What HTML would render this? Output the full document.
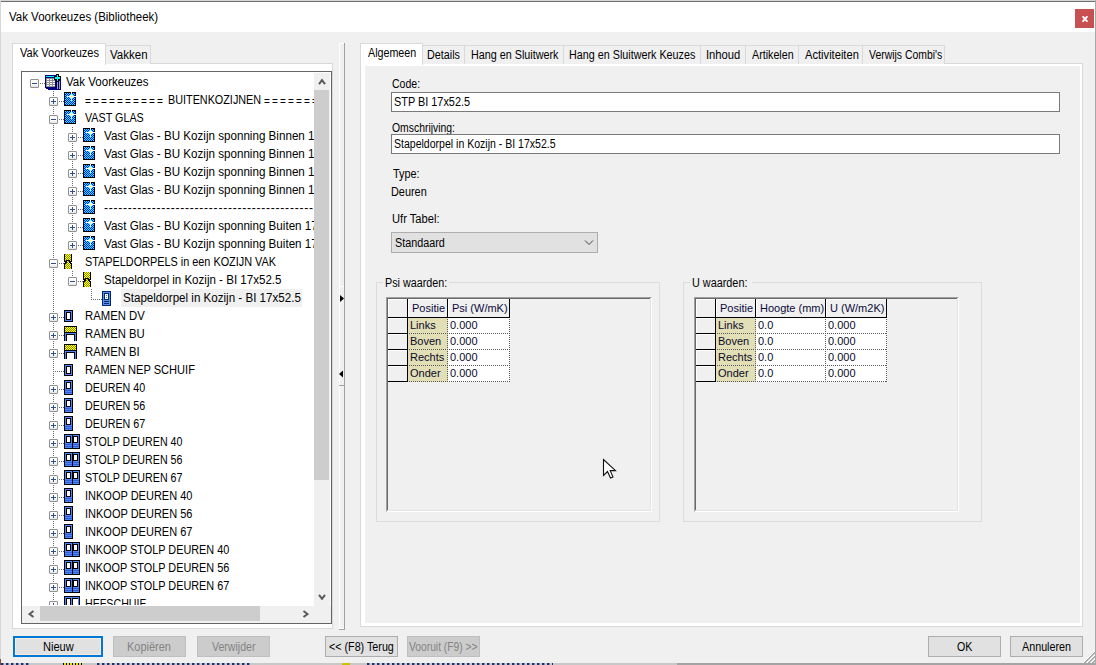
<!DOCTYPE html><html><head><meta charset="utf-8"><style>
*{margin:0;padding:0;box-sizing:border-box}
html,body{width:1096px;height:665px;overflow:hidden}
body{position:relative;background:#d6d6d6;font-family:"Liberation Sans",sans-serif;font-size:11px;color:#000}
div,svg,i{position:absolute;display:block}
.t{white-space:pre;line-height:13px;height:13px}
.tt{white-space:pre;font-size:12px;line-height:18px;height:18px}
.hd{height:1px;background:repeating-linear-gradient(to right,#6a6a6a 0 1px,transparent 1px 2px)}
.vd{width:1px;background:repeating-linear-gradient(to bottom,#6a6a6a 0 1px,transparent 1px 2px)}
.bx{width:9px;height:9px;border:1px solid #919191;border-radius:1px;background:linear-gradient(#ffffff 0,#ffffff 55%,#e4e4e4 100%)}
.bh{left:1px;top:3px;width:5px;height:1px;background:#2d4f8e}
.bv{left:3px;top:1px;width:1px;height:5px;background:#2d4f8e}
.sel{height:18px;background:#f0f0f0}
.tab{border:1px solid #d9d9d9;border-bottom:none;background:#f0f0f0}
.btn{border:1px solid #adadad;background:#e1e1e1;height:21px}
.dis{border:1px solid #bfbfbf;background:#cccccc;height:21px}
.dis .t{color:#838383}
</style></head><body>
<svg width="0" height="0" style="position:absolute"><defs><pattern id="pbc" width="2" height="2" patternUnits="userSpaceOnUse"><rect width="2" height="2" fill="#0000ff"/><rect width="1" height="1" fill="#00ffff"/><rect x="1" y="1" width="1" height="1" fill="#00ffff"/></pattern><pattern id="pyk" width="2" height="2" patternUnits="userSpaceOnUse"><rect width="2" height="2" fill="#ffff00"/><rect x="1" y="0" width="1" height="1" fill="#8a8a00"/><rect x="0" y="1" width="1" height="1" fill="#8a8a00"/></pattern></defs></svg>
<div style="left:0px;top:663px;width:677px;height:2px;background:#c8c8c8;"></div>
<div style="left:677px;top:663px;width:419px;height:2px;background:#a4a4a4;"></div>
<div style="left:1px;top:663px;width:30px;height:2px;background:repeating-linear-gradient(to right,#1d2f6e 0 2px,#7f8ab0 2px 3px,#c8c8c8 3px 5px)"></div>
<div style="left:97px;top:663px;width:153px;height:2px;background:repeating-linear-gradient(to right,#1d2f6e 0 2px,#7f8ab0 2px 3px,#c8c8c8 3px 5px)"></div>
<div style="left:367px;top:663px;width:186px;height:2px;background:repeating-linear-gradient(to right,#1d2f6e 0 2px,#7f8ab0 2px 3px,#c8c8c8 3px 5px)"></div>
<div style="left:63px;top:663px;width:19px;height:2px;background:#000;"></div>
<div style="left:64px;top:663px;width:17px;height:2px;background:repeating-linear-gradient(to right,#e8e000 0 2px,#000 2px 3px)"></div>
<div style="left:342px;top:663px;width:8px;height:2px;background:#c8c000;"></div>
<div style="left:0px;top:659px;width:1px;height:6px;background:#8a4a3a;"></div>
<div style="left:1px;top:1px;width:1094px;height:662px;background:#f0f0f0;"></div>
<div style="left:1px;top:1px;width:1094px;height:1px;background:#6e6e6e;"></div>
<div style="left:1px;top:2px;width:1094px;height:30px;background:#ffffff;"></div>
<div style="left:1095px;top:0px;width:1px;height:665px;background:#a8a8a8;"></div>
<div class="t" style="left:9.40px;top:10px;font-size:12px;line-height:14px;height:14px;transform:scaleX(0.9568);transform-origin:0 0;">Vak Voorkeuzes (Bibliotheek)</div>
<div style="left:1075px;top:9px;width:19px;height:19px;background:#c75050;"></div>
<svg style="left:1082px;top:16px" width="6" height="6" viewBox="0 0 6 6"><path d="M0.6 0.3L5.4 5.7M5.4 0.3L0.6 5.7" stroke="#fff" stroke-width="1.9"/></svg>
<div style="left:12px;top:63px;width:321px;height:566px;background:#ffffff;border:1px solid #d9d9d9"></div>
<div class="tab" style="left:105px;top:45px;width:46px;height:19px"></div>
<div class="t" style="left:109.70px;top:48px;font-size:12px;line-height:14px;height:14px;transform:scaleX(0.9590);transform-origin:0 0;">Vakken</div>
<div class="tab" style="left:12px;top:43px;width:94px;height:22px;background:#fff"></div>
<div class="t" style="left:19.80px;top:46px;font-size:12px;line-height:14px;height:14px;transform:scaleX(0.9200);transform-origin:0 0;">Vak Voorkeuzes</div>
<div style="left:21px;top:71px;width:311px;height:553px;background:#ffffff;border:1px solid #646464"></div>
<div style="left:22px;top:72px;width:292px;height:533px;overflow:hidden"><div style="left:-22px;top:-72px;width:400px;height:700px"><div class="vd" style="left:53px;top:91px;height:516px"></div>
<div class="vd" style="left:72px;top:127px;height:119px"></div>
<div class="vd" style="left:72px;top:271px;height:11px"></div>
<div class="vd" style="left:91px;top:289px;height:11px"></div>
<div class="hd" style="left:40px;top:83px;width:5px"></div>
<div class="hd" style="left:59px;top:101px;width:5px"></div>
<div class="hd" style="left:59px;top:119px;width:5px"></div>
<div class="hd" style="left:78px;top:137px;width:5px"></div>
<div class="hd" style="left:78px;top:155px;width:5px"></div>
<div class="hd" style="left:78px;top:173px;width:5px"></div>
<div class="hd" style="left:78px;top:191px;width:5px"></div>
<div class="hd" style="left:78px;top:209px;width:5px"></div>
<div class="hd" style="left:78px;top:227px;width:5px"></div>
<div class="hd" style="left:78px;top:245px;width:5px"></div>
<div class="hd" style="left:59px;top:263px;width:5px"></div>
<div class="hd" style="left:78px;top:281px;width:5px"></div>
<div class="hd" style="left:91px;top:299px;width:11px"></div>
<div class="hd" style="left:59px;top:317px;width:5px"></div>
<div class="hd" style="left:59px;top:335px;width:5px"></div>
<div class="hd" style="left:59px;top:353px;width:5px"></div>
<div class="hd" style="left:53px;top:371px;width:11px"></div>
<div class="hd" style="left:59px;top:389px;width:5px"></div>
<div class="hd" style="left:59px;top:407px;width:5px"></div>
<div class="hd" style="left:59px;top:425px;width:5px"></div>
<div class="hd" style="left:59px;top:443px;width:5px"></div>
<div class="hd" style="left:59px;top:461px;width:5px"></div>
<div class="hd" style="left:59px;top:479px;width:5px"></div>
<div class="hd" style="left:59px;top:497px;width:5px"></div>
<div class="hd" style="left:59px;top:515px;width:5px"></div>
<div class="hd" style="left:59px;top:533px;width:5px"></div>
<div class="hd" style="left:59px;top:551px;width:5px"></div>
<div class="hd" style="left:59px;top:569px;width:5px"></div>
<div class="hd" style="left:59px;top:587px;width:5px"></div>
<div class="hd" style="left:59px;top:605px;width:5px"></div>
<div class="bx" style="left:30px;top:79px"><i class="bh"></i></div>
<svg class="ic" style="left:45px;top:74px" width="16" height="16" viewBox="0 0 16 16" shape-rendering="crispEdges"><rect x="0" y="1" width="14" height="13" fill="#000080"/><rect x="1" y="14" width="13" height="1" fill="#000080"/><rect x="3" y="15" width="13" height="1" fill="#000080"/><rect x="10" y="6" width="6" height="10" fill="#000080"/><rect x="1" y="2" width="8" height="1" fill="#00ffff"/><rect x="1" y="4" width="9" height="9" fill="#909090"/><rect x="2" y="5" width="2" height="1" fill="#fff"/><rect x="5" y="5" width="2" height="1" fill="#fff"/><rect x="8" y="5" width="2" height="1" fill="#fff"/><rect x="2" y="7" width="2" height="1" fill="#fff"/><rect x="5" y="7" width="2" height="1" fill="#fff"/><rect x="8" y="7" width="2" height="1" fill="#fff"/><rect x="2" y="9" width="2" height="1" fill="#fff"/><rect x="5" y="9" width="2" height="1" fill="#fff"/><rect x="8" y="9" width="2" height="1" fill="#fff"/><rect x="2" y="11" width="2" height="1" fill="#fff"/><rect x="5" y="11" width="2" height="1" fill="#fff"/><rect x="8" y="11" width="2" height="1" fill="#fff"/><rect x="12" y="7" width="1" height="8" fill="#a0a0a0"/><rect x="14" y="7" width="1" height="8" fill="#a0a0a0"/><rect x="11" y="0" width="3" height="8" fill="#000"/><rect x="9" y="2" width="7" height="4" fill="#000"/><rect x="12" y="1" width="1" height="6" fill="#00ffff"/><rect x="10" y="3" width="5" height="2" fill="#00ffff"/></svg>
<div class="tt" style="left:66.00px;top:73px;transform:scaleX(0.9618);transform-origin:0 0;">Vak Voorkeuzes</div>
<div class="bx" style="left:49px;top:97px"><i class="bh"></i><i class="bv"></i></div>
<svg class="ic" style="left:64px;top:92px" width="12" height="14" viewBox="0 0 12 14" shape-rendering="crispEdges"><rect x="0" y="0" width="12" height="14" fill="#000"/><rect x="1" y="1" width="10" height="12" fill="url(#pbc)"/><rect x="7" y="0" width="1" height="9" fill="#fff"/><rect x="3" y="4" width="9" height="1" fill="#fff"/><rect x="6" y="3" width="3" height="3" fill="#fff"/><rect x="7" y="4" width="1" height="1" fill="#ff0"/></svg>
<div class="tt" style="left:85.17px;top:92px;transform:scaleX(0.8333);transform-origin:0 0;letter-spacing:2.592px">==========</div>
<div class="tt" style="left:167.80px;top:91px;transform:scaleX(0.9010);transform-origin:0 0;">BUITENKOZIJNEN</div>
<div class="tt" style="left:264.17px;top:92px;transform:scaleX(0.8333);transform-origin:0 0;letter-spacing:2.592px">==========</div>
<div class="bx" style="left:49px;top:115px"><i class="bh"></i></div>
<svg class="ic" style="left:64px;top:110px" width="12" height="14" viewBox="0 0 12 14" shape-rendering="crispEdges"><rect x="0" y="0" width="12" height="14" fill="#000"/><rect x="1" y="1" width="10" height="12" fill="url(#pbc)"/><rect x="7" y="0" width="1" height="9" fill="#fff"/><rect x="3" y="4" width="9" height="1" fill="#fff"/><rect x="6" y="3" width="3" height="3" fill="#fff"/><rect x="7" y="4" width="1" height="1" fill="#ff0"/></svg>
<div class="tt" style="left:84.80px;top:109px;transform:scaleX(0.8954);transform-origin:0 0;">VAST GLAS</div>
<div class="bx" style="left:68px;top:133px"><i class="bh"></i><i class="bv"></i></div>
<svg class="ic" style="left:83px;top:128px" width="12" height="14" viewBox="0 0 12 14" shape-rendering="crispEdges"><rect x="0" y="0" width="12" height="14" fill="#000"/><rect x="1" y="1" width="10" height="12" fill="url(#pbc)"/><rect x="7" y="0" width="1" height="9" fill="#fff"/><rect x="3" y="4" width="9" height="1" fill="#fff"/><rect x="6" y="3" width="3" height="3" fill="#fff"/><rect x="7" y="4" width="1" height="1" fill="#ff0"/></svg>
<div class="tt" style="left:104.00px;top:127px;transform:scaleX(0.9691);transform-origin:0 0;">Vast Glas - BU Kozijn sponning Binnen 17x52.5</div>
<div class="bx" style="left:68px;top:151px"><i class="bh"></i><i class="bv"></i></div>
<svg class="ic" style="left:83px;top:146px" width="12" height="14" viewBox="0 0 12 14" shape-rendering="crispEdges"><rect x="0" y="0" width="12" height="14" fill="#000"/><rect x="1" y="1" width="10" height="12" fill="url(#pbc)"/><rect x="7" y="0" width="1" height="9" fill="#fff"/><rect x="3" y="4" width="9" height="1" fill="#fff"/><rect x="6" y="3" width="3" height="3" fill="#fff"/><rect x="7" y="4" width="1" height="1" fill="#ff0"/></svg>
<div class="tt" style="left:104.00px;top:145px;transform:scaleX(0.9691);transform-origin:0 0;">Vast Glas - BU Kozijn sponning Binnen 17x52.5</div>
<div class="bx" style="left:68px;top:169px"><i class="bh"></i><i class="bv"></i></div>
<svg class="ic" style="left:83px;top:164px" width="12" height="14" viewBox="0 0 12 14" shape-rendering="crispEdges"><rect x="0" y="0" width="12" height="14" fill="#000"/><rect x="1" y="1" width="10" height="12" fill="url(#pbc)"/><rect x="7" y="0" width="1" height="9" fill="#fff"/><rect x="3" y="4" width="9" height="1" fill="#fff"/><rect x="6" y="3" width="3" height="3" fill="#fff"/><rect x="7" y="4" width="1" height="1" fill="#ff0"/></svg>
<div class="tt" style="left:104.00px;top:163px;transform:scaleX(0.9691);transform-origin:0 0;">Vast Glas - BU Kozijn sponning Binnen 17x52.5</div>
<div class="bx" style="left:68px;top:187px"><i class="bh"></i><i class="bv"></i></div>
<svg class="ic" style="left:83px;top:182px" width="12" height="14" viewBox="0 0 12 14" shape-rendering="crispEdges"><rect x="0" y="0" width="12" height="14" fill="#000"/><rect x="1" y="1" width="10" height="12" fill="url(#pbc)"/><rect x="7" y="0" width="1" height="9" fill="#fff"/><rect x="3" y="4" width="9" height="1" fill="#fff"/><rect x="6" y="3" width="3" height="3" fill="#fff"/><rect x="7" y="4" width="1" height="1" fill="#ff0"/></svg>
<div class="tt" style="left:104.00px;top:181px;transform:scaleX(0.9691);transform-origin:0 0;">Vast Glas - BU Kozijn sponning Binnen 17x52.5</div>
<div class="bx" style="left:68px;top:205px"><i class="bh"></i><i class="bv"></i></div>
<svg class="ic" style="left:83px;top:200px" width="12" height="14" viewBox="0 0 12 14" shape-rendering="crispEdges"><rect x="0" y="0" width="12" height="14" fill="#000"/><rect x="1" y="1" width="10" height="12" fill="url(#pbc)"/><rect x="7" y="0" width="1" height="9" fill="#fff"/><rect x="3" y="4" width="9" height="1" fill="#fff"/><rect x="6" y="3" width="3" height="3" fill="#fff"/><rect x="7" y="4" width="1" height="1" fill="#ff0"/></svg>
<div class="tt" style="left:104px;top:199px;letter-spacing:0.77px">------------------------------------------------------------</div>
<div class="bx" style="left:68px;top:223px"><i class="bh"></i><i class="bv"></i></div>
<svg class="ic" style="left:83px;top:218px" width="12" height="14" viewBox="0 0 12 14" shape-rendering="crispEdges"><rect x="0" y="0" width="12" height="14" fill="#000"/><rect x="1" y="1" width="10" height="12" fill="url(#pbc)"/><rect x="7" y="0" width="1" height="9" fill="#fff"/><rect x="3" y="4" width="9" height="1" fill="#fff"/><rect x="6" y="3" width="3" height="3" fill="#fff"/><rect x="7" y="4" width="1" height="1" fill="#ff0"/></svg>
<div class="tt" style="left:104.00px;top:217px;transform:scaleX(0.9691);transform-origin:0 0;">Vast Glas - BU Kozijn sponning Buiten 17x52.5</div>
<div class="bx" style="left:68px;top:241px"><i class="bh"></i><i class="bv"></i></div>
<svg class="ic" style="left:83px;top:236px" width="12" height="14" viewBox="0 0 12 14" shape-rendering="crispEdges"><rect x="0" y="0" width="12" height="14" fill="#000"/><rect x="1" y="1" width="10" height="12" fill="url(#pbc)"/><rect x="7" y="0" width="1" height="9" fill="#fff"/><rect x="3" y="4" width="9" height="1" fill="#fff"/><rect x="6" y="3" width="3" height="3" fill="#fff"/><rect x="7" y="4" width="1" height="1" fill="#ff0"/></svg>
<div class="tt" style="left:104.00px;top:235px;transform:scaleX(0.9691);transform-origin:0 0;">Vast Glas - BU Kozijn sponning Buiten 17x52.5</div>
<div class="bx" style="left:49px;top:259px"><i class="bh"></i></div>
<svg class="ic" style="left:64px;top:254px" width="8" height="15" viewBox="0 0 8 15" shape-rendering="crispEdges"><rect x="0" y="0" width="8" height="15" fill="url(#pyk)"/><rect x="0" y="0" width="1" height="1" fill="#000"/><rect x="7" y="0" width="1" height="1" fill="#000"/><rect x="0" y="1" width="1" height="1" fill="#000"/><rect x="7" y="1" width="1" height="1" fill="#000"/><rect x="0" y="2" width="1" height="1" fill="#000"/><rect x="7" y="2" width="1" height="1" fill="#000"/><rect x="0" y="3" width="1" height="1" fill="#000"/><rect x="7" y="3" width="1" height="1" fill="#000"/><rect x="0" y="4" width="1" height="1" fill="#000"/><rect x="7" y="4" width="1" height="1" fill="#000"/><rect x="0" y="5" width="1" height="1" fill="#000"/><rect x="7" y="5" width="1" height="1" fill="#000"/><rect x="0" y="6" width="1" height="1" fill="#000"/><rect x="2" y="6" width="1" height="1" fill="#000"/><rect x="3" y="6" width="1" height="1" fill="#000"/><rect x="4" y="6" width="1" height="1" fill="#000"/><rect x="5" y="6" width="1" height="1" fill="#000"/><rect x="7" y="6" width="1" height="1" fill="#000"/><rect x="0" y="7" width="1" height="1" fill="#000"/><rect x="1" y="7" width="1" height="1" fill="#000"/><rect x="2" y="7" width="1" height="1" fill="#000"/><rect x="5" y="7" width="1" height="1" fill="#000"/><rect x="6" y="7" width="1" height="1" fill="#000"/><rect x="7" y="7" width="1" height="1" fill="#000"/><rect x="0" y="8" width="1" height="1" fill="#fff"/><rect x="1" y="8" width="1" height="1" fill="#000"/><rect x="2" y="8" width="1" height="1" fill="#000"/><rect x="5" y="8" width="1" height="1" fill="#000"/><rect x="6" y="8" width="1" height="1" fill="#000"/><rect x="7" y="8" width="1" height="1" fill="#fff"/><rect x="0" y="9" width="1" height="1" fill="#000"/><rect x="1" y="9" width="1" height="1" fill="#000"/><rect x="6" y="9" width="1" height="1" fill="#000"/><rect x="7" y="9" width="1" height="1" fill="#000"/><rect x="0" y="10" width="1" height="1" fill="#000"/><rect x="7" y="10" width="1" height="1" fill="#000"/><rect x="0" y="11" width="1" height="1" fill="#000"/><rect x="7" y="11" width="1" height="1" fill="#000"/><rect x="0" y="12" width="1" height="1" fill="#000"/><rect x="7" y="12" width="1" height="1" fill="#000"/><rect x="0" y="13" width="1" height="1" fill="#000"/><rect x="7" y="13" width="1" height="1" fill="#000"/><rect x="0" y="14" width="1" height="1" fill="#000"/><rect x="7" y="14" width="1" height="1" fill="#000"/></svg>
<div class="tt" style="left:84.69px;top:253px;transform:scaleX(0.9052);transform-origin:0 0;">STAPELDORPELS in een KOZIJN VAK</div>
<div class="bx" style="left:68px;top:277px"><i class="bh"></i></div>
<svg class="ic" style="left:83px;top:272px" width="8" height="15" viewBox="0 0 8 15" shape-rendering="crispEdges"><rect x="0" y="0" width="8" height="15" fill="url(#pyk)"/><rect x="0" y="0" width="1" height="1" fill="#000"/><rect x="7" y="0" width="1" height="1" fill="#000"/><rect x="0" y="1" width="1" height="1" fill="#000"/><rect x="7" y="1" width="1" height="1" fill="#000"/><rect x="0" y="2" width="1" height="1" fill="#000"/><rect x="7" y="2" width="1" height="1" fill="#000"/><rect x="0" y="3" width="1" height="1" fill="#000"/><rect x="7" y="3" width="1" height="1" fill="#000"/><rect x="0" y="4" width="1" height="1" fill="#000"/><rect x="7" y="4" width="1" height="1" fill="#000"/><rect x="0" y="5" width="1" height="1" fill="#000"/><rect x="7" y="5" width="1" height="1" fill="#000"/><rect x="0" y="6" width="1" height="1" fill="#000"/><rect x="2" y="6" width="1" height="1" fill="#000"/><rect x="3" y="6" width="1" height="1" fill="#000"/><rect x="4" y="6" width="1" height="1" fill="#000"/><rect x="5" y="6" width="1" height="1" fill="#000"/><rect x="7" y="6" width="1" height="1" fill="#000"/><rect x="0" y="7" width="1" height="1" fill="#000"/><rect x="1" y="7" width="1" height="1" fill="#000"/><rect x="2" y="7" width="1" height="1" fill="#000"/><rect x="5" y="7" width="1" height="1" fill="#000"/><rect x="6" y="7" width="1" height="1" fill="#000"/><rect x="7" y="7" width="1" height="1" fill="#000"/><rect x="0" y="8" width="1" height="1" fill="#fff"/><rect x="1" y="8" width="1" height="1" fill="#000"/><rect x="2" y="8" width="1" height="1" fill="#000"/><rect x="5" y="8" width="1" height="1" fill="#000"/><rect x="6" y="8" width="1" height="1" fill="#000"/><rect x="7" y="8" width="1" height="1" fill="#fff"/><rect x="0" y="9" width="1" height="1" fill="#000"/><rect x="1" y="9" width="1" height="1" fill="#000"/><rect x="6" y="9" width="1" height="1" fill="#000"/><rect x="7" y="9" width="1" height="1" fill="#000"/><rect x="0" y="10" width="1" height="1" fill="#000"/><rect x="7" y="10" width="1" height="1" fill="#000"/><rect x="0" y="11" width="1" height="1" fill="#000"/><rect x="7" y="11" width="1" height="1" fill="#000"/><rect x="0" y="12" width="1" height="1" fill="#000"/><rect x="7" y="12" width="1" height="1" fill="#000"/><rect x="0" y="13" width="1" height="1" fill="#000"/><rect x="7" y="13" width="1" height="1" fill="#000"/><rect x="0" y="14" width="1" height="1" fill="#000"/><rect x="7" y="14" width="1" height="1" fill="#000"/></svg>
<div class="tt" style="left:103.84px;top:271px;transform:scaleX(0.9639);transform-origin:0 0;">Stapeldorpel in Kozijn - BI 17x52.5</div>
<svg class="ic" style="left:102px;top:291px" width="9" height="15" viewBox="0 0 9 15" shape-rendering="crispEdges"><rect x="0" y="0" width="1" height="1" fill="#00286e"/><rect x="1" y="0" width="1" height="1" fill="#00286e"/><rect x="2" y="0" width="1" height="1" fill="#00286e"/><rect x="3" y="0" width="1" height="1" fill="#00286e"/><rect x="4" y="0" width="1" height="1" fill="#00286e"/><rect x="5" y="0" width="1" height="1" fill="#00286e"/><rect x="6" y="0" width="1" height="1" fill="#00286e"/><rect x="7" y="0" width="1" height="1" fill="#00286e"/><rect x="8" y="0" width="1" height="1" fill="#00286e"/><rect x="0" y="1" width="1" height="1" fill="#00286e"/><rect x="1" y="1" width="1" height="1" fill="#5b8ef0"/><rect x="2" y="1" width="1" height="1" fill="#5b8ef0"/><rect x="3" y="1" width="1" height="1" fill="#5b8ef0"/><rect x="4" y="1" width="1" height="1" fill="#5b8ef0"/><rect x="5" y="1" width="1" height="1" fill="#5b8ef0"/><rect x="6" y="1" width="1" height="1" fill="#5b8ef0"/><rect x="7" y="1" width="1" height="1" fill="#5b8ef0"/><rect x="8" y="1" width="1" height="1" fill="#00286e"/><rect x="0" y="2" width="1" height="1" fill="#00286e"/><rect x="1" y="2" width="1" height="1" fill="#5b8ef0"/><rect x="2" y="2" width="1" height="1" fill="#00286e"/><rect x="3" y="2" width="1" height="1" fill="#00286e"/><rect x="4" y="2" width="1" height="1" fill="#00286e"/><rect x="5" y="2" width="1" height="1" fill="#00286e"/><rect x="6" y="2" width="1" height="1" fill="#00286e"/><rect x="7" y="2" width="1" height="1" fill="#5b8ef0"/><rect x="8" y="2" width="1" height="1" fill="#00286e"/><rect x="0" y="3" width="1" height="1" fill="#00286e"/><rect x="1" y="3" width="1" height="1" fill="#5b8ef0"/><rect x="2" y="3" width="1" height="1" fill="#00286e"/><rect x="3" y="3" width="1" height="1" fill="#ffffff"/><rect x="4" y="3" width="1" height="1" fill="#ffffff"/><rect x="5" y="3" width="1" height="1" fill="#ffffff"/><rect x="6" y="3" width="1" height="1" fill="#00286e"/><rect x="7" y="3" width="1" height="1" fill="#5b8ef0"/><rect x="8" y="3" width="1" height="1" fill="#00286e"/><rect x="0" y="4" width="1" height="1" fill="#00286e"/><rect x="1" y="4" width="1" height="1" fill="#5b8ef0"/><rect x="2" y="4" width="1" height="1" fill="#00286e"/><rect x="3" y="4" width="1" height="1" fill="#ffffff"/><rect x="4" y="4" width="1" height="1" fill="#4a7ae8"/><rect x="5" y="4" width="1" height="1" fill="#ffffff"/><rect x="6" y="4" width="1" height="1" fill="#00286e"/><rect x="7" y="4" width="1" height="1" fill="#5b8ef0"/><rect x="8" y="4" width="1" height="1" fill="#00286e"/><rect x="0" y="5" width="1" height="1" fill="#00286e"/><rect x="1" y="5" width="1" height="1" fill="#5b8ef0"/><rect x="2" y="5" width="1" height="1" fill="#00286e"/><rect x="3" y="5" width="1" height="1" fill="#ffffff"/><rect x="4" y="5" width="1" height="1" fill="#ffffff"/><rect x="5" y="5" width="1" height="1" fill="#ffffff"/><rect x="6" y="5" width="1" height="1" fill="#00286e"/><rect x="7" y="5" width="1" height="1" fill="#5b8ef0"/><rect x="8" y="5" width="1" height="1" fill="#00286e"/><rect x="0" y="6" width="1" height="1" fill="#00286e"/><rect x="1" y="6" width="1" height="1" fill="#5b8ef0"/><rect x="2" y="6" width="1" height="1" fill="#00286e"/><rect x="3" y="6" width="1" height="1" fill="#ffffff"/><rect x="4" y="6" width="1" height="1" fill="#4a7ae8"/><rect x="5" y="6" width="1" height="1" fill="#ffffff"/><rect x="6" y="6" width="1" height="1" fill="#00286e"/><rect x="7" y="6" width="1" height="1" fill="#5b8ef0"/><rect x="8" y="6" width="1" height="1" fill="#00286e"/><rect x="0" y="7" width="1" height="1" fill="#00286e"/><rect x="1" y="7" width="1" height="1" fill="#5b8ef0"/><rect x="2" y="7" width="1" height="1" fill="#00286e"/><rect x="3" y="7" width="1" height="1" fill="#ffffff"/><rect x="4" y="7" width="1" height="1" fill="#ffffff"/><rect x="5" y="7" width="1" height="1" fill="#ffffff"/><rect x="6" y="7" width="1" height="1" fill="#00286e"/><rect x="7" y="7" width="1" height="1" fill="#5b8ef0"/><rect x="8" y="7" width="1" height="1" fill="#00286e"/><rect x="0" y="8" width="1" height="1" fill="#00286e"/><rect x="1" y="8" width="1" height="1" fill="#5b8ef0"/><rect x="2" y="8" width="1" height="1" fill="#00286e"/><rect x="3" y="8" width="1" height="1" fill="#00286e"/><rect x="4" y="8" width="1" height="1" fill="#00286e"/><rect x="5" y="8" width="1" height="1" fill="#00286e"/><rect x="6" y="8" width="1" height="1" fill="#00286e"/><rect x="7" y="8" width="1" height="1" fill="#5b8ef0"/><rect x="8" y="8" width="1" height="1" fill="#00286e"/><rect x="0" y="9" width="1" height="1" fill="#00286e"/><rect x="1" y="9" width="1" height="1" fill="#5b8ef0"/><rect x="2" y="9" width="1" height="1" fill="#5b8ef0"/><rect x="3" y="9" width="1" height="1" fill="#5b8ef0"/><rect x="4" y="9" width="1" height="1" fill="#5b8ef0"/><rect x="5" y="9" width="1" height="1" fill="#5b8ef0"/><rect x="6" y="9" width="1" height="1" fill="#5b8ef0"/><rect x="7" y="9" width="1" height="1" fill="#5b8ef0"/><rect x="8" y="9" width="1" height="1" fill="#00286e"/><rect x="0" y="10" width="1" height="1" fill="#00286e"/><rect x="1" y="10" width="1" height="1" fill="#5b8ef0"/><rect x="2" y="10" width="1" height="1" fill="#00286e"/><rect x="3" y="10" width="1" height="1" fill="#00286e"/><rect x="4" y="10" width="1" height="1" fill="#00286e"/><rect x="5" y="10" width="1" height="1" fill="#00286e"/><rect x="6" y="10" width="1" height="1" fill="#00286e"/><rect x="7" y="10" width="1" height="1" fill="#5b8ef0"/><rect x="8" y="10" width="1" height="1" fill="#00286e"/><rect x="0" y="11" width="1" height="1" fill="#00286e"/><rect x="1" y="11" width="1" height="1" fill="#5b8ef0"/><rect x="2" y="11" width="1" height="1" fill="#5b8ef0"/><rect x="3" y="11" width="1" height="1" fill="#5b8ef0"/><rect x="4" y="11" width="1" height="1" fill="#5b8ef0"/><rect x="5" y="11" width="1" height="1" fill="#5b8ef0"/><rect x="6" y="11" width="1" height="1" fill="#5b8ef0"/><rect x="7" y="11" width="1" height="1" fill="#5b8ef0"/><rect x="8" y="11" width="1" height="1" fill="#00286e"/><rect x="0" y="12" width="1" height="1" fill="#00286e"/><rect x="1" y="12" width="1" height="1" fill="#5b8ef0"/><rect x="2" y="12" width="1" height="1" fill="#00286e"/><rect x="3" y="12" width="1" height="1" fill="#00286e"/><rect x="4" y="12" width="1" height="1" fill="#00286e"/><rect x="5" y="12" width="1" height="1" fill="#00286e"/><rect x="6" y="12" width="1" height="1" fill="#00286e"/><rect x="7" y="12" width="1" height="1" fill="#5b8ef0"/><rect x="8" y="12" width="1" height="1" fill="#00286e"/><rect x="0" y="13" width="1" height="1" fill="#00286e"/><rect x="1" y="13" width="1" height="1" fill="#5b8ef0"/><rect x="2" y="13" width="1" height="1" fill="#5b8ef0"/><rect x="3" y="13" width="1" height="1" fill="#5b8ef0"/><rect x="4" y="13" width="1" height="1" fill="#5b8ef0"/><rect x="5" y="13" width="1" height="1" fill="#5b8ef0"/><rect x="6" y="13" width="1" height="1" fill="#5b8ef0"/><rect x="7" y="13" width="1" height="1" fill="#5b8ef0"/><rect x="8" y="13" width="1" height="1" fill="#00286e"/><rect x="0" y="14" width="1" height="1" fill="#00286e"/><rect x="1" y="14" width="1" height="1" fill="#00286e"/><rect x="2" y="14" width="1" height="1" fill="#00286e"/><rect x="3" y="14" width="1" height="1" fill="#00286e"/><rect x="4" y="14" width="1" height="1" fill="#00286e"/><rect x="5" y="14" width="1" height="1" fill="#00286e"/><rect x="6" y="14" width="1" height="1" fill="#00286e"/><rect x="7" y="14" width="1" height="1" fill="#00286e"/><rect x="8" y="14" width="1" height="1" fill="#00286e"/></svg>
<div class="sel" style="left:121px;top:289px;width:181px"></div>
<div class="tt" style="left:122.83px;top:289px;transform:scaleX(0.9661);transform-origin:0 0;">Stapeldorpel in Kozijn - BI 17x52.5</div>
<div class="bx" style="left:49px;top:313px"><i class="bh"></i><i class="bv"></i></div>
<svg class="ic" style="left:64px;top:310px" width="9" height="12" viewBox="0 0 9 12" shape-rendering="crispEdges"><rect x="0" y="0" width="9" height="12" fill="#000"/><rect x="1" y="1" width="7" height="10" fill="#4f86f7"/><rect x="2" y="2" width="5" height="8" fill="#000"/><rect x="3" y="3" width="3" height="6" fill="#fff"/></svg>
<div class="tt" style="left:85.06px;top:307px;transform:scaleX(0.9435);transform-origin:0 0;">RAMEN DV</div>
<div class="bx" style="left:49px;top:331px"><i class="bh"></i><i class="bv"></i></div>
<svg class="ic" style="left:64px;top:326px" width="13" height="15" viewBox="0 0 13 15" shape-rendering="crispEdges"><rect x="0" y="0" width="13" height="7" fill="#000"/><rect x="1" y="1" width="11" height="5" fill="url(#pyk)"/><rect x="0" y="7" width="13" height="8" fill="#000"/><rect x="1" y="7" width="11" height="1" fill="#4f86f7"/><rect x="1" y="7" width="1" height="8" fill="#4f86f7"/><rect x="11" y="7" width="1" height="8" fill="#4f86f7"/><rect x="3" y="9" width="7" height="6" fill="#fff"/></svg>
<div class="tt" style="left:85.06px;top:325px;transform:scaleX(0.9435);transform-origin:0 0;">RAMEN BU</div>
<div class="bx" style="left:49px;top:349px"><i class="bh"></i><i class="bv"></i></div>
<svg class="ic" style="left:64px;top:344px" width="13" height="15" viewBox="0 0 13 15" shape-rendering="crispEdges"><rect x="0" y="0" width="13" height="7" fill="#000"/><rect x="1" y="1" width="11" height="5" fill="url(#pyk)"/><rect x="0" y="7" width="13" height="8" fill="#000"/><rect x="1" y="7" width="11" height="1" fill="#4f86f7"/><rect x="1" y="7" width="1" height="8" fill="#4f86f7"/><rect x="11" y="7" width="1" height="8" fill="#4f86f7"/><rect x="3" y="9" width="7" height="6" fill="#fff"/></svg>
<div class="tt" style="left:85.06px;top:343px;transform:scaleX(0.9435);transform-origin:0 0;">RAMEN BI</div>
<svg class="ic" style="left:64px;top:364px" width="9" height="12" viewBox="0 0 9 12" shape-rendering="crispEdges"><rect x="0" y="0" width="9" height="12" fill="#000"/><rect x="1" y="1" width="7" height="10" fill="#4f86f7"/><rect x="2" y="2" width="5" height="8" fill="#000"/><rect x="3" y="3" width="3" height="6" fill="#fff"/></svg>
<div class="tt" style="left:85.08px;top:361px;transform:scaleX(0.9229);transform-origin:0 0;">RAMEN NEP SCHUIF</div>
<div class="bx" style="left:49px;top:385px"><i class="bh"></i><i class="bv"></i></div>
<svg class="ic" style="left:64px;top:380px" width="9" height="15" viewBox="0 0 9 15" shape-rendering="crispEdges"><rect x="0" y="0" width="1" height="1" fill="#000"/><rect x="1" y="0" width="1" height="1" fill="#000"/><rect x="2" y="0" width="1" height="1" fill="#000"/><rect x="3" y="0" width="1" height="1" fill="#000"/><rect x="4" y="0" width="1" height="1" fill="#000"/><rect x="5" y="0" width="1" height="1" fill="#000"/><rect x="6" y="0" width="1" height="1" fill="#000"/><rect x="7" y="0" width="1" height="1" fill="#000"/><rect x="8" y="0" width="1" height="1" fill="#000"/><rect x="0" y="1" width="1" height="1" fill="#000"/><rect x="1" y="1" width="1" height="1" fill="#4f86f7"/><rect x="2" y="1" width="1" height="1" fill="#4f86f7"/><rect x="3" y="1" width="1" height="1" fill="#4f86f7"/><rect x="4" y="1" width="1" height="1" fill="#4f86f7"/><rect x="5" y="1" width="1" height="1" fill="#4f86f7"/><rect x="6" y="1" width="1" height="1" fill="#4f86f7"/><rect x="7" y="1" width="1" height="1" fill="#4f86f7"/><rect x="8" y="1" width="1" height="1" fill="#000"/><rect x="0" y="2" width="1" height="1" fill="#000"/><rect x="1" y="2" width="1" height="1" fill="#4f86f7"/><rect x="2" y="2" width="1" height="1" fill="#000"/><rect x="3" y="2" width="1" height="1" fill="#000"/><rect x="4" y="2" width="1" height="1" fill="#000"/><rect x="5" y="2" width="1" height="1" fill="#000"/><rect x="6" y="2" width="1" height="1" fill="#000"/><rect x="7" y="2" width="1" height="1" fill="#4f86f7"/><rect x="8" y="2" width="1" height="1" fill="#000"/><rect x="0" y="3" width="1" height="1" fill="#000"/><rect x="1" y="3" width="1" height="1" fill="#4f86f7"/><rect x="2" y="3" width="1" height="1" fill="#000"/><rect x="3" y="3" width="1" height="1" fill="#fff"/><rect x="4" y="3" width="1" height="1" fill="#fff"/><rect x="5" y="3" width="1" height="1" fill="#fff"/><rect x="6" y="3" width="1" height="1" fill="#000"/><rect x="7" y="3" width="1" height="1" fill="#4f86f7"/><rect x="8" y="3" width="1" height="1" fill="#000"/><rect x="0" y="4" width="1" height="1" fill="#000"/><rect x="1" y="4" width="1" height="1" fill="#4f86f7"/><rect x="2" y="4" width="1" height="1" fill="#000"/><rect x="3" y="4" width="1" height="1" fill="#fff"/><rect x="4" y="4" width="1" height="1" fill="#fff"/><rect x="5" y="4" width="1" height="1" fill="#fff"/><rect x="6" y="4" width="1" height="1" fill="#000"/><rect x="7" y="4" width="1" height="1" fill="#4f86f7"/><rect x="8" y="4" width="1" height="1" fill="#000"/><rect x="0" y="5" width="1" height="1" fill="#000"/><rect x="1" y="5" width="1" height="1" fill="#4f86f7"/><rect x="2" y="5" width="1" height="1" fill="#000"/><rect x="3" y="5" width="1" height="1" fill="#fff"/><rect x="4" y="5" width="1" height="1" fill="#fff"/><rect x="5" y="5" width="1" height="1" fill="#fff"/><rect x="6" y="5" width="1" height="1" fill="#000"/><rect x="7" y="5" width="1" height="1" fill="#4f86f7"/><rect x="8" y="5" width="1" height="1" fill="#000"/><rect x="0" y="6" width="1" height="1" fill="#000"/><rect x="1" y="6" width="1" height="1" fill="#4f86f7"/><rect x="2" y="6" width="1" height="1" fill="#000"/><rect x="3" y="6" width="1" height="1" fill="#fff"/><rect x="4" y="6" width="1" height="1" fill="#fff"/><rect x="5" y="6" width="1" height="1" fill="#fff"/><rect x="6" y="6" width="1" height="1" fill="#000"/><rect x="7" y="6" width="1" height="1" fill="#4f86f7"/><rect x="8" y="6" width="1" height="1" fill="#000"/><rect x="0" y="7" width="1" height="1" fill="#000"/><rect x="1" y="7" width="1" height="1" fill="#4f86f7"/><rect x="2" y="7" width="1" height="1" fill="#000"/><rect x="3" y="7" width="1" height="1" fill="#fff"/><rect x="4" y="7" width="1" height="1" fill="#fff"/><rect x="5" y="7" width="1" height="1" fill="#fff"/><rect x="6" y="7" width="1" height="1" fill="#000"/><rect x="7" y="7" width="1" height="1" fill="#4f86f7"/><rect x="8" y="7" width="1" height="1" fill="#000"/><rect x="0" y="8" width="1" height="1" fill="#000"/><rect x="1" y="8" width="1" height="1" fill="#4f86f7"/><rect x="2" y="8" width="1" height="1" fill="#000"/><rect x="3" y="8" width="1" height="1" fill="#000"/><rect x="4" y="8" width="1" height="1" fill="#000"/><rect x="5" y="8" width="1" height="1" fill="#000"/><rect x="6" y="8" width="1" height="1" fill="#000"/><rect x="7" y="8" width="1" height="1" fill="#4f86f7"/><rect x="8" y="8" width="1" height="1" fill="#000"/><rect x="0" y="9" width="1" height="1" fill="#000"/><rect x="1" y="9" width="1" height="1" fill="#4f86f7"/><rect x="2" y="9" width="1" height="1" fill="#4f86f7"/><rect x="3" y="9" width="1" height="1" fill="#4f86f7"/><rect x="4" y="9" width="1" height="1" fill="#4f86f7"/><rect x="5" y="9" width="1" height="1" fill="#4f86f7"/><rect x="6" y="9" width="1" height="1" fill="#4f86f7"/><rect x="7" y="9" width="1" height="1" fill="#4f86f7"/><rect x="8" y="9" width="1" height="1" fill="#000"/><rect x="0" y="10" width="1" height="1" fill="#000"/><rect x="1" y="10" width="1" height="1" fill="#2f5fdc"/><rect x="2" y="10" width="1" height="1" fill="#2f5fdc"/><rect x="3" y="10" width="1" height="1" fill="#2f5fdc"/><rect x="4" y="10" width="1" height="1" fill="#2f5fdc"/><rect x="5" y="10" width="1" height="1" fill="#2f5fdc"/><rect x="6" y="10" width="1" height="1" fill="#2f5fdc"/><rect x="7" y="10" width="1" height="1" fill="#2f5fdc"/><rect x="8" y="10" width="1" height="1" fill="#000"/><rect x="0" y="11" width="1" height="1" fill="#000"/><rect x="1" y="11" width="1" height="1" fill="#4f86f7"/><rect x="2" y="11" width="1" height="1" fill="#4f86f7"/><rect x="3" y="11" width="1" height="1" fill="#4f86f7"/><rect x="4" y="11" width="1" height="1" fill="#4f86f7"/><rect x="5" y="11" width="1" height="1" fill="#4f86f7"/><rect x="6" y="11" width="1" height="1" fill="#4f86f7"/><rect x="7" y="11" width="1" height="1" fill="#4f86f7"/><rect x="8" y="11" width="1" height="1" fill="#000"/><rect x="0" y="12" width="1" height="1" fill="#000"/><rect x="1" y="12" width="1" height="1" fill="#2f5fdc"/><rect x="2" y="12" width="1" height="1" fill="#2f5fdc"/><rect x="3" y="12" width="1" height="1" fill="#2f5fdc"/><rect x="4" y="12" width="1" height="1" fill="#2f5fdc"/><rect x="5" y="12" width="1" height="1" fill="#2f5fdc"/><rect x="6" y="12" width="1" height="1" fill="#2f5fdc"/><rect x="7" y="12" width="1" height="1" fill="#2f5fdc"/><rect x="8" y="12" width="1" height="1" fill="#000"/><rect x="0" y="13" width="1" height="1" fill="#000"/><rect x="1" y="13" width="1" height="1" fill="#4f86f7"/><rect x="2" y="13" width="1" height="1" fill="#4f86f7"/><rect x="3" y="13" width="1" height="1" fill="#4f86f7"/><rect x="4" y="13" width="1" height="1" fill="#4f86f7"/><rect x="5" y="13" width="1" height="1" fill="#4f86f7"/><rect x="6" y="13" width="1" height="1" fill="#4f86f7"/><rect x="7" y="13" width="1" height="1" fill="#4f86f7"/><rect x="8" y="13" width="1" height="1" fill="#000"/><rect x="0" y="14" width="1" height="1" fill="#000"/><rect x="1" y="14" width="1" height="1" fill="#000"/><rect x="2" y="14" width="1" height="1" fill="#000"/><rect x="3" y="14" width="1" height="1" fill="#000"/><rect x="4" y="14" width="1" height="1" fill="#000"/><rect x="5" y="14" width="1" height="1" fill="#000"/><rect x="6" y="14" width="1" height="1" fill="#000"/><rect x="7" y="14" width="1" height="1" fill="#000"/><rect x="8" y="14" width="1" height="1" fill="#000"/></svg>
<div class="tt" style="left:85.11px;top:379px;transform:scaleX(0.8939);transform-origin:0 0;">DEUREN 40</div>
<div class="bx" style="left:49px;top:403px"><i class="bh"></i><i class="bv"></i></div>
<svg class="ic" style="left:64px;top:398px" width="9" height="15" viewBox="0 0 9 15" shape-rendering="crispEdges"><rect x="0" y="0" width="1" height="1" fill="#000"/><rect x="1" y="0" width="1" height="1" fill="#000"/><rect x="2" y="0" width="1" height="1" fill="#000"/><rect x="3" y="0" width="1" height="1" fill="#000"/><rect x="4" y="0" width="1" height="1" fill="#000"/><rect x="5" y="0" width="1" height="1" fill="#000"/><rect x="6" y="0" width="1" height="1" fill="#000"/><rect x="7" y="0" width="1" height="1" fill="#000"/><rect x="8" y="0" width="1" height="1" fill="#000"/><rect x="0" y="1" width="1" height="1" fill="#000"/><rect x="1" y="1" width="1" height="1" fill="#4f86f7"/><rect x="2" y="1" width="1" height="1" fill="#4f86f7"/><rect x="3" y="1" width="1" height="1" fill="#4f86f7"/><rect x="4" y="1" width="1" height="1" fill="#4f86f7"/><rect x="5" y="1" width="1" height="1" fill="#4f86f7"/><rect x="6" y="1" width="1" height="1" fill="#4f86f7"/><rect x="7" y="1" width="1" height="1" fill="#4f86f7"/><rect x="8" y="1" width="1" height="1" fill="#000"/><rect x="0" y="2" width="1" height="1" fill="#000"/><rect x="1" y="2" width="1" height="1" fill="#4f86f7"/><rect x="2" y="2" width="1" height="1" fill="#000"/><rect x="3" y="2" width="1" height="1" fill="#000"/><rect x="4" y="2" width="1" height="1" fill="#000"/><rect x="5" y="2" width="1" height="1" fill="#000"/><rect x="6" y="2" width="1" height="1" fill="#000"/><rect x="7" y="2" width="1" height="1" fill="#4f86f7"/><rect x="8" y="2" width="1" height="1" fill="#000"/><rect x="0" y="3" width="1" height="1" fill="#000"/><rect x="1" y="3" width="1" height="1" fill="#4f86f7"/><rect x="2" y="3" width="1" height="1" fill="#000"/><rect x="3" y="3" width="1" height="1" fill="#fff"/><rect x="4" y="3" width="1" height="1" fill="#fff"/><rect x="5" y="3" width="1" height="1" fill="#fff"/><rect x="6" y="3" width="1" height="1" fill="#000"/><rect x="7" y="3" width="1" height="1" fill="#4f86f7"/><rect x="8" y="3" width="1" height="1" fill="#000"/><rect x="0" y="4" width="1" height="1" fill="#000"/><rect x="1" y="4" width="1" height="1" fill="#4f86f7"/><rect x="2" y="4" width="1" height="1" fill="#000"/><rect x="3" y="4" width="1" height="1" fill="#fff"/><rect x="4" y="4" width="1" height="1" fill="#fff"/><rect x="5" y="4" width="1" height="1" fill="#fff"/><rect x="6" y="4" width="1" height="1" fill="#000"/><rect x="7" y="4" width="1" height="1" fill="#4f86f7"/><rect x="8" y="4" width="1" height="1" fill="#000"/><rect x="0" y="5" width="1" height="1" fill="#000"/><rect x="1" y="5" width="1" height="1" fill="#4f86f7"/><rect x="2" y="5" width="1" height="1" fill="#000"/><rect x="3" y="5" width="1" height="1" fill="#fff"/><rect x="4" y="5" width="1" height="1" fill="#fff"/><rect x="5" y="5" width="1" height="1" fill="#fff"/><rect x="6" y="5" width="1" height="1" fill="#000"/><rect x="7" y="5" width="1" height="1" fill="#4f86f7"/><rect x="8" y="5" width="1" height="1" fill="#000"/><rect x="0" y="6" width="1" height="1" fill="#000"/><rect x="1" y="6" width="1" height="1" fill="#4f86f7"/><rect x="2" y="6" width="1" height="1" fill="#000"/><rect x="3" y="6" width="1" height="1" fill="#fff"/><rect x="4" y="6" width="1" height="1" fill="#fff"/><rect x="5" y="6" width="1" height="1" fill="#fff"/><rect x="6" y="6" width="1" height="1" fill="#000"/><rect x="7" y="6" width="1" height="1" fill="#4f86f7"/><rect x="8" y="6" width="1" height="1" fill="#000"/><rect x="0" y="7" width="1" height="1" fill="#000"/><rect x="1" y="7" width="1" height="1" fill="#4f86f7"/><rect x="2" y="7" width="1" height="1" fill="#000"/><rect x="3" y="7" width="1" height="1" fill="#fff"/><rect x="4" y="7" width="1" height="1" fill="#fff"/><rect x="5" y="7" width="1" height="1" fill="#fff"/><rect x="6" y="7" width="1" height="1" fill="#000"/><rect x="7" y="7" width="1" height="1" fill="#4f86f7"/><rect x="8" y="7" width="1" height="1" fill="#000"/><rect x="0" y="8" width="1" height="1" fill="#000"/><rect x="1" y="8" width="1" height="1" fill="#4f86f7"/><rect x="2" y="8" width="1" height="1" fill="#000"/><rect x="3" y="8" width="1" height="1" fill="#000"/><rect x="4" y="8" width="1" height="1" fill="#000"/><rect x="5" y="8" width="1" height="1" fill="#000"/><rect x="6" y="8" width="1" height="1" fill="#000"/><rect x="7" y="8" width="1" height="1" fill="#4f86f7"/><rect x="8" y="8" width="1" height="1" fill="#000"/><rect x="0" y="9" width="1" height="1" fill="#000"/><rect x="1" y="9" width="1" height="1" fill="#4f86f7"/><rect x="2" y="9" width="1" height="1" fill="#4f86f7"/><rect x="3" y="9" width="1" height="1" fill="#4f86f7"/><rect x="4" y="9" width="1" height="1" fill="#4f86f7"/><rect x="5" y="9" width="1" height="1" fill="#4f86f7"/><rect x="6" y="9" width="1" height="1" fill="#4f86f7"/><rect x="7" y="9" width="1" height="1" fill="#4f86f7"/><rect x="8" y="9" width="1" height="1" fill="#000"/><rect x="0" y="10" width="1" height="1" fill="#000"/><rect x="1" y="10" width="1" height="1" fill="#2f5fdc"/><rect x="2" y="10" width="1" height="1" fill="#2f5fdc"/><rect x="3" y="10" width="1" height="1" fill="#2f5fdc"/><rect x="4" y="10" width="1" height="1" fill="#2f5fdc"/><rect x="5" y="10" width="1" height="1" fill="#2f5fdc"/><rect x="6" y="10" width="1" height="1" fill="#2f5fdc"/><rect x="7" y="10" width="1" height="1" fill="#2f5fdc"/><rect x="8" y="10" width="1" height="1" fill="#000"/><rect x="0" y="11" width="1" height="1" fill="#000"/><rect x="1" y="11" width="1" height="1" fill="#4f86f7"/><rect x="2" y="11" width="1" height="1" fill="#4f86f7"/><rect x="3" y="11" width="1" height="1" fill="#4f86f7"/><rect x="4" y="11" width="1" height="1" fill="#4f86f7"/><rect x="5" y="11" width="1" height="1" fill="#4f86f7"/><rect x="6" y="11" width="1" height="1" fill="#4f86f7"/><rect x="7" y="11" width="1" height="1" fill="#4f86f7"/><rect x="8" y="11" width="1" height="1" fill="#000"/><rect x="0" y="12" width="1" height="1" fill="#000"/><rect x="1" y="12" width="1" height="1" fill="#2f5fdc"/><rect x="2" y="12" width="1" height="1" fill="#2f5fdc"/><rect x="3" y="12" width="1" height="1" fill="#2f5fdc"/><rect x="4" y="12" width="1" height="1" fill="#2f5fdc"/><rect x="5" y="12" width="1" height="1" fill="#2f5fdc"/><rect x="6" y="12" width="1" height="1" fill="#2f5fdc"/><rect x="7" y="12" width="1" height="1" fill="#2f5fdc"/><rect x="8" y="12" width="1" height="1" fill="#000"/><rect x="0" y="13" width="1" height="1" fill="#000"/><rect x="1" y="13" width="1" height="1" fill="#4f86f7"/><rect x="2" y="13" width="1" height="1" fill="#4f86f7"/><rect x="3" y="13" width="1" height="1" fill="#4f86f7"/><rect x="4" y="13" width="1" height="1" fill="#4f86f7"/><rect x="5" y="13" width="1" height="1" fill="#4f86f7"/><rect x="6" y="13" width="1" height="1" fill="#4f86f7"/><rect x="7" y="13" width="1" height="1" fill="#4f86f7"/><rect x="8" y="13" width="1" height="1" fill="#000"/><rect x="0" y="14" width="1" height="1" fill="#000"/><rect x="1" y="14" width="1" height="1" fill="#000"/><rect x="2" y="14" width="1" height="1" fill="#000"/><rect x="3" y="14" width="1" height="1" fill="#000"/><rect x="4" y="14" width="1" height="1" fill="#000"/><rect x="5" y="14" width="1" height="1" fill="#000"/><rect x="6" y="14" width="1" height="1" fill="#000"/><rect x="7" y="14" width="1" height="1" fill="#000"/><rect x="8" y="14" width="1" height="1" fill="#000"/></svg>
<div class="tt" style="left:85.11px;top:397px;transform:scaleX(0.8939);transform-origin:0 0;">DEUREN 56</div>
<div class="bx" style="left:49px;top:421px"><i class="bh"></i><i class="bv"></i></div>
<svg class="ic" style="left:64px;top:416px" width="9" height="15" viewBox="0 0 9 15" shape-rendering="crispEdges"><rect x="0" y="0" width="1" height="1" fill="#000"/><rect x="1" y="0" width="1" height="1" fill="#000"/><rect x="2" y="0" width="1" height="1" fill="#000"/><rect x="3" y="0" width="1" height="1" fill="#000"/><rect x="4" y="0" width="1" height="1" fill="#000"/><rect x="5" y="0" width="1" height="1" fill="#000"/><rect x="6" y="0" width="1" height="1" fill="#000"/><rect x="7" y="0" width="1" height="1" fill="#000"/><rect x="8" y="0" width="1" height="1" fill="#000"/><rect x="0" y="1" width="1" height="1" fill="#000"/><rect x="1" y="1" width="1" height="1" fill="#4f86f7"/><rect x="2" y="1" width="1" height="1" fill="#4f86f7"/><rect x="3" y="1" width="1" height="1" fill="#4f86f7"/><rect x="4" y="1" width="1" height="1" fill="#4f86f7"/><rect x="5" y="1" width="1" height="1" fill="#4f86f7"/><rect x="6" y="1" width="1" height="1" fill="#4f86f7"/><rect x="7" y="1" width="1" height="1" fill="#4f86f7"/><rect x="8" y="1" width="1" height="1" fill="#000"/><rect x="0" y="2" width="1" height="1" fill="#000"/><rect x="1" y="2" width="1" height="1" fill="#4f86f7"/><rect x="2" y="2" width="1" height="1" fill="#000"/><rect x="3" y="2" width="1" height="1" fill="#000"/><rect x="4" y="2" width="1" height="1" fill="#000"/><rect x="5" y="2" width="1" height="1" fill="#000"/><rect x="6" y="2" width="1" height="1" fill="#000"/><rect x="7" y="2" width="1" height="1" fill="#4f86f7"/><rect x="8" y="2" width="1" height="1" fill="#000"/><rect x="0" y="3" width="1" height="1" fill="#000"/><rect x="1" y="3" width="1" height="1" fill="#4f86f7"/><rect x="2" y="3" width="1" height="1" fill="#000"/><rect x="3" y="3" width="1" height="1" fill="#fff"/><rect x="4" y="3" width="1" height="1" fill="#fff"/><rect x="5" y="3" width="1" height="1" fill="#fff"/><rect x="6" y="3" width="1" height="1" fill="#000"/><rect x="7" y="3" width="1" height="1" fill="#4f86f7"/><rect x="8" y="3" width="1" height="1" fill="#000"/><rect x="0" y="4" width="1" height="1" fill="#000"/><rect x="1" y="4" width="1" height="1" fill="#4f86f7"/><rect x="2" y="4" width="1" height="1" fill="#000"/><rect x="3" y="4" width="1" height="1" fill="#fff"/><rect x="4" y="4" width="1" height="1" fill="#fff"/><rect x="5" y="4" width="1" height="1" fill="#fff"/><rect x="6" y="4" width="1" height="1" fill="#000"/><rect x="7" y="4" width="1" height="1" fill="#4f86f7"/><rect x="8" y="4" width="1" height="1" fill="#000"/><rect x="0" y="5" width="1" height="1" fill="#000"/><rect x="1" y="5" width="1" height="1" fill="#4f86f7"/><rect x="2" y="5" width="1" height="1" fill="#000"/><rect x="3" y="5" width="1" height="1" fill="#fff"/><rect x="4" y="5" width="1" height="1" fill="#fff"/><rect x="5" y="5" width="1" height="1" fill="#fff"/><rect x="6" y="5" width="1" height="1" fill="#000"/><rect x="7" y="5" width="1" height="1" fill="#4f86f7"/><rect x="8" y="5" width="1" height="1" fill="#000"/><rect x="0" y="6" width="1" height="1" fill="#000"/><rect x="1" y="6" width="1" height="1" fill="#4f86f7"/><rect x="2" y="6" width="1" height="1" fill="#000"/><rect x="3" y="6" width="1" height="1" fill="#fff"/><rect x="4" y="6" width="1" height="1" fill="#fff"/><rect x="5" y="6" width="1" height="1" fill="#fff"/><rect x="6" y="6" width="1" height="1" fill="#000"/><rect x="7" y="6" width="1" height="1" fill="#4f86f7"/><rect x="8" y="6" width="1" height="1" fill="#000"/><rect x="0" y="7" width="1" height="1" fill="#000"/><rect x="1" y="7" width="1" height="1" fill="#4f86f7"/><rect x="2" y="7" width="1" height="1" fill="#000"/><rect x="3" y="7" width="1" height="1" fill="#fff"/><rect x="4" y="7" width="1" height="1" fill="#fff"/><rect x="5" y="7" width="1" height="1" fill="#fff"/><rect x="6" y="7" width="1" height="1" fill="#000"/><rect x="7" y="7" width="1" height="1" fill="#4f86f7"/><rect x="8" y="7" width="1" height="1" fill="#000"/><rect x="0" y="8" width="1" height="1" fill="#000"/><rect x="1" y="8" width="1" height="1" fill="#4f86f7"/><rect x="2" y="8" width="1" height="1" fill="#000"/><rect x="3" y="8" width="1" height="1" fill="#000"/><rect x="4" y="8" width="1" height="1" fill="#000"/><rect x="5" y="8" width="1" height="1" fill="#000"/><rect x="6" y="8" width="1" height="1" fill="#000"/><rect x="7" y="8" width="1" height="1" fill="#4f86f7"/><rect x="8" y="8" width="1" height="1" fill="#000"/><rect x="0" y="9" width="1" height="1" fill="#000"/><rect x="1" y="9" width="1" height="1" fill="#4f86f7"/><rect x="2" y="9" width="1" height="1" fill="#4f86f7"/><rect x="3" y="9" width="1" height="1" fill="#4f86f7"/><rect x="4" y="9" width="1" height="1" fill="#4f86f7"/><rect x="5" y="9" width="1" height="1" fill="#4f86f7"/><rect x="6" y="9" width="1" height="1" fill="#4f86f7"/><rect x="7" y="9" width="1" height="1" fill="#4f86f7"/><rect x="8" y="9" width="1" height="1" fill="#000"/><rect x="0" y="10" width="1" height="1" fill="#000"/><rect x="1" y="10" width="1" height="1" fill="#2f5fdc"/><rect x="2" y="10" width="1" height="1" fill="#2f5fdc"/><rect x="3" y="10" width="1" height="1" fill="#2f5fdc"/><rect x="4" y="10" width="1" height="1" fill="#2f5fdc"/><rect x="5" y="10" width="1" height="1" fill="#2f5fdc"/><rect x="6" y="10" width="1" height="1" fill="#2f5fdc"/><rect x="7" y="10" width="1" height="1" fill="#2f5fdc"/><rect x="8" y="10" width="1" height="1" fill="#000"/><rect x="0" y="11" width="1" height="1" fill="#000"/><rect x="1" y="11" width="1" height="1" fill="#4f86f7"/><rect x="2" y="11" width="1" height="1" fill="#4f86f7"/><rect x="3" y="11" width="1" height="1" fill="#4f86f7"/><rect x="4" y="11" width="1" height="1" fill="#4f86f7"/><rect x="5" y="11" width="1" height="1" fill="#4f86f7"/><rect x="6" y="11" width="1" height="1" fill="#4f86f7"/><rect x="7" y="11" width="1" height="1" fill="#4f86f7"/><rect x="8" y="11" width="1" height="1" fill="#000"/><rect x="0" y="12" width="1" height="1" fill="#000"/><rect x="1" y="12" width="1" height="1" fill="#2f5fdc"/><rect x="2" y="12" width="1" height="1" fill="#2f5fdc"/><rect x="3" y="12" width="1" height="1" fill="#2f5fdc"/><rect x="4" y="12" width="1" height="1" fill="#2f5fdc"/><rect x="5" y="12" width="1" height="1" fill="#2f5fdc"/><rect x="6" y="12" width="1" height="1" fill="#2f5fdc"/><rect x="7" y="12" width="1" height="1" fill="#2f5fdc"/><rect x="8" y="12" width="1" height="1" fill="#000"/><rect x="0" y="13" width="1" height="1" fill="#000"/><rect x="1" y="13" width="1" height="1" fill="#4f86f7"/><rect x="2" y="13" width="1" height="1" fill="#4f86f7"/><rect x="3" y="13" width="1" height="1" fill="#4f86f7"/><rect x="4" y="13" width="1" height="1" fill="#4f86f7"/><rect x="5" y="13" width="1" height="1" fill="#4f86f7"/><rect x="6" y="13" width="1" height="1" fill="#4f86f7"/><rect x="7" y="13" width="1" height="1" fill="#4f86f7"/><rect x="8" y="13" width="1" height="1" fill="#000"/><rect x="0" y="14" width="1" height="1" fill="#000"/><rect x="1" y="14" width="1" height="1" fill="#000"/><rect x="2" y="14" width="1" height="1" fill="#000"/><rect x="3" y="14" width="1" height="1" fill="#000"/><rect x="4" y="14" width="1" height="1" fill="#000"/><rect x="5" y="14" width="1" height="1" fill="#000"/><rect x="6" y="14" width="1" height="1" fill="#000"/><rect x="7" y="14" width="1" height="1" fill="#000"/><rect x="8" y="14" width="1" height="1" fill="#000"/></svg>
<div class="tt" style="left:85.11px;top:415px;transform:scaleX(0.8939);transform-origin:0 0;">DEUREN 67</div>
<div class="bx" style="left:49px;top:439px"><i class="bh"></i><i class="bv"></i></div>
<svg class="ic" style="left:64px;top:434px" width="16" height="15" viewBox="0 0 16 15" shape-rendering="crispEdges"><rect x="0" y="0" width="1" height="1" fill="#000"/><rect x="1" y="0" width="1" height="1" fill="#000"/><rect x="2" y="0" width="1" height="1" fill="#000"/><rect x="3" y="0" width="1" height="1" fill="#000"/><rect x="4" y="0" width="1" height="1" fill="#000"/><rect x="5" y="0" width="1" height="1" fill="#000"/><rect x="6" y="0" width="1" height="1" fill="#000"/><rect x="7" y="0" width="1" height="1" fill="#000"/><rect x="8" y="0" width="1" height="1" fill="#000"/><rect x="9" y="0" width="1" height="1" fill="#000"/><rect x="10" y="0" width="1" height="1" fill="#000"/><rect x="11" y="0" width="1" height="1" fill="#000"/><rect x="12" y="0" width="1" height="1" fill="#000"/><rect x="13" y="0" width="1" height="1" fill="#000"/><rect x="14" y="0" width="1" height="1" fill="#000"/><rect x="15" y="0" width="1" height="1" fill="#000"/><rect x="0" y="1" width="1" height="1" fill="#000"/><rect x="1" y="1" width="1" height="1" fill="#4f86f7"/><rect x="2" y="1" width="1" height="1" fill="#4f86f7"/><rect x="3" y="1" width="1" height="1" fill="#4f86f7"/><rect x="4" y="1" width="1" height="1" fill="#4f86f7"/><rect x="5" y="1" width="1" height="1" fill="#4f86f7"/><rect x="6" y="1" width="1" height="1" fill="#4f86f7"/><rect x="7" y="1" width="1" height="1" fill="#4f86f7"/><rect x="8" y="1" width="1" height="1" fill="#000"/><rect x="9" y="1" width="1" height="1" fill="#4f86f7"/><rect x="10" y="1" width="1" height="1" fill="#4f86f7"/><rect x="11" y="1" width="1" height="1" fill="#4f86f7"/><rect x="12" y="1" width="1" height="1" fill="#4f86f7"/><rect x="13" y="1" width="1" height="1" fill="#4f86f7"/><rect x="14" y="1" width="1" height="1" fill="#4f86f7"/><rect x="15" y="1" width="1" height="1" fill="#000"/><rect x="0" y="2" width="1" height="1" fill="#000"/><rect x="1" y="2" width="1" height="1" fill="#4f86f7"/><rect x="2" y="2" width="1" height="1" fill="#000"/><rect x="3" y="2" width="1" height="1" fill="#000"/><rect x="4" y="2" width="1" height="1" fill="#000"/><rect x="5" y="2" width="1" height="1" fill="#000"/><rect x="6" y="2" width="1" height="1" fill="#000"/><rect x="7" y="2" width="1" height="1" fill="#4f86f7"/><rect x="8" y="2" width="1" height="1" fill="#000"/><rect x="9" y="2" width="1" height="1" fill="#000"/><rect x="10" y="2" width="1" height="1" fill="#000"/><rect x="11" y="2" width="1" height="1" fill="#000"/><rect x="12" y="2" width="1" height="1" fill="#000"/><rect x="13" y="2" width="1" height="1" fill="#000"/><rect x="14" y="2" width="1" height="1" fill="#4f86f7"/><rect x="15" y="2" width="1" height="1" fill="#000"/><rect x="0" y="3" width="1" height="1" fill="#000"/><rect x="1" y="3" width="1" height="1" fill="#4f86f7"/><rect x="2" y="3" width="1" height="1" fill="#000"/><rect x="3" y="3" width="1" height="1" fill="#fff"/><rect x="4" y="3" width="1" height="1" fill="#fff"/><rect x="5" y="3" width="1" height="1" fill="#fff"/><rect x="6" y="3" width="1" height="1" fill="#000"/><rect x="7" y="3" width="1" height="1" fill="#4f86f7"/><rect x="8" y="3" width="1" height="1" fill="#000"/><rect x="9" y="3" width="1" height="1" fill="#000"/><rect x="10" y="3" width="1" height="1" fill="#fff"/><rect x="11" y="3" width="1" height="1" fill="#fff"/><rect x="12" y="3" width="1" height="1" fill="#fff"/><rect x="13" y="3" width="1" height="1" fill="#000"/><rect x="14" y="3" width="1" height="1" fill="#4f86f7"/><rect x="15" y="3" width="1" height="1" fill="#000"/><rect x="0" y="4" width="1" height="1" fill="#000"/><rect x="1" y="4" width="1" height="1" fill="#4f86f7"/><rect x="2" y="4" width="1" height="1" fill="#000"/><rect x="3" y="4" width="1" height="1" fill="#fff"/><rect x="4" y="4" width="1" height="1" fill="#fff"/><rect x="5" y="4" width="1" height="1" fill="#fff"/><rect x="6" y="4" width="1" height="1" fill="#000"/><rect x="7" y="4" width="1" height="1" fill="#4f86f7"/><rect x="8" y="4" width="1" height="1" fill="#000"/><rect x="9" y="4" width="1" height="1" fill="#000"/><rect x="10" y="4" width="1" height="1" fill="#fff"/><rect x="11" y="4" width="1" height="1" fill="#fff"/><rect x="12" y="4" width="1" height="1" fill="#fff"/><rect x="13" y="4" width="1" height="1" fill="#000"/><rect x="14" y="4" width="1" height="1" fill="#4f86f7"/><rect x="15" y="4" width="1" height="1" fill="#000"/><rect x="0" y="5" width="1" height="1" fill="#000"/><rect x="1" y="5" width="1" height="1" fill="#4f86f7"/><rect x="2" y="5" width="1" height="1" fill="#000"/><rect x="3" y="5" width="1" height="1" fill="#fff"/><rect x="4" y="5" width="1" height="1" fill="#fff"/><rect x="5" y="5" width="1" height="1" fill="#fff"/><rect x="6" y="5" width="1" height="1" fill="#000"/><rect x="7" y="5" width="1" height="1" fill="#4f86f7"/><rect x="8" y="5" width="1" height="1" fill="#000"/><rect x="9" y="5" width="1" height="1" fill="#000"/><rect x="10" y="5" width="1" height="1" fill="#fff"/><rect x="11" y="5" width="1" height="1" fill="#fff"/><rect x="12" y="5" width="1" height="1" fill="#fff"/><rect x="13" y="5" width="1" height="1" fill="#000"/><rect x="14" y="5" width="1" height="1" fill="#4f86f7"/><rect x="15" y="5" width="1" height="1" fill="#000"/><rect x="0" y="6" width="1" height="1" fill="#000"/><rect x="1" y="6" width="1" height="1" fill="#4f86f7"/><rect x="2" y="6" width="1" height="1" fill="#000"/><rect x="3" y="6" width="1" height="1" fill="#fff"/><rect x="4" y="6" width="1" height="1" fill="#fff"/><rect x="5" y="6" width="1" height="1" fill="#fff"/><rect x="6" y="6" width="1" height="1" fill="#000"/><rect x="7" y="6" width="1" height="1" fill="#4f86f7"/><rect x="8" y="6" width="1" height="1" fill="#000"/><rect x="9" y="6" width="1" height="1" fill="#000"/><rect x="10" y="6" width="1" height="1" fill="#fff"/><rect x="11" y="6" width="1" height="1" fill="#fff"/><rect x="12" y="6" width="1" height="1" fill="#fff"/><rect x="13" y="6" width="1" height="1" fill="#000"/><rect x="14" y="6" width="1" height="1" fill="#4f86f7"/><rect x="15" y="6" width="1" height="1" fill="#000"/><rect x="0" y="7" width="1" height="1" fill="#000"/><rect x="1" y="7" width="1" height="1" fill="#4f86f7"/><rect x="2" y="7" width="1" height="1" fill="#000"/><rect x="3" y="7" width="1" height="1" fill="#fff"/><rect x="4" y="7" width="1" height="1" fill="#fff"/><rect x="5" y="7" width="1" height="1" fill="#fff"/><rect x="6" y="7" width="1" height="1" fill="#000"/><rect x="7" y="7" width="1" height="1" fill="#4f86f7"/><rect x="8" y="7" width="1" height="1" fill="#000"/><rect x="9" y="7" width="1" height="1" fill="#000"/><rect x="10" y="7" width="1" height="1" fill="#fff"/><rect x="11" y="7" width="1" height="1" fill="#fff"/><rect x="12" y="7" width="1" height="1" fill="#fff"/><rect x="13" y="7" width="1" height="1" fill="#000"/><rect x="14" y="7" width="1" height="1" fill="#4f86f7"/><rect x="15" y="7" width="1" height="1" fill="#000"/><rect x="0" y="8" width="1" height="1" fill="#000"/><rect x="1" y="8" width="1" height="1" fill="#4f86f7"/><rect x="2" y="8" width="1" height="1" fill="#000"/><rect x="3" y="8" width="1" height="1" fill="#000"/><rect x="4" y="8" width="1" height="1" fill="#000"/><rect x="5" y="8" width="1" height="1" fill="#000"/><rect x="6" y="8" width="1" height="1" fill="#000"/><rect x="7" y="8" width="1" height="1" fill="#4f86f7"/><rect x="8" y="8" width="1" height="1" fill="#000"/><rect x="9" y="8" width="1" height="1" fill="#000"/><rect x="10" y="8" width="1" height="1" fill="#000"/><rect x="11" y="8" width="1" height="1" fill="#000"/><rect x="12" y="8" width="1" height="1" fill="#000"/><rect x="13" y="8" width="1" height="1" fill="#000"/><rect x="14" y="8" width="1" height="1" fill="#4f86f7"/><rect x="15" y="8" width="1" height="1" fill="#000"/><rect x="0" y="9" width="1" height="1" fill="#000"/><rect x="1" y="9" width="1" height="1" fill="#4f86f7"/><rect x="2" y="9" width="1" height="1" fill="#4f86f7"/><rect x="3" y="9" width="1" height="1" fill="#4f86f7"/><rect x="4" y="9" width="1" height="1" fill="#4f86f7"/><rect x="5" y="9" width="1" height="1" fill="#4f86f7"/><rect x="6" y="9" width="1" height="1" fill="#4f86f7"/><rect x="7" y="9" width="1" height="1" fill="#4f86f7"/><rect x="8" y="9" width="1" height="1" fill="#000"/><rect x="9" y="9" width="1" height="1" fill="#4f86f7"/><rect x="10" y="9" width="1" height="1" fill="#4f86f7"/><rect x="11" y="9" width="1" height="1" fill="#4f86f7"/><rect x="12" y="9" width="1" height="1" fill="#4f86f7"/><rect x="13" y="9" width="1" height="1" fill="#4f86f7"/><rect x="14" y="9" width="1" height="1" fill="#4f86f7"/><rect x="15" y="9" width="1" height="1" fill="#000"/><rect x="0" y="10" width="1" height="1" fill="#000"/><rect x="1" y="10" width="1" height="1" fill="#2f5fdc"/><rect x="2" y="10" width="1" height="1" fill="#2f5fdc"/><rect x="3" y="10" width="1" height="1" fill="#2f5fdc"/><rect x="4" y="10" width="1" height="1" fill="#2f5fdc"/><rect x="5" y="10" width="1" height="1" fill="#2f5fdc"/><rect x="6" y="10" width="1" height="1" fill="#2f5fdc"/><rect x="7" y="10" width="1" height="1" fill="#2f5fdc"/><rect x="8" y="10" width="1" height="1" fill="#000"/><rect x="9" y="10" width="1" height="1" fill="#2f5fdc"/><rect x="10" y="10" width="1" height="1" fill="#2f5fdc"/><rect x="11" y="10" width="1" height="1" fill="#2f5fdc"/><rect x="12" y="10" width="1" height="1" fill="#2f5fdc"/><rect x="13" y="10" width="1" height="1" fill="#2f5fdc"/><rect x="14" y="10" width="1" height="1" fill="#2f5fdc"/><rect x="15" y="10" width="1" height="1" fill="#000"/><rect x="0" y="11" width="1" height="1" fill="#000"/><rect x="1" y="11" width="1" height="1" fill="#4f86f7"/><rect x="2" y="11" width="1" height="1" fill="#4f86f7"/><rect x="3" y="11" width="1" height="1" fill="#4f86f7"/><rect x="4" y="11" width="1" height="1" fill="#4f86f7"/><rect x="5" y="11" width="1" height="1" fill="#4f86f7"/><rect x="6" y="11" width="1" height="1" fill="#4f86f7"/><rect x="7" y="11" width="1" height="1" fill="#4f86f7"/><rect x="8" y="11" width="1" height="1" fill="#000"/><rect x="9" y="11" width="1" height="1" fill="#4f86f7"/><rect x="10" y="11" width="1" height="1" fill="#4f86f7"/><rect x="11" y="11" width="1" height="1" fill="#4f86f7"/><rect x="12" y="11" width="1" height="1" fill="#4f86f7"/><rect x="13" y="11" width="1" height="1" fill="#4f86f7"/><rect x="14" y="11" width="1" height="1" fill="#4f86f7"/><rect x="15" y="11" width="1" height="1" fill="#000"/><rect x="0" y="12" width="1" height="1" fill="#000"/><rect x="1" y="12" width="1" height="1" fill="#2f5fdc"/><rect x="2" y="12" width="1" height="1" fill="#2f5fdc"/><rect x="3" y="12" width="1" height="1" fill="#2f5fdc"/><rect x="4" y="12" width="1" height="1" fill="#2f5fdc"/><rect x="5" y="12" width="1" height="1" fill="#2f5fdc"/><rect x="6" y="12" width="1" height="1" fill="#2f5fdc"/><rect x="7" y="12" width="1" height="1" fill="#2f5fdc"/><rect x="8" y="12" width="1" height="1" fill="#000"/><rect x="9" y="12" width="1" height="1" fill="#2f5fdc"/><rect x="10" y="12" width="1" height="1" fill="#2f5fdc"/><rect x="11" y="12" width="1" height="1" fill="#2f5fdc"/><rect x="12" y="12" width="1" height="1" fill="#2f5fdc"/><rect x="13" y="12" width="1" height="1" fill="#2f5fdc"/><rect x="14" y="12" width="1" height="1" fill="#2f5fdc"/><rect x="15" y="12" width="1" height="1" fill="#000"/><rect x="0" y="13" width="1" height="1" fill="#000"/><rect x="1" y="13" width="1" height="1" fill="#4f86f7"/><rect x="2" y="13" width="1" height="1" fill="#4f86f7"/><rect x="3" y="13" width="1" height="1" fill="#4f86f7"/><rect x="4" y="13" width="1" height="1" fill="#4f86f7"/><rect x="5" y="13" width="1" height="1" fill="#4f86f7"/><rect x="6" y="13" width="1" height="1" fill="#4f86f7"/><rect x="7" y="13" width="1" height="1" fill="#4f86f7"/><rect x="8" y="13" width="1" height="1" fill="#000"/><rect x="9" y="13" width="1" height="1" fill="#4f86f7"/><rect x="10" y="13" width="1" height="1" fill="#4f86f7"/><rect x="11" y="13" width="1" height="1" fill="#4f86f7"/><rect x="12" y="13" width="1" height="1" fill="#4f86f7"/><rect x="13" y="13" width="1" height="1" fill="#4f86f7"/><rect x="14" y="13" width="1" height="1" fill="#4f86f7"/><rect x="15" y="13" width="1" height="1" fill="#000"/><rect x="0" y="14" width="1" height="1" fill="#000"/><rect x="1" y="14" width="1" height="1" fill="#000"/><rect x="2" y="14" width="1" height="1" fill="#000"/><rect x="3" y="14" width="1" height="1" fill="#000"/><rect x="4" y="14" width="1" height="1" fill="#000"/><rect x="5" y="14" width="1" height="1" fill="#000"/><rect x="6" y="14" width="1" height="1" fill="#000"/><rect x="7" y="14" width="1" height="1" fill="#000"/><rect x="8" y="14" width="1" height="1" fill="#000"/><rect x="9" y="14" width="1" height="1" fill="#000"/><rect x="10" y="14" width="1" height="1" fill="#000"/><rect x="11" y="14" width="1" height="1" fill="#000"/><rect x="12" y="14" width="1" height="1" fill="#000"/><rect x="13" y="14" width="1" height="1" fill="#000"/><rect x="14" y="14" width="1" height="1" fill="#000"/><rect x="15" y="14" width="1" height="1" fill="#000"/></svg>
<div class="tt" style="left:85.11px;top:433px;transform:scaleX(0.8889);transform-origin:0 0;">STOLP DEUREN 40</div>
<div class="bx" style="left:49px;top:457px"><i class="bh"></i><i class="bv"></i></div>
<svg class="ic" style="left:64px;top:452px" width="16" height="15" viewBox="0 0 16 15" shape-rendering="crispEdges"><rect x="0" y="0" width="1" height="1" fill="#000"/><rect x="1" y="0" width="1" height="1" fill="#000"/><rect x="2" y="0" width="1" height="1" fill="#000"/><rect x="3" y="0" width="1" height="1" fill="#000"/><rect x="4" y="0" width="1" height="1" fill="#000"/><rect x="5" y="0" width="1" height="1" fill="#000"/><rect x="6" y="0" width="1" height="1" fill="#000"/><rect x="7" y="0" width="1" height="1" fill="#000"/><rect x="8" y="0" width="1" height="1" fill="#000"/><rect x="9" y="0" width="1" height="1" fill="#000"/><rect x="10" y="0" width="1" height="1" fill="#000"/><rect x="11" y="0" width="1" height="1" fill="#000"/><rect x="12" y="0" width="1" height="1" fill="#000"/><rect x="13" y="0" width="1" height="1" fill="#000"/><rect x="14" y="0" width="1" height="1" fill="#000"/><rect x="15" y="0" width="1" height="1" fill="#000"/><rect x="0" y="1" width="1" height="1" fill="#000"/><rect x="1" y="1" width="1" height="1" fill="#4f86f7"/><rect x="2" y="1" width="1" height="1" fill="#4f86f7"/><rect x="3" y="1" width="1" height="1" fill="#4f86f7"/><rect x="4" y="1" width="1" height="1" fill="#4f86f7"/><rect x="5" y="1" width="1" height="1" fill="#4f86f7"/><rect x="6" y="1" width="1" height="1" fill="#4f86f7"/><rect x="7" y="1" width="1" height="1" fill="#4f86f7"/><rect x="8" y="1" width="1" height="1" fill="#000"/><rect x="9" y="1" width="1" height="1" fill="#4f86f7"/><rect x="10" y="1" width="1" height="1" fill="#4f86f7"/><rect x="11" y="1" width="1" height="1" fill="#4f86f7"/><rect x="12" y="1" width="1" height="1" fill="#4f86f7"/><rect x="13" y="1" width="1" height="1" fill="#4f86f7"/><rect x="14" y="1" width="1" height="1" fill="#4f86f7"/><rect x="15" y="1" width="1" height="1" fill="#000"/><rect x="0" y="2" width="1" height="1" fill="#000"/><rect x="1" y="2" width="1" height="1" fill="#4f86f7"/><rect x="2" y="2" width="1" height="1" fill="#000"/><rect x="3" y="2" width="1" height="1" fill="#000"/><rect x="4" y="2" width="1" height="1" fill="#000"/><rect x="5" y="2" width="1" height="1" fill="#000"/><rect x="6" y="2" width="1" height="1" fill="#000"/><rect x="7" y="2" width="1" height="1" fill="#4f86f7"/><rect x="8" y="2" width="1" height="1" fill="#000"/><rect x="9" y="2" width="1" height="1" fill="#000"/><rect x="10" y="2" width="1" height="1" fill="#000"/><rect x="11" y="2" width="1" height="1" fill="#000"/><rect x="12" y="2" width="1" height="1" fill="#000"/><rect x="13" y="2" width="1" height="1" fill="#000"/><rect x="14" y="2" width="1" height="1" fill="#4f86f7"/><rect x="15" y="2" width="1" height="1" fill="#000"/><rect x="0" y="3" width="1" height="1" fill="#000"/><rect x="1" y="3" width="1" height="1" fill="#4f86f7"/><rect x="2" y="3" width="1" height="1" fill="#000"/><rect x="3" y="3" width="1" height="1" fill="#fff"/><rect x="4" y="3" width="1" height="1" fill="#fff"/><rect x="5" y="3" width="1" height="1" fill="#fff"/><rect x="6" y="3" width="1" height="1" fill="#000"/><rect x="7" y="3" width="1" height="1" fill="#4f86f7"/><rect x="8" y="3" width="1" height="1" fill="#000"/><rect x="9" y="3" width="1" height="1" fill="#000"/><rect x="10" y="3" width="1" height="1" fill="#fff"/><rect x="11" y="3" width="1" height="1" fill="#fff"/><rect x="12" y="3" width="1" height="1" fill="#fff"/><rect x="13" y="3" width="1" height="1" fill="#000"/><rect x="14" y="3" width="1" height="1" fill="#4f86f7"/><rect x="15" y="3" width="1" height="1" fill="#000"/><rect x="0" y="4" width="1" height="1" fill="#000"/><rect x="1" y="4" width="1" height="1" fill="#4f86f7"/><rect x="2" y="4" width="1" height="1" fill="#000"/><rect x="3" y="4" width="1" height="1" fill="#fff"/><rect x="4" y="4" width="1" height="1" fill="#fff"/><rect x="5" y="4" width="1" height="1" fill="#fff"/><rect x="6" y="4" width="1" height="1" fill="#000"/><rect x="7" y="4" width="1" height="1" fill="#4f86f7"/><rect x="8" y="4" width="1" height="1" fill="#000"/><rect x="9" y="4" width="1" height="1" fill="#000"/><rect x="10" y="4" width="1" height="1" fill="#fff"/><rect x="11" y="4" width="1" height="1" fill="#fff"/><rect x="12" y="4" width="1" height="1" fill="#fff"/><rect x="13" y="4" width="1" height="1" fill="#000"/><rect x="14" y="4" width="1" height="1" fill="#4f86f7"/><rect x="15" y="4" width="1" height="1" fill="#000"/><rect x="0" y="5" width="1" height="1" fill="#000"/><rect x="1" y="5" width="1" height="1" fill="#4f86f7"/><rect x="2" y="5" width="1" height="1" fill="#000"/><rect x="3" y="5" width="1" height="1" fill="#fff"/><rect x="4" y="5" width="1" height="1" fill="#fff"/><rect x="5" y="5" width="1" height="1" fill="#fff"/><rect x="6" y="5" width="1" height="1" fill="#000"/><rect x="7" y="5" width="1" height="1" fill="#4f86f7"/><rect x="8" y="5" width="1" height="1" fill="#000"/><rect x="9" y="5" width="1" height="1" fill="#000"/><rect x="10" y="5" width="1" height="1" fill="#fff"/><rect x="11" y="5" width="1" height="1" fill="#fff"/><rect x="12" y="5" width="1" height="1" fill="#fff"/><rect x="13" y="5" width="1" height="1" fill="#000"/><rect x="14" y="5" width="1" height="1" fill="#4f86f7"/><rect x="15" y="5" width="1" height="1" fill="#000"/><rect x="0" y="6" width="1" height="1" fill="#000"/><rect x="1" y="6" width="1" height="1" fill="#4f86f7"/><rect x="2" y="6" width="1" height="1" fill="#000"/><rect x="3" y="6" width="1" height="1" fill="#fff"/><rect x="4" y="6" width="1" height="1" fill="#fff"/><rect x="5" y="6" width="1" height="1" fill="#fff"/><rect x="6" y="6" width="1" height="1" fill="#000"/><rect x="7" y="6" width="1" height="1" fill="#4f86f7"/><rect x="8" y="6" width="1" height="1" fill="#000"/><rect x="9" y="6" width="1" height="1" fill="#000"/><rect x="10" y="6" width="1" height="1" fill="#fff"/><rect x="11" y="6" width="1" height="1" fill="#fff"/><rect x="12" y="6" width="1" height="1" fill="#fff"/><rect x="13" y="6" width="1" height="1" fill="#000"/><rect x="14" y="6" width="1" height="1" fill="#4f86f7"/><rect x="15" y="6" width="1" height="1" fill="#000"/><rect x="0" y="7" width="1" height="1" fill="#000"/><rect x="1" y="7" width="1" height="1" fill="#4f86f7"/><rect x="2" y="7" width="1" height="1" fill="#000"/><rect x="3" y="7" width="1" height="1" fill="#fff"/><rect x="4" y="7" width="1" height="1" fill="#fff"/><rect x="5" y="7" width="1" height="1" fill="#fff"/><rect x="6" y="7" width="1" height="1" fill="#000"/><rect x="7" y="7" width="1" height="1" fill="#4f86f7"/><rect x="8" y="7" width="1" height="1" fill="#000"/><rect x="9" y="7" width="1" height="1" fill="#000"/><rect x="10" y="7" width="1" height="1" fill="#fff"/><rect x="11" y="7" width="1" height="1" fill="#fff"/><rect x="12" y="7" width="1" height="1" fill="#fff"/><rect x="13" y="7" width="1" height="1" fill="#000"/><rect x="14" y="7" width="1" height="1" fill="#4f86f7"/><rect x="15" y="7" width="1" height="1" fill="#000"/><rect x="0" y="8" width="1" height="1" fill="#000"/><rect x="1" y="8" width="1" height="1" fill="#4f86f7"/><rect x="2" y="8" width="1" height="1" fill="#000"/><rect x="3" y="8" width="1" height="1" fill="#000"/><rect x="4" y="8" width="1" height="1" fill="#000"/><rect x="5" y="8" width="1" height="1" fill="#000"/><rect x="6" y="8" width="1" height="1" fill="#000"/><rect x="7" y="8" width="1" height="1" fill="#4f86f7"/><rect x="8" y="8" width="1" height="1" fill="#000"/><rect x="9" y="8" width="1" height="1" fill="#000"/><rect x="10" y="8" width="1" height="1" fill="#000"/><rect x="11" y="8" width="1" height="1" fill="#000"/><rect x="12" y="8" width="1" height="1" fill="#000"/><rect x="13" y="8" width="1" height="1" fill="#000"/><rect x="14" y="8" width="1" height="1" fill="#4f86f7"/><rect x="15" y="8" width="1" height="1" fill="#000"/><rect x="0" y="9" width="1" height="1" fill="#000"/><rect x="1" y="9" width="1" height="1" fill="#4f86f7"/><rect x="2" y="9" width="1" height="1" fill="#4f86f7"/><rect x="3" y="9" width="1" height="1" fill="#4f86f7"/><rect x="4" y="9" width="1" height="1" fill="#4f86f7"/><rect x="5" y="9" width="1" height="1" fill="#4f86f7"/><rect x="6" y="9" width="1" height="1" fill="#4f86f7"/><rect x="7" y="9" width="1" height="1" fill="#4f86f7"/><rect x="8" y="9" width="1" height="1" fill="#000"/><rect x="9" y="9" width="1" height="1" fill="#4f86f7"/><rect x="10" y="9" width="1" height="1" fill="#4f86f7"/><rect x="11" y="9" width="1" height="1" fill="#4f86f7"/><rect x="12" y="9" width="1" height="1" fill="#4f86f7"/><rect x="13" y="9" width="1" height="1" fill="#4f86f7"/><rect x="14" y="9" width="1" height="1" fill="#4f86f7"/><rect x="15" y="9" width="1" height="1" fill="#000"/><rect x="0" y="10" width="1" height="1" fill="#000"/><rect x="1" y="10" width="1" height="1" fill="#2f5fdc"/><rect x="2" y="10" width="1" height="1" fill="#2f5fdc"/><rect x="3" y="10" width="1" height="1" fill="#2f5fdc"/><rect x="4" y="10" width="1" height="1" fill="#2f5fdc"/><rect x="5" y="10" width="1" height="1" fill="#2f5fdc"/><rect x="6" y="10" width="1" height="1" fill="#2f5fdc"/><rect x="7" y="10" width="1" height="1" fill="#2f5fdc"/><rect x="8" y="10" width="1" height="1" fill="#000"/><rect x="9" y="10" width="1" height="1" fill="#2f5fdc"/><rect x="10" y="10" width="1" height="1" fill="#2f5fdc"/><rect x="11" y="10" width="1" height="1" fill="#2f5fdc"/><rect x="12" y="10" width="1" height="1" fill="#2f5fdc"/><rect x="13" y="10" width="1" height="1" fill="#2f5fdc"/><rect x="14" y="10" width="1" height="1" fill="#2f5fdc"/><rect x="15" y="10" width="1" height="1" fill="#000"/><rect x="0" y="11" width="1" height="1" fill="#000"/><rect x="1" y="11" width="1" height="1" fill="#4f86f7"/><rect x="2" y="11" width="1" height="1" fill="#4f86f7"/><rect x="3" y="11" width="1" height="1" fill="#4f86f7"/><rect x="4" y="11" width="1" height="1" fill="#4f86f7"/><rect x="5" y="11" width="1" height="1" fill="#4f86f7"/><rect x="6" y="11" width="1" height="1" fill="#4f86f7"/><rect x="7" y="11" width="1" height="1" fill="#4f86f7"/><rect x="8" y="11" width="1" height="1" fill="#000"/><rect x="9" y="11" width="1" height="1" fill="#4f86f7"/><rect x="10" y="11" width="1" height="1" fill="#4f86f7"/><rect x="11" y="11" width="1" height="1" fill="#4f86f7"/><rect x="12" y="11" width="1" height="1" fill="#4f86f7"/><rect x="13" y="11" width="1" height="1" fill="#4f86f7"/><rect x="14" y="11" width="1" height="1" fill="#4f86f7"/><rect x="15" y="11" width="1" height="1" fill="#000"/><rect x="0" y="12" width="1" height="1" fill="#000"/><rect x="1" y="12" width="1" height="1" fill="#2f5fdc"/><rect x="2" y="12" width="1" height="1" fill="#2f5fdc"/><rect x="3" y="12" width="1" height="1" fill="#2f5fdc"/><rect x="4" y="12" width="1" height="1" fill="#2f5fdc"/><rect x="5" y="12" width="1" height="1" fill="#2f5fdc"/><rect x="6" y="12" width="1" height="1" fill="#2f5fdc"/><rect x="7" y="12" width="1" height="1" fill="#2f5fdc"/><rect x="8" y="12" width="1" height="1" fill="#000"/><rect x="9" y="12" width="1" height="1" fill="#2f5fdc"/><rect x="10" y="12" width="1" height="1" fill="#2f5fdc"/><rect x="11" y="12" width="1" height="1" fill="#2f5fdc"/><rect x="12" y="12" width="1" height="1" fill="#2f5fdc"/><rect x="13" y="12" width="1" height="1" fill="#2f5fdc"/><rect x="14" y="12" width="1" height="1" fill="#2f5fdc"/><rect x="15" y="12" width="1" height="1" fill="#000"/><rect x="0" y="13" width="1" height="1" fill="#000"/><rect x="1" y="13" width="1" height="1" fill="#4f86f7"/><rect x="2" y="13" width="1" height="1" fill="#4f86f7"/><rect x="3" y="13" width="1" height="1" fill="#4f86f7"/><rect x="4" y="13" width="1" height="1" fill="#4f86f7"/><rect x="5" y="13" width="1" height="1" fill="#4f86f7"/><rect x="6" y="13" width="1" height="1" fill="#4f86f7"/><rect x="7" y="13" width="1" height="1" fill="#4f86f7"/><rect x="8" y="13" width="1" height="1" fill="#000"/><rect x="9" y="13" width="1" height="1" fill="#4f86f7"/><rect x="10" y="13" width="1" height="1" fill="#4f86f7"/><rect x="11" y="13" width="1" height="1" fill="#4f86f7"/><rect x="12" y="13" width="1" height="1" fill="#4f86f7"/><rect x="13" y="13" width="1" height="1" fill="#4f86f7"/><rect x="14" y="13" width="1" height="1" fill="#4f86f7"/><rect x="15" y="13" width="1" height="1" fill="#000"/><rect x="0" y="14" width="1" height="1" fill="#000"/><rect x="1" y="14" width="1" height="1" fill="#000"/><rect x="2" y="14" width="1" height="1" fill="#000"/><rect x="3" y="14" width="1" height="1" fill="#000"/><rect x="4" y="14" width="1" height="1" fill="#000"/><rect x="5" y="14" width="1" height="1" fill="#000"/><rect x="6" y="14" width="1" height="1" fill="#000"/><rect x="7" y="14" width="1" height="1" fill="#000"/><rect x="8" y="14" width="1" height="1" fill="#000"/><rect x="9" y="14" width="1" height="1" fill="#000"/><rect x="10" y="14" width="1" height="1" fill="#000"/><rect x="11" y="14" width="1" height="1" fill="#000"/><rect x="12" y="14" width="1" height="1" fill="#000"/><rect x="13" y="14" width="1" height="1" fill="#000"/><rect x="14" y="14" width="1" height="1" fill="#000"/><rect x="15" y="14" width="1" height="1" fill="#000"/></svg>
<div class="tt" style="left:85.11px;top:451px;transform:scaleX(0.8889);transform-origin:0 0;">STOLP DEUREN 56</div>
<div class="bx" style="left:49px;top:475px"><i class="bh"></i><i class="bv"></i></div>
<svg class="ic" style="left:64px;top:470px" width="16" height="15" viewBox="0 0 16 15" shape-rendering="crispEdges"><rect x="0" y="0" width="1" height="1" fill="#000"/><rect x="1" y="0" width="1" height="1" fill="#000"/><rect x="2" y="0" width="1" height="1" fill="#000"/><rect x="3" y="0" width="1" height="1" fill="#000"/><rect x="4" y="0" width="1" height="1" fill="#000"/><rect x="5" y="0" width="1" height="1" fill="#000"/><rect x="6" y="0" width="1" height="1" fill="#000"/><rect x="7" y="0" width="1" height="1" fill="#000"/><rect x="8" y="0" width="1" height="1" fill="#000"/><rect x="9" y="0" width="1" height="1" fill="#000"/><rect x="10" y="0" width="1" height="1" fill="#000"/><rect x="11" y="0" width="1" height="1" fill="#000"/><rect x="12" y="0" width="1" height="1" fill="#000"/><rect x="13" y="0" width="1" height="1" fill="#000"/><rect x="14" y="0" width="1" height="1" fill="#000"/><rect x="15" y="0" width="1" height="1" fill="#000"/><rect x="0" y="1" width="1" height="1" fill="#000"/><rect x="1" y="1" width="1" height="1" fill="#4f86f7"/><rect x="2" y="1" width="1" height="1" fill="#4f86f7"/><rect x="3" y="1" width="1" height="1" fill="#4f86f7"/><rect x="4" y="1" width="1" height="1" fill="#4f86f7"/><rect x="5" y="1" width="1" height="1" fill="#4f86f7"/><rect x="6" y="1" width="1" height="1" fill="#4f86f7"/><rect x="7" y="1" width="1" height="1" fill="#4f86f7"/><rect x="8" y="1" width="1" height="1" fill="#000"/><rect x="9" y="1" width="1" height="1" fill="#4f86f7"/><rect x="10" y="1" width="1" height="1" fill="#4f86f7"/><rect x="11" y="1" width="1" height="1" fill="#4f86f7"/><rect x="12" y="1" width="1" height="1" fill="#4f86f7"/><rect x="13" y="1" width="1" height="1" fill="#4f86f7"/><rect x="14" y="1" width="1" height="1" fill="#4f86f7"/><rect x="15" y="1" width="1" height="1" fill="#000"/><rect x="0" y="2" width="1" height="1" fill="#000"/><rect x="1" y="2" width="1" height="1" fill="#4f86f7"/><rect x="2" y="2" width="1" height="1" fill="#000"/><rect x="3" y="2" width="1" height="1" fill="#000"/><rect x="4" y="2" width="1" height="1" fill="#000"/><rect x="5" y="2" width="1" height="1" fill="#000"/><rect x="6" y="2" width="1" height="1" fill="#000"/><rect x="7" y="2" width="1" height="1" fill="#4f86f7"/><rect x="8" y="2" width="1" height="1" fill="#000"/><rect x="9" y="2" width="1" height="1" fill="#000"/><rect x="10" y="2" width="1" height="1" fill="#000"/><rect x="11" y="2" width="1" height="1" fill="#000"/><rect x="12" y="2" width="1" height="1" fill="#000"/><rect x="13" y="2" width="1" height="1" fill="#000"/><rect x="14" y="2" width="1" height="1" fill="#4f86f7"/><rect x="15" y="2" width="1" height="1" fill="#000"/><rect x="0" y="3" width="1" height="1" fill="#000"/><rect x="1" y="3" width="1" height="1" fill="#4f86f7"/><rect x="2" y="3" width="1" height="1" fill="#000"/><rect x="3" y="3" width="1" height="1" fill="#fff"/><rect x="4" y="3" width="1" height="1" fill="#fff"/><rect x="5" y="3" width="1" height="1" fill="#fff"/><rect x="6" y="3" width="1" height="1" fill="#000"/><rect x="7" y="3" width="1" height="1" fill="#4f86f7"/><rect x="8" y="3" width="1" height="1" fill="#000"/><rect x="9" y="3" width="1" height="1" fill="#000"/><rect x="10" y="3" width="1" height="1" fill="#fff"/><rect x="11" y="3" width="1" height="1" fill="#fff"/><rect x="12" y="3" width="1" height="1" fill="#fff"/><rect x="13" y="3" width="1" height="1" fill="#000"/><rect x="14" y="3" width="1" height="1" fill="#4f86f7"/><rect x="15" y="3" width="1" height="1" fill="#000"/><rect x="0" y="4" width="1" height="1" fill="#000"/><rect x="1" y="4" width="1" height="1" fill="#4f86f7"/><rect x="2" y="4" width="1" height="1" fill="#000"/><rect x="3" y="4" width="1" height="1" fill="#fff"/><rect x="4" y="4" width="1" height="1" fill="#fff"/><rect x="5" y="4" width="1" height="1" fill="#fff"/><rect x="6" y="4" width="1" height="1" fill="#000"/><rect x="7" y="4" width="1" height="1" fill="#4f86f7"/><rect x="8" y="4" width="1" height="1" fill="#000"/><rect x="9" y="4" width="1" height="1" fill="#000"/><rect x="10" y="4" width="1" height="1" fill="#fff"/><rect x="11" y="4" width="1" height="1" fill="#fff"/><rect x="12" y="4" width="1" height="1" fill="#fff"/><rect x="13" y="4" width="1" height="1" fill="#000"/><rect x="14" y="4" width="1" height="1" fill="#4f86f7"/><rect x="15" y="4" width="1" height="1" fill="#000"/><rect x="0" y="5" width="1" height="1" fill="#000"/><rect x="1" y="5" width="1" height="1" fill="#4f86f7"/><rect x="2" y="5" width="1" height="1" fill="#000"/><rect x="3" y="5" width="1" height="1" fill="#fff"/><rect x="4" y="5" width="1" height="1" fill="#fff"/><rect x="5" y="5" width="1" height="1" fill="#fff"/><rect x="6" y="5" width="1" height="1" fill="#000"/><rect x="7" y="5" width="1" height="1" fill="#4f86f7"/><rect x="8" y="5" width="1" height="1" fill="#000"/><rect x="9" y="5" width="1" height="1" fill="#000"/><rect x="10" y="5" width="1" height="1" fill="#fff"/><rect x="11" y="5" width="1" height="1" fill="#fff"/><rect x="12" y="5" width="1" height="1" fill="#fff"/><rect x="13" y="5" width="1" height="1" fill="#000"/><rect x="14" y="5" width="1" height="1" fill="#4f86f7"/><rect x="15" y="5" width="1" height="1" fill="#000"/><rect x="0" y="6" width="1" height="1" fill="#000"/><rect x="1" y="6" width="1" height="1" fill="#4f86f7"/><rect x="2" y="6" width="1" height="1" fill="#000"/><rect x="3" y="6" width="1" height="1" fill="#fff"/><rect x="4" y="6" width="1" height="1" fill="#fff"/><rect x="5" y="6" width="1" height="1" fill="#fff"/><rect x="6" y="6" width="1" height="1" fill="#000"/><rect x="7" y="6" width="1" height="1" fill="#4f86f7"/><rect x="8" y="6" width="1" height="1" fill="#000"/><rect x="9" y="6" width="1" height="1" fill="#000"/><rect x="10" y="6" width="1" height="1" fill="#fff"/><rect x="11" y="6" width="1" height="1" fill="#fff"/><rect x="12" y="6" width="1" height="1" fill="#fff"/><rect x="13" y="6" width="1" height="1" fill="#000"/><rect x="14" y="6" width="1" height="1" fill="#4f86f7"/><rect x="15" y="6" width="1" height="1" fill="#000"/><rect x="0" y="7" width="1" height="1" fill="#000"/><rect x="1" y="7" width="1" height="1" fill="#4f86f7"/><rect x="2" y="7" width="1" height="1" fill="#000"/><rect x="3" y="7" width="1" height="1" fill="#fff"/><rect x="4" y="7" width="1" height="1" fill="#fff"/><rect x="5" y="7" width="1" height="1" fill="#fff"/><rect x="6" y="7" width="1" height="1" fill="#000"/><rect x="7" y="7" width="1" height="1" fill="#4f86f7"/><rect x="8" y="7" width="1" height="1" fill="#000"/><rect x="9" y="7" width="1" height="1" fill="#000"/><rect x="10" y="7" width="1" height="1" fill="#fff"/><rect x="11" y="7" width="1" height="1" fill="#fff"/><rect x="12" y="7" width="1" height="1" fill="#fff"/><rect x="13" y="7" width="1" height="1" fill="#000"/><rect x="14" y="7" width="1" height="1" fill="#4f86f7"/><rect x="15" y="7" width="1" height="1" fill="#000"/><rect x="0" y="8" width="1" height="1" fill="#000"/><rect x="1" y="8" width="1" height="1" fill="#4f86f7"/><rect x="2" y="8" width="1" height="1" fill="#000"/><rect x="3" y="8" width="1" height="1" fill="#000"/><rect x="4" y="8" width="1" height="1" fill="#000"/><rect x="5" y="8" width="1" height="1" fill="#000"/><rect x="6" y="8" width="1" height="1" fill="#000"/><rect x="7" y="8" width="1" height="1" fill="#4f86f7"/><rect x="8" y="8" width="1" height="1" fill="#000"/><rect x="9" y="8" width="1" height="1" fill="#000"/><rect x="10" y="8" width="1" height="1" fill="#000"/><rect x="11" y="8" width="1" height="1" fill="#000"/><rect x="12" y="8" width="1" height="1" fill="#000"/><rect x="13" y="8" width="1" height="1" fill="#000"/><rect x="14" y="8" width="1" height="1" fill="#4f86f7"/><rect x="15" y="8" width="1" height="1" fill="#000"/><rect x="0" y="9" width="1" height="1" fill="#000"/><rect x="1" y="9" width="1" height="1" fill="#4f86f7"/><rect x="2" y="9" width="1" height="1" fill="#4f86f7"/><rect x="3" y="9" width="1" height="1" fill="#4f86f7"/><rect x="4" y="9" width="1" height="1" fill="#4f86f7"/><rect x="5" y="9" width="1" height="1" fill="#4f86f7"/><rect x="6" y="9" width="1" height="1" fill="#4f86f7"/><rect x="7" y="9" width="1" height="1" fill="#4f86f7"/><rect x="8" y="9" width="1" height="1" fill="#000"/><rect x="9" y="9" width="1" height="1" fill="#4f86f7"/><rect x="10" y="9" width="1" height="1" fill="#4f86f7"/><rect x="11" y="9" width="1" height="1" fill="#4f86f7"/><rect x="12" y="9" width="1" height="1" fill="#4f86f7"/><rect x="13" y="9" width="1" height="1" fill="#4f86f7"/><rect x="14" y="9" width="1" height="1" fill="#4f86f7"/><rect x="15" y="9" width="1" height="1" fill="#000"/><rect x="0" y="10" width="1" height="1" fill="#000"/><rect x="1" y="10" width="1" height="1" fill="#2f5fdc"/><rect x="2" y="10" width="1" height="1" fill="#2f5fdc"/><rect x="3" y="10" width="1" height="1" fill="#2f5fdc"/><rect x="4" y="10" width="1" height="1" fill="#2f5fdc"/><rect x="5" y="10" width="1" height="1" fill="#2f5fdc"/><rect x="6" y="10" width="1" height="1" fill="#2f5fdc"/><rect x="7" y="10" width="1" height="1" fill="#2f5fdc"/><rect x="8" y="10" width="1" height="1" fill="#000"/><rect x="9" y="10" width="1" height="1" fill="#2f5fdc"/><rect x="10" y="10" width="1" height="1" fill="#2f5fdc"/><rect x="11" y="10" width="1" height="1" fill="#2f5fdc"/><rect x="12" y="10" width="1" height="1" fill="#2f5fdc"/><rect x="13" y="10" width="1" height="1" fill="#2f5fdc"/><rect x="14" y="10" width="1" height="1" fill="#2f5fdc"/><rect x="15" y="10" width="1" height="1" fill="#000"/><rect x="0" y="11" width="1" height="1" fill="#000"/><rect x="1" y="11" width="1" height="1" fill="#4f86f7"/><rect x="2" y="11" width="1" height="1" fill="#4f86f7"/><rect x="3" y="11" width="1" height="1" fill="#4f86f7"/><rect x="4" y="11" width="1" height="1" fill="#4f86f7"/><rect x="5" y="11" width="1" height="1" fill="#4f86f7"/><rect x="6" y="11" width="1" height="1" fill="#4f86f7"/><rect x="7" y="11" width="1" height="1" fill="#4f86f7"/><rect x="8" y="11" width="1" height="1" fill="#000"/><rect x="9" y="11" width="1" height="1" fill="#4f86f7"/><rect x="10" y="11" width="1" height="1" fill="#4f86f7"/><rect x="11" y="11" width="1" height="1" fill="#4f86f7"/><rect x="12" y="11" width="1" height="1" fill="#4f86f7"/><rect x="13" y="11" width="1" height="1" fill="#4f86f7"/><rect x="14" y="11" width="1" height="1" fill="#4f86f7"/><rect x="15" y="11" width="1" height="1" fill="#000"/><rect x="0" y="12" width="1" height="1" fill="#000"/><rect x="1" y="12" width="1" height="1" fill="#2f5fdc"/><rect x="2" y="12" width="1" height="1" fill="#2f5fdc"/><rect x="3" y="12" width="1" height="1" fill="#2f5fdc"/><rect x="4" y="12" width="1" height="1" fill="#2f5fdc"/><rect x="5" y="12" width="1" height="1" fill="#2f5fdc"/><rect x="6" y="12" width="1" height="1" fill="#2f5fdc"/><rect x="7" y="12" width="1" height="1" fill="#2f5fdc"/><rect x="8" y="12" width="1" height="1" fill="#000"/><rect x="9" y="12" width="1" height="1" fill="#2f5fdc"/><rect x="10" y="12" width="1" height="1" fill="#2f5fdc"/><rect x="11" y="12" width="1" height="1" fill="#2f5fdc"/><rect x="12" y="12" width="1" height="1" fill="#2f5fdc"/><rect x="13" y="12" width="1" height="1" fill="#2f5fdc"/><rect x="14" y="12" width="1" height="1" fill="#2f5fdc"/><rect x="15" y="12" width="1" height="1" fill="#000"/><rect x="0" y="13" width="1" height="1" fill="#000"/><rect x="1" y="13" width="1" height="1" fill="#4f86f7"/><rect x="2" y="13" width="1" height="1" fill="#4f86f7"/><rect x="3" y="13" width="1" height="1" fill="#4f86f7"/><rect x="4" y="13" width="1" height="1" fill="#4f86f7"/><rect x="5" y="13" width="1" height="1" fill="#4f86f7"/><rect x="6" y="13" width="1" height="1" fill="#4f86f7"/><rect x="7" y="13" width="1" height="1" fill="#4f86f7"/><rect x="8" y="13" width="1" height="1" fill="#000"/><rect x="9" y="13" width="1" height="1" fill="#4f86f7"/><rect x="10" y="13" width="1" height="1" fill="#4f86f7"/><rect x="11" y="13" width="1" height="1" fill="#4f86f7"/><rect x="12" y="13" width="1" height="1" fill="#4f86f7"/><rect x="13" y="13" width="1" height="1" fill="#4f86f7"/><rect x="14" y="13" width="1" height="1" fill="#4f86f7"/><rect x="15" y="13" width="1" height="1" fill="#000"/><rect x="0" y="14" width="1" height="1" fill="#000"/><rect x="1" y="14" width="1" height="1" fill="#000"/><rect x="2" y="14" width="1" height="1" fill="#000"/><rect x="3" y="14" width="1" height="1" fill="#000"/><rect x="4" y="14" width="1" height="1" fill="#000"/><rect x="5" y="14" width="1" height="1" fill="#000"/><rect x="6" y="14" width="1" height="1" fill="#000"/><rect x="7" y="14" width="1" height="1" fill="#000"/><rect x="8" y="14" width="1" height="1" fill="#000"/><rect x="9" y="14" width="1" height="1" fill="#000"/><rect x="10" y="14" width="1" height="1" fill="#000"/><rect x="11" y="14" width="1" height="1" fill="#000"/><rect x="12" y="14" width="1" height="1" fill="#000"/><rect x="13" y="14" width="1" height="1" fill="#000"/><rect x="14" y="14" width="1" height="1" fill="#000"/><rect x="15" y="14" width="1" height="1" fill="#000"/></svg>
<div class="tt" style="left:85.11px;top:469px;transform:scaleX(0.8889);transform-origin:0 0;">STOLP DEUREN 67</div>
<div class="bx" style="left:49px;top:493px"><i class="bh"></i><i class="bv"></i></div>
<svg class="ic" style="left:64px;top:488px" width="9" height="15" viewBox="0 0 9 15" shape-rendering="crispEdges"><rect x="0" y="0" width="1" height="1" fill="#000"/><rect x="1" y="0" width="1" height="1" fill="#000"/><rect x="2" y="0" width="1" height="1" fill="#000"/><rect x="3" y="0" width="1" height="1" fill="#000"/><rect x="4" y="0" width="1" height="1" fill="#000"/><rect x="5" y="0" width="1" height="1" fill="#000"/><rect x="6" y="0" width="1" height="1" fill="#000"/><rect x="7" y="0" width="1" height="1" fill="#000"/><rect x="8" y="0" width="1" height="1" fill="#000"/><rect x="0" y="1" width="1" height="1" fill="#000"/><rect x="1" y="1" width="1" height="1" fill="#4f86f7"/><rect x="2" y="1" width="1" height="1" fill="#4f86f7"/><rect x="3" y="1" width="1" height="1" fill="#4f86f7"/><rect x="4" y="1" width="1" height="1" fill="#4f86f7"/><rect x="5" y="1" width="1" height="1" fill="#4f86f7"/><rect x="6" y="1" width="1" height="1" fill="#4f86f7"/><rect x="7" y="1" width="1" height="1" fill="#4f86f7"/><rect x="8" y="1" width="1" height="1" fill="#000"/><rect x="0" y="2" width="1" height="1" fill="#000"/><rect x="1" y="2" width="1" height="1" fill="#4f86f7"/><rect x="2" y="2" width="1" height="1" fill="#000"/><rect x="3" y="2" width="1" height="1" fill="#000"/><rect x="4" y="2" width="1" height="1" fill="#000"/><rect x="5" y="2" width="1" height="1" fill="#000"/><rect x="6" y="2" width="1" height="1" fill="#000"/><rect x="7" y="2" width="1" height="1" fill="#4f86f7"/><rect x="8" y="2" width="1" height="1" fill="#000"/><rect x="0" y="3" width="1" height="1" fill="#000"/><rect x="1" y="3" width="1" height="1" fill="#4f86f7"/><rect x="2" y="3" width="1" height="1" fill="#000"/><rect x="3" y="3" width="1" height="1" fill="#fff"/><rect x="4" y="3" width="1" height="1" fill="#fff"/><rect x="5" y="3" width="1" height="1" fill="#fff"/><rect x="6" y="3" width="1" height="1" fill="#000"/><rect x="7" y="3" width="1" height="1" fill="#4f86f7"/><rect x="8" y="3" width="1" height="1" fill="#000"/><rect x="0" y="4" width="1" height="1" fill="#000"/><rect x="1" y="4" width="1" height="1" fill="#4f86f7"/><rect x="2" y="4" width="1" height="1" fill="#000"/><rect x="3" y="4" width="1" height="1" fill="#fff"/><rect x="4" y="4" width="1" height="1" fill="#fff"/><rect x="5" y="4" width="1" height="1" fill="#fff"/><rect x="6" y="4" width="1" height="1" fill="#000"/><rect x="7" y="4" width="1" height="1" fill="#4f86f7"/><rect x="8" y="4" width="1" height="1" fill="#000"/><rect x="0" y="5" width="1" height="1" fill="#000"/><rect x="1" y="5" width="1" height="1" fill="#4f86f7"/><rect x="2" y="5" width="1" height="1" fill="#000"/><rect x="3" y="5" width="1" height="1" fill="#fff"/><rect x="4" y="5" width="1" height="1" fill="#fff"/><rect x="5" y="5" width="1" height="1" fill="#fff"/><rect x="6" y="5" width="1" height="1" fill="#000"/><rect x="7" y="5" width="1" height="1" fill="#4f86f7"/><rect x="8" y="5" width="1" height="1" fill="#000"/><rect x="0" y="6" width="1" height="1" fill="#000"/><rect x="1" y="6" width="1" height="1" fill="#4f86f7"/><rect x="2" y="6" width="1" height="1" fill="#000"/><rect x="3" y="6" width="1" height="1" fill="#fff"/><rect x="4" y="6" width="1" height="1" fill="#fff"/><rect x="5" y="6" width="1" height="1" fill="#fff"/><rect x="6" y="6" width="1" height="1" fill="#000"/><rect x="7" y="6" width="1" height="1" fill="#4f86f7"/><rect x="8" y="6" width="1" height="1" fill="#000"/><rect x="0" y="7" width="1" height="1" fill="#000"/><rect x="1" y="7" width="1" height="1" fill="#4f86f7"/><rect x="2" y="7" width="1" height="1" fill="#000"/><rect x="3" y="7" width="1" height="1" fill="#fff"/><rect x="4" y="7" width="1" height="1" fill="#fff"/><rect x="5" y="7" width="1" height="1" fill="#fff"/><rect x="6" y="7" width="1" height="1" fill="#000"/><rect x="7" y="7" width="1" height="1" fill="#4f86f7"/><rect x="8" y="7" width="1" height="1" fill="#000"/><rect x="0" y="8" width="1" height="1" fill="#000"/><rect x="1" y="8" width="1" height="1" fill="#4f86f7"/><rect x="2" y="8" width="1" height="1" fill="#000"/><rect x="3" y="8" width="1" height="1" fill="#000"/><rect x="4" y="8" width="1" height="1" fill="#000"/><rect x="5" y="8" width="1" height="1" fill="#000"/><rect x="6" y="8" width="1" height="1" fill="#000"/><rect x="7" y="8" width="1" height="1" fill="#4f86f7"/><rect x="8" y="8" width="1" height="1" fill="#000"/><rect x="0" y="9" width="1" height="1" fill="#000"/><rect x="1" y="9" width="1" height="1" fill="#4f86f7"/><rect x="2" y="9" width="1" height="1" fill="#4f86f7"/><rect x="3" y="9" width="1" height="1" fill="#4f86f7"/><rect x="4" y="9" width="1" height="1" fill="#4f86f7"/><rect x="5" y="9" width="1" height="1" fill="#4f86f7"/><rect x="6" y="9" width="1" height="1" fill="#4f86f7"/><rect x="7" y="9" width="1" height="1" fill="#4f86f7"/><rect x="8" y="9" width="1" height="1" fill="#000"/><rect x="0" y="10" width="1" height="1" fill="#000"/><rect x="1" y="10" width="1" height="1" fill="#2f5fdc"/><rect x="2" y="10" width="1" height="1" fill="#2f5fdc"/><rect x="3" y="10" width="1" height="1" fill="#2f5fdc"/><rect x="4" y="10" width="1" height="1" fill="#2f5fdc"/><rect x="5" y="10" width="1" height="1" fill="#2f5fdc"/><rect x="6" y="10" width="1" height="1" fill="#2f5fdc"/><rect x="7" y="10" width="1" height="1" fill="#2f5fdc"/><rect x="8" y="10" width="1" height="1" fill="#000"/><rect x="0" y="11" width="1" height="1" fill="#000"/><rect x="1" y="11" width="1" height="1" fill="#4f86f7"/><rect x="2" y="11" width="1" height="1" fill="#4f86f7"/><rect x="3" y="11" width="1" height="1" fill="#4f86f7"/><rect x="4" y="11" width="1" height="1" fill="#4f86f7"/><rect x="5" y="11" width="1" height="1" fill="#4f86f7"/><rect x="6" y="11" width="1" height="1" fill="#4f86f7"/><rect x="7" y="11" width="1" height="1" fill="#4f86f7"/><rect x="8" y="11" width="1" height="1" fill="#000"/><rect x="0" y="12" width="1" height="1" fill="#000"/><rect x="1" y="12" width="1" height="1" fill="#2f5fdc"/><rect x="2" y="12" width="1" height="1" fill="#2f5fdc"/><rect x="3" y="12" width="1" height="1" fill="#2f5fdc"/><rect x="4" y="12" width="1" height="1" fill="#2f5fdc"/><rect x="5" y="12" width="1" height="1" fill="#2f5fdc"/><rect x="6" y="12" width="1" height="1" fill="#2f5fdc"/><rect x="7" y="12" width="1" height="1" fill="#2f5fdc"/><rect x="8" y="12" width="1" height="1" fill="#000"/><rect x="0" y="13" width="1" height="1" fill="#000"/><rect x="1" y="13" width="1" height="1" fill="#4f86f7"/><rect x="2" y="13" width="1" height="1" fill="#4f86f7"/><rect x="3" y="13" width="1" height="1" fill="#4f86f7"/><rect x="4" y="13" width="1" height="1" fill="#4f86f7"/><rect x="5" y="13" width="1" height="1" fill="#4f86f7"/><rect x="6" y="13" width="1" height="1" fill="#4f86f7"/><rect x="7" y="13" width="1" height="1" fill="#4f86f7"/><rect x="8" y="13" width="1" height="1" fill="#000"/><rect x="0" y="14" width="1" height="1" fill="#000"/><rect x="1" y="14" width="1" height="1" fill="#000"/><rect x="2" y="14" width="1" height="1" fill="#000"/><rect x="3" y="14" width="1" height="1" fill="#000"/><rect x="4" y="14" width="1" height="1" fill="#000"/><rect x="5" y="14" width="1" height="1" fill="#000"/><rect x="6" y="14" width="1" height="1" fill="#000"/><rect x="7" y="14" width="1" height="1" fill="#000"/><rect x="8" y="14" width="1" height="1" fill="#000"/></svg>
<div class="tt" style="left:85.08px;top:487px;transform:scaleX(0.9172);transform-origin:0 0;">INKOOP DEUREN 40</div>
<div class="bx" style="left:49px;top:511px"><i class="bh"></i><i class="bv"></i></div>
<svg class="ic" style="left:64px;top:506px" width="9" height="15" viewBox="0 0 9 15" shape-rendering="crispEdges"><rect x="0" y="0" width="1" height="1" fill="#000"/><rect x="1" y="0" width="1" height="1" fill="#000"/><rect x="2" y="0" width="1" height="1" fill="#000"/><rect x="3" y="0" width="1" height="1" fill="#000"/><rect x="4" y="0" width="1" height="1" fill="#000"/><rect x="5" y="0" width="1" height="1" fill="#000"/><rect x="6" y="0" width="1" height="1" fill="#000"/><rect x="7" y="0" width="1" height="1" fill="#000"/><rect x="8" y="0" width="1" height="1" fill="#000"/><rect x="0" y="1" width="1" height="1" fill="#000"/><rect x="1" y="1" width="1" height="1" fill="#4f86f7"/><rect x="2" y="1" width="1" height="1" fill="#4f86f7"/><rect x="3" y="1" width="1" height="1" fill="#4f86f7"/><rect x="4" y="1" width="1" height="1" fill="#4f86f7"/><rect x="5" y="1" width="1" height="1" fill="#4f86f7"/><rect x="6" y="1" width="1" height="1" fill="#4f86f7"/><rect x="7" y="1" width="1" height="1" fill="#4f86f7"/><rect x="8" y="1" width="1" height="1" fill="#000"/><rect x="0" y="2" width="1" height="1" fill="#000"/><rect x="1" y="2" width="1" height="1" fill="#4f86f7"/><rect x="2" y="2" width="1" height="1" fill="#000"/><rect x="3" y="2" width="1" height="1" fill="#000"/><rect x="4" y="2" width="1" height="1" fill="#000"/><rect x="5" y="2" width="1" height="1" fill="#000"/><rect x="6" y="2" width="1" height="1" fill="#000"/><rect x="7" y="2" width="1" height="1" fill="#4f86f7"/><rect x="8" y="2" width="1" height="1" fill="#000"/><rect x="0" y="3" width="1" height="1" fill="#000"/><rect x="1" y="3" width="1" height="1" fill="#4f86f7"/><rect x="2" y="3" width="1" height="1" fill="#000"/><rect x="3" y="3" width="1" height="1" fill="#fff"/><rect x="4" y="3" width="1" height="1" fill="#fff"/><rect x="5" y="3" width="1" height="1" fill="#fff"/><rect x="6" y="3" width="1" height="1" fill="#000"/><rect x="7" y="3" width="1" height="1" fill="#4f86f7"/><rect x="8" y="3" width="1" height="1" fill="#000"/><rect x="0" y="4" width="1" height="1" fill="#000"/><rect x="1" y="4" width="1" height="1" fill="#4f86f7"/><rect x="2" y="4" width="1" height="1" fill="#000"/><rect x="3" y="4" width="1" height="1" fill="#fff"/><rect x="4" y="4" width="1" height="1" fill="#fff"/><rect x="5" y="4" width="1" height="1" fill="#fff"/><rect x="6" y="4" width="1" height="1" fill="#000"/><rect x="7" y="4" width="1" height="1" fill="#4f86f7"/><rect x="8" y="4" width="1" height="1" fill="#000"/><rect x="0" y="5" width="1" height="1" fill="#000"/><rect x="1" y="5" width="1" height="1" fill="#4f86f7"/><rect x="2" y="5" width="1" height="1" fill="#000"/><rect x="3" y="5" width="1" height="1" fill="#fff"/><rect x="4" y="5" width="1" height="1" fill="#fff"/><rect x="5" y="5" width="1" height="1" fill="#fff"/><rect x="6" y="5" width="1" height="1" fill="#000"/><rect x="7" y="5" width="1" height="1" fill="#4f86f7"/><rect x="8" y="5" width="1" height="1" fill="#000"/><rect x="0" y="6" width="1" height="1" fill="#000"/><rect x="1" y="6" width="1" height="1" fill="#4f86f7"/><rect x="2" y="6" width="1" height="1" fill="#000"/><rect x="3" y="6" width="1" height="1" fill="#fff"/><rect x="4" y="6" width="1" height="1" fill="#fff"/><rect x="5" y="6" width="1" height="1" fill="#fff"/><rect x="6" y="6" width="1" height="1" fill="#000"/><rect x="7" y="6" width="1" height="1" fill="#4f86f7"/><rect x="8" y="6" width="1" height="1" fill="#000"/><rect x="0" y="7" width="1" height="1" fill="#000"/><rect x="1" y="7" width="1" height="1" fill="#4f86f7"/><rect x="2" y="7" width="1" height="1" fill="#000"/><rect x="3" y="7" width="1" height="1" fill="#fff"/><rect x="4" y="7" width="1" height="1" fill="#fff"/><rect x="5" y="7" width="1" height="1" fill="#fff"/><rect x="6" y="7" width="1" height="1" fill="#000"/><rect x="7" y="7" width="1" height="1" fill="#4f86f7"/><rect x="8" y="7" width="1" height="1" fill="#000"/><rect x="0" y="8" width="1" height="1" fill="#000"/><rect x="1" y="8" width="1" height="1" fill="#4f86f7"/><rect x="2" y="8" width="1" height="1" fill="#000"/><rect x="3" y="8" width="1" height="1" fill="#000"/><rect x="4" y="8" width="1" height="1" fill="#000"/><rect x="5" y="8" width="1" height="1" fill="#000"/><rect x="6" y="8" width="1" height="1" fill="#000"/><rect x="7" y="8" width="1" height="1" fill="#4f86f7"/><rect x="8" y="8" width="1" height="1" fill="#000"/><rect x="0" y="9" width="1" height="1" fill="#000"/><rect x="1" y="9" width="1" height="1" fill="#4f86f7"/><rect x="2" y="9" width="1" height="1" fill="#4f86f7"/><rect x="3" y="9" width="1" height="1" fill="#4f86f7"/><rect x="4" y="9" width="1" height="1" fill="#4f86f7"/><rect x="5" y="9" width="1" height="1" fill="#4f86f7"/><rect x="6" y="9" width="1" height="1" fill="#4f86f7"/><rect x="7" y="9" width="1" height="1" fill="#4f86f7"/><rect x="8" y="9" width="1" height="1" fill="#000"/><rect x="0" y="10" width="1" height="1" fill="#000"/><rect x="1" y="10" width="1" height="1" fill="#2f5fdc"/><rect x="2" y="10" width="1" height="1" fill="#2f5fdc"/><rect x="3" y="10" width="1" height="1" fill="#2f5fdc"/><rect x="4" y="10" width="1" height="1" fill="#2f5fdc"/><rect x="5" y="10" width="1" height="1" fill="#2f5fdc"/><rect x="6" y="10" width="1" height="1" fill="#2f5fdc"/><rect x="7" y="10" width="1" height="1" fill="#2f5fdc"/><rect x="8" y="10" width="1" height="1" fill="#000"/><rect x="0" y="11" width="1" height="1" fill="#000"/><rect x="1" y="11" width="1" height="1" fill="#4f86f7"/><rect x="2" y="11" width="1" height="1" fill="#4f86f7"/><rect x="3" y="11" width="1" height="1" fill="#4f86f7"/><rect x="4" y="11" width="1" height="1" fill="#4f86f7"/><rect x="5" y="11" width="1" height="1" fill="#4f86f7"/><rect x="6" y="11" width="1" height="1" fill="#4f86f7"/><rect x="7" y="11" width="1" height="1" fill="#4f86f7"/><rect x="8" y="11" width="1" height="1" fill="#000"/><rect x="0" y="12" width="1" height="1" fill="#000"/><rect x="1" y="12" width="1" height="1" fill="#2f5fdc"/><rect x="2" y="12" width="1" height="1" fill="#2f5fdc"/><rect x="3" y="12" width="1" height="1" fill="#2f5fdc"/><rect x="4" y="12" width="1" height="1" fill="#2f5fdc"/><rect x="5" y="12" width="1" height="1" fill="#2f5fdc"/><rect x="6" y="12" width="1" height="1" fill="#2f5fdc"/><rect x="7" y="12" width="1" height="1" fill="#2f5fdc"/><rect x="8" y="12" width="1" height="1" fill="#000"/><rect x="0" y="13" width="1" height="1" fill="#000"/><rect x="1" y="13" width="1" height="1" fill="#4f86f7"/><rect x="2" y="13" width="1" height="1" fill="#4f86f7"/><rect x="3" y="13" width="1" height="1" fill="#4f86f7"/><rect x="4" y="13" width="1" height="1" fill="#4f86f7"/><rect x="5" y="13" width="1" height="1" fill="#4f86f7"/><rect x="6" y="13" width="1" height="1" fill="#4f86f7"/><rect x="7" y="13" width="1" height="1" fill="#4f86f7"/><rect x="8" y="13" width="1" height="1" fill="#000"/><rect x="0" y="14" width="1" height="1" fill="#000"/><rect x="1" y="14" width="1" height="1" fill="#000"/><rect x="2" y="14" width="1" height="1" fill="#000"/><rect x="3" y="14" width="1" height="1" fill="#000"/><rect x="4" y="14" width="1" height="1" fill="#000"/><rect x="5" y="14" width="1" height="1" fill="#000"/><rect x="6" y="14" width="1" height="1" fill="#000"/><rect x="7" y="14" width="1" height="1" fill="#000"/><rect x="8" y="14" width="1" height="1" fill="#000"/></svg>
<div class="tt" style="left:85.08px;top:505px;transform:scaleX(0.9172);transform-origin:0 0;">INKOOP DEUREN 56</div>
<div class="bx" style="left:49px;top:529px"><i class="bh"></i><i class="bv"></i></div>
<svg class="ic" style="left:64px;top:524px" width="9" height="15" viewBox="0 0 9 15" shape-rendering="crispEdges"><rect x="0" y="0" width="1" height="1" fill="#000"/><rect x="1" y="0" width="1" height="1" fill="#000"/><rect x="2" y="0" width="1" height="1" fill="#000"/><rect x="3" y="0" width="1" height="1" fill="#000"/><rect x="4" y="0" width="1" height="1" fill="#000"/><rect x="5" y="0" width="1" height="1" fill="#000"/><rect x="6" y="0" width="1" height="1" fill="#000"/><rect x="7" y="0" width="1" height="1" fill="#000"/><rect x="8" y="0" width="1" height="1" fill="#000"/><rect x="0" y="1" width="1" height="1" fill="#000"/><rect x="1" y="1" width="1" height="1" fill="#4f86f7"/><rect x="2" y="1" width="1" height="1" fill="#4f86f7"/><rect x="3" y="1" width="1" height="1" fill="#4f86f7"/><rect x="4" y="1" width="1" height="1" fill="#4f86f7"/><rect x="5" y="1" width="1" height="1" fill="#4f86f7"/><rect x="6" y="1" width="1" height="1" fill="#4f86f7"/><rect x="7" y="1" width="1" height="1" fill="#4f86f7"/><rect x="8" y="1" width="1" height="1" fill="#000"/><rect x="0" y="2" width="1" height="1" fill="#000"/><rect x="1" y="2" width="1" height="1" fill="#4f86f7"/><rect x="2" y="2" width="1" height="1" fill="#000"/><rect x="3" y="2" width="1" height="1" fill="#000"/><rect x="4" y="2" width="1" height="1" fill="#000"/><rect x="5" y="2" width="1" height="1" fill="#000"/><rect x="6" y="2" width="1" height="1" fill="#000"/><rect x="7" y="2" width="1" height="1" fill="#4f86f7"/><rect x="8" y="2" width="1" height="1" fill="#000"/><rect x="0" y="3" width="1" height="1" fill="#000"/><rect x="1" y="3" width="1" height="1" fill="#4f86f7"/><rect x="2" y="3" width="1" height="1" fill="#000"/><rect x="3" y="3" width="1" height="1" fill="#fff"/><rect x="4" y="3" width="1" height="1" fill="#fff"/><rect x="5" y="3" width="1" height="1" fill="#fff"/><rect x="6" y="3" width="1" height="1" fill="#000"/><rect x="7" y="3" width="1" height="1" fill="#4f86f7"/><rect x="8" y="3" width="1" height="1" fill="#000"/><rect x="0" y="4" width="1" height="1" fill="#000"/><rect x="1" y="4" width="1" height="1" fill="#4f86f7"/><rect x="2" y="4" width="1" height="1" fill="#000"/><rect x="3" y="4" width="1" height="1" fill="#fff"/><rect x="4" y="4" width="1" height="1" fill="#fff"/><rect x="5" y="4" width="1" height="1" fill="#fff"/><rect x="6" y="4" width="1" height="1" fill="#000"/><rect x="7" y="4" width="1" height="1" fill="#4f86f7"/><rect x="8" y="4" width="1" height="1" fill="#000"/><rect x="0" y="5" width="1" height="1" fill="#000"/><rect x="1" y="5" width="1" height="1" fill="#4f86f7"/><rect x="2" y="5" width="1" height="1" fill="#000"/><rect x="3" y="5" width="1" height="1" fill="#fff"/><rect x="4" y="5" width="1" height="1" fill="#fff"/><rect x="5" y="5" width="1" height="1" fill="#fff"/><rect x="6" y="5" width="1" height="1" fill="#000"/><rect x="7" y="5" width="1" height="1" fill="#4f86f7"/><rect x="8" y="5" width="1" height="1" fill="#000"/><rect x="0" y="6" width="1" height="1" fill="#000"/><rect x="1" y="6" width="1" height="1" fill="#4f86f7"/><rect x="2" y="6" width="1" height="1" fill="#000"/><rect x="3" y="6" width="1" height="1" fill="#fff"/><rect x="4" y="6" width="1" height="1" fill="#fff"/><rect x="5" y="6" width="1" height="1" fill="#fff"/><rect x="6" y="6" width="1" height="1" fill="#000"/><rect x="7" y="6" width="1" height="1" fill="#4f86f7"/><rect x="8" y="6" width="1" height="1" fill="#000"/><rect x="0" y="7" width="1" height="1" fill="#000"/><rect x="1" y="7" width="1" height="1" fill="#4f86f7"/><rect x="2" y="7" width="1" height="1" fill="#000"/><rect x="3" y="7" width="1" height="1" fill="#fff"/><rect x="4" y="7" width="1" height="1" fill="#fff"/><rect x="5" y="7" width="1" height="1" fill="#fff"/><rect x="6" y="7" width="1" height="1" fill="#000"/><rect x="7" y="7" width="1" height="1" fill="#4f86f7"/><rect x="8" y="7" width="1" height="1" fill="#000"/><rect x="0" y="8" width="1" height="1" fill="#000"/><rect x="1" y="8" width="1" height="1" fill="#4f86f7"/><rect x="2" y="8" width="1" height="1" fill="#000"/><rect x="3" y="8" width="1" height="1" fill="#000"/><rect x="4" y="8" width="1" height="1" fill="#000"/><rect x="5" y="8" width="1" height="1" fill="#000"/><rect x="6" y="8" width="1" height="1" fill="#000"/><rect x="7" y="8" width="1" height="1" fill="#4f86f7"/><rect x="8" y="8" width="1" height="1" fill="#000"/><rect x="0" y="9" width="1" height="1" fill="#000"/><rect x="1" y="9" width="1" height="1" fill="#4f86f7"/><rect x="2" y="9" width="1" height="1" fill="#4f86f7"/><rect x="3" y="9" width="1" height="1" fill="#4f86f7"/><rect x="4" y="9" width="1" height="1" fill="#4f86f7"/><rect x="5" y="9" width="1" height="1" fill="#4f86f7"/><rect x="6" y="9" width="1" height="1" fill="#4f86f7"/><rect x="7" y="9" width="1" height="1" fill="#4f86f7"/><rect x="8" y="9" width="1" height="1" fill="#000"/><rect x="0" y="10" width="1" height="1" fill="#000"/><rect x="1" y="10" width="1" height="1" fill="#2f5fdc"/><rect x="2" y="10" width="1" height="1" fill="#2f5fdc"/><rect x="3" y="10" width="1" height="1" fill="#2f5fdc"/><rect x="4" y="10" width="1" height="1" fill="#2f5fdc"/><rect x="5" y="10" width="1" height="1" fill="#2f5fdc"/><rect x="6" y="10" width="1" height="1" fill="#2f5fdc"/><rect x="7" y="10" width="1" height="1" fill="#2f5fdc"/><rect x="8" y="10" width="1" height="1" fill="#000"/><rect x="0" y="11" width="1" height="1" fill="#000"/><rect x="1" y="11" width="1" height="1" fill="#4f86f7"/><rect x="2" y="11" width="1" height="1" fill="#4f86f7"/><rect x="3" y="11" width="1" height="1" fill="#4f86f7"/><rect x="4" y="11" width="1" height="1" fill="#4f86f7"/><rect x="5" y="11" width="1" height="1" fill="#4f86f7"/><rect x="6" y="11" width="1" height="1" fill="#4f86f7"/><rect x="7" y="11" width="1" height="1" fill="#4f86f7"/><rect x="8" y="11" width="1" height="1" fill="#000"/><rect x="0" y="12" width="1" height="1" fill="#000"/><rect x="1" y="12" width="1" height="1" fill="#2f5fdc"/><rect x="2" y="12" width="1" height="1" fill="#2f5fdc"/><rect x="3" y="12" width="1" height="1" fill="#2f5fdc"/><rect x="4" y="12" width="1" height="1" fill="#2f5fdc"/><rect x="5" y="12" width="1" height="1" fill="#2f5fdc"/><rect x="6" y="12" width="1" height="1" fill="#2f5fdc"/><rect x="7" y="12" width="1" height="1" fill="#2f5fdc"/><rect x="8" y="12" width="1" height="1" fill="#000"/><rect x="0" y="13" width="1" height="1" fill="#000"/><rect x="1" y="13" width="1" height="1" fill="#4f86f7"/><rect x="2" y="13" width="1" height="1" fill="#4f86f7"/><rect x="3" y="13" width="1" height="1" fill="#4f86f7"/><rect x="4" y="13" width="1" height="1" fill="#4f86f7"/><rect x="5" y="13" width="1" height="1" fill="#4f86f7"/><rect x="6" y="13" width="1" height="1" fill="#4f86f7"/><rect x="7" y="13" width="1" height="1" fill="#4f86f7"/><rect x="8" y="13" width="1" height="1" fill="#000"/><rect x="0" y="14" width="1" height="1" fill="#000"/><rect x="1" y="14" width="1" height="1" fill="#000"/><rect x="2" y="14" width="1" height="1" fill="#000"/><rect x="3" y="14" width="1" height="1" fill="#000"/><rect x="4" y="14" width="1" height="1" fill="#000"/><rect x="5" y="14" width="1" height="1" fill="#000"/><rect x="6" y="14" width="1" height="1" fill="#000"/><rect x="7" y="14" width="1" height="1" fill="#000"/><rect x="8" y="14" width="1" height="1" fill="#000"/></svg>
<div class="tt" style="left:85.08px;top:523px;transform:scaleX(0.9172);transform-origin:0 0;">INKOOP DEUREN 67</div>
<div class="bx" style="left:49px;top:547px"><i class="bh"></i><i class="bv"></i></div>
<svg class="ic" style="left:64px;top:542px" width="16" height="15" viewBox="0 0 16 15" shape-rendering="crispEdges"><rect x="0" y="0" width="1" height="1" fill="#000"/><rect x="1" y="0" width="1" height="1" fill="#000"/><rect x="2" y="0" width="1" height="1" fill="#000"/><rect x="3" y="0" width="1" height="1" fill="#000"/><rect x="4" y="0" width="1" height="1" fill="#000"/><rect x="5" y="0" width="1" height="1" fill="#000"/><rect x="6" y="0" width="1" height="1" fill="#000"/><rect x="7" y="0" width="1" height="1" fill="#000"/><rect x="8" y="0" width="1" height="1" fill="#000"/><rect x="9" y="0" width="1" height="1" fill="#000"/><rect x="10" y="0" width="1" height="1" fill="#000"/><rect x="11" y="0" width="1" height="1" fill="#000"/><rect x="12" y="0" width="1" height="1" fill="#000"/><rect x="13" y="0" width="1" height="1" fill="#000"/><rect x="14" y="0" width="1" height="1" fill="#000"/><rect x="15" y="0" width="1" height="1" fill="#000"/><rect x="0" y="1" width="1" height="1" fill="#000"/><rect x="1" y="1" width="1" height="1" fill="#4f86f7"/><rect x="2" y="1" width="1" height="1" fill="#4f86f7"/><rect x="3" y="1" width="1" height="1" fill="#4f86f7"/><rect x="4" y="1" width="1" height="1" fill="#4f86f7"/><rect x="5" y="1" width="1" height="1" fill="#4f86f7"/><rect x="6" y="1" width="1" height="1" fill="#4f86f7"/><rect x="7" y="1" width="1" height="1" fill="#4f86f7"/><rect x="8" y="1" width="1" height="1" fill="#000"/><rect x="9" y="1" width="1" height="1" fill="#4f86f7"/><rect x="10" y="1" width="1" height="1" fill="#4f86f7"/><rect x="11" y="1" width="1" height="1" fill="#4f86f7"/><rect x="12" y="1" width="1" height="1" fill="#4f86f7"/><rect x="13" y="1" width="1" height="1" fill="#4f86f7"/><rect x="14" y="1" width="1" height="1" fill="#4f86f7"/><rect x="15" y="1" width="1" height="1" fill="#000"/><rect x="0" y="2" width="1" height="1" fill="#000"/><rect x="1" y="2" width="1" height="1" fill="#4f86f7"/><rect x="2" y="2" width="1" height="1" fill="#000"/><rect x="3" y="2" width="1" height="1" fill="#000"/><rect x="4" y="2" width="1" height="1" fill="#000"/><rect x="5" y="2" width="1" height="1" fill="#000"/><rect x="6" y="2" width="1" height="1" fill="#000"/><rect x="7" y="2" width="1" height="1" fill="#4f86f7"/><rect x="8" y="2" width="1" height="1" fill="#000"/><rect x="9" y="2" width="1" height="1" fill="#000"/><rect x="10" y="2" width="1" height="1" fill="#000"/><rect x="11" y="2" width="1" height="1" fill="#000"/><rect x="12" y="2" width="1" height="1" fill="#000"/><rect x="13" y="2" width="1" height="1" fill="#000"/><rect x="14" y="2" width="1" height="1" fill="#4f86f7"/><rect x="15" y="2" width="1" height="1" fill="#000"/><rect x="0" y="3" width="1" height="1" fill="#000"/><rect x="1" y="3" width="1" height="1" fill="#4f86f7"/><rect x="2" y="3" width="1" height="1" fill="#000"/><rect x="3" y="3" width="1" height="1" fill="#fff"/><rect x="4" y="3" width="1" height="1" fill="#fff"/><rect x="5" y="3" width="1" height="1" fill="#fff"/><rect x="6" y="3" width="1" height="1" fill="#000"/><rect x="7" y="3" width="1" height="1" fill="#4f86f7"/><rect x="8" y="3" width="1" height="1" fill="#000"/><rect x="9" y="3" width="1" height="1" fill="#000"/><rect x="10" y="3" width="1" height="1" fill="#fff"/><rect x="11" y="3" width="1" height="1" fill="#fff"/><rect x="12" y="3" width="1" height="1" fill="#fff"/><rect x="13" y="3" width="1" height="1" fill="#000"/><rect x="14" y="3" width="1" height="1" fill="#4f86f7"/><rect x="15" y="3" width="1" height="1" fill="#000"/><rect x="0" y="4" width="1" height="1" fill="#000"/><rect x="1" y="4" width="1" height="1" fill="#4f86f7"/><rect x="2" y="4" width="1" height="1" fill="#000"/><rect x="3" y="4" width="1" height="1" fill="#fff"/><rect x="4" y="4" width="1" height="1" fill="#fff"/><rect x="5" y="4" width="1" height="1" fill="#fff"/><rect x="6" y="4" width="1" height="1" fill="#000"/><rect x="7" y="4" width="1" height="1" fill="#4f86f7"/><rect x="8" y="4" width="1" height="1" fill="#000"/><rect x="9" y="4" width="1" height="1" fill="#000"/><rect x="10" y="4" width="1" height="1" fill="#fff"/><rect x="11" y="4" width="1" height="1" fill="#fff"/><rect x="12" y="4" width="1" height="1" fill="#fff"/><rect x="13" y="4" width="1" height="1" fill="#000"/><rect x="14" y="4" width="1" height="1" fill="#4f86f7"/><rect x="15" y="4" width="1" height="1" fill="#000"/><rect x="0" y="5" width="1" height="1" fill="#000"/><rect x="1" y="5" width="1" height="1" fill="#4f86f7"/><rect x="2" y="5" width="1" height="1" fill="#000"/><rect x="3" y="5" width="1" height="1" fill="#fff"/><rect x="4" y="5" width="1" height="1" fill="#fff"/><rect x="5" y="5" width="1" height="1" fill="#fff"/><rect x="6" y="5" width="1" height="1" fill="#000"/><rect x="7" y="5" width="1" height="1" fill="#4f86f7"/><rect x="8" y="5" width="1" height="1" fill="#000"/><rect x="9" y="5" width="1" height="1" fill="#000"/><rect x="10" y="5" width="1" height="1" fill="#fff"/><rect x="11" y="5" width="1" height="1" fill="#fff"/><rect x="12" y="5" width="1" height="1" fill="#fff"/><rect x="13" y="5" width="1" height="1" fill="#000"/><rect x="14" y="5" width="1" height="1" fill="#4f86f7"/><rect x="15" y="5" width="1" height="1" fill="#000"/><rect x="0" y="6" width="1" height="1" fill="#000"/><rect x="1" y="6" width="1" height="1" fill="#4f86f7"/><rect x="2" y="6" width="1" height="1" fill="#000"/><rect x="3" y="6" width="1" height="1" fill="#fff"/><rect x="4" y="6" width="1" height="1" fill="#fff"/><rect x="5" y="6" width="1" height="1" fill="#fff"/><rect x="6" y="6" width="1" height="1" fill="#000"/><rect x="7" y="6" width="1" height="1" fill="#4f86f7"/><rect x="8" y="6" width="1" height="1" fill="#000"/><rect x="9" y="6" width="1" height="1" fill="#000"/><rect x="10" y="6" width="1" height="1" fill="#fff"/><rect x="11" y="6" width="1" height="1" fill="#fff"/><rect x="12" y="6" width="1" height="1" fill="#fff"/><rect x="13" y="6" width="1" height="1" fill="#000"/><rect x="14" y="6" width="1" height="1" fill="#4f86f7"/><rect x="15" y="6" width="1" height="1" fill="#000"/><rect x="0" y="7" width="1" height="1" fill="#000"/><rect x="1" y="7" width="1" height="1" fill="#4f86f7"/><rect x="2" y="7" width="1" height="1" fill="#000"/><rect x="3" y="7" width="1" height="1" fill="#fff"/><rect x="4" y="7" width="1" height="1" fill="#fff"/><rect x="5" y="7" width="1" height="1" fill="#fff"/><rect x="6" y="7" width="1" height="1" fill="#000"/><rect x="7" y="7" width="1" height="1" fill="#4f86f7"/><rect x="8" y="7" width="1" height="1" fill="#000"/><rect x="9" y="7" width="1" height="1" fill="#000"/><rect x="10" y="7" width="1" height="1" fill="#fff"/><rect x="11" y="7" width="1" height="1" fill="#fff"/><rect x="12" y="7" width="1" height="1" fill="#fff"/><rect x="13" y="7" width="1" height="1" fill="#000"/><rect x="14" y="7" width="1" height="1" fill="#4f86f7"/><rect x="15" y="7" width="1" height="1" fill="#000"/><rect x="0" y="8" width="1" height="1" fill="#000"/><rect x="1" y="8" width="1" height="1" fill="#4f86f7"/><rect x="2" y="8" width="1" height="1" fill="#000"/><rect x="3" y="8" width="1" height="1" fill="#000"/><rect x="4" y="8" width="1" height="1" fill="#000"/><rect x="5" y="8" width="1" height="1" fill="#000"/><rect x="6" y="8" width="1" height="1" fill="#000"/><rect x="7" y="8" width="1" height="1" fill="#4f86f7"/><rect x="8" y="8" width="1" height="1" fill="#000"/><rect x="9" y="8" width="1" height="1" fill="#000"/><rect x="10" y="8" width="1" height="1" fill="#000"/><rect x="11" y="8" width="1" height="1" fill="#000"/><rect x="12" y="8" width="1" height="1" fill="#000"/><rect x="13" y="8" width="1" height="1" fill="#000"/><rect x="14" y="8" width="1" height="1" fill="#4f86f7"/><rect x="15" y="8" width="1" height="1" fill="#000"/><rect x="0" y="9" width="1" height="1" fill="#000"/><rect x="1" y="9" width="1" height="1" fill="#4f86f7"/><rect x="2" y="9" width="1" height="1" fill="#4f86f7"/><rect x="3" y="9" width="1" height="1" fill="#4f86f7"/><rect x="4" y="9" width="1" height="1" fill="#4f86f7"/><rect x="5" y="9" width="1" height="1" fill="#4f86f7"/><rect x="6" y="9" width="1" height="1" fill="#4f86f7"/><rect x="7" y="9" width="1" height="1" fill="#4f86f7"/><rect x="8" y="9" width="1" height="1" fill="#000"/><rect x="9" y="9" width="1" height="1" fill="#4f86f7"/><rect x="10" y="9" width="1" height="1" fill="#4f86f7"/><rect x="11" y="9" width="1" height="1" fill="#4f86f7"/><rect x="12" y="9" width="1" height="1" fill="#4f86f7"/><rect x="13" y="9" width="1" height="1" fill="#4f86f7"/><rect x="14" y="9" width="1" height="1" fill="#4f86f7"/><rect x="15" y="9" width="1" height="1" fill="#000"/><rect x="0" y="10" width="1" height="1" fill="#000"/><rect x="1" y="10" width="1" height="1" fill="#2f5fdc"/><rect x="2" y="10" width="1" height="1" fill="#2f5fdc"/><rect x="3" y="10" width="1" height="1" fill="#2f5fdc"/><rect x="4" y="10" width="1" height="1" fill="#2f5fdc"/><rect x="5" y="10" width="1" height="1" fill="#2f5fdc"/><rect x="6" y="10" width="1" height="1" fill="#2f5fdc"/><rect x="7" y="10" width="1" height="1" fill="#2f5fdc"/><rect x="8" y="10" width="1" height="1" fill="#000"/><rect x="9" y="10" width="1" height="1" fill="#2f5fdc"/><rect x="10" y="10" width="1" height="1" fill="#2f5fdc"/><rect x="11" y="10" width="1" height="1" fill="#2f5fdc"/><rect x="12" y="10" width="1" height="1" fill="#2f5fdc"/><rect x="13" y="10" width="1" height="1" fill="#2f5fdc"/><rect x="14" y="10" width="1" height="1" fill="#2f5fdc"/><rect x="15" y="10" width="1" height="1" fill="#000"/><rect x="0" y="11" width="1" height="1" fill="#000"/><rect x="1" y="11" width="1" height="1" fill="#4f86f7"/><rect x="2" y="11" width="1" height="1" fill="#4f86f7"/><rect x="3" y="11" width="1" height="1" fill="#4f86f7"/><rect x="4" y="11" width="1" height="1" fill="#4f86f7"/><rect x="5" y="11" width="1" height="1" fill="#4f86f7"/><rect x="6" y="11" width="1" height="1" fill="#4f86f7"/><rect x="7" y="11" width="1" height="1" fill="#4f86f7"/><rect x="8" y="11" width="1" height="1" fill="#000"/><rect x="9" y="11" width="1" height="1" fill="#4f86f7"/><rect x="10" y="11" width="1" height="1" fill="#4f86f7"/><rect x="11" y="11" width="1" height="1" fill="#4f86f7"/><rect x="12" y="11" width="1" height="1" fill="#4f86f7"/><rect x="13" y="11" width="1" height="1" fill="#4f86f7"/><rect x="14" y="11" width="1" height="1" fill="#4f86f7"/><rect x="15" y="11" width="1" height="1" fill="#000"/><rect x="0" y="12" width="1" height="1" fill="#000"/><rect x="1" y="12" width="1" height="1" fill="#2f5fdc"/><rect x="2" y="12" width="1" height="1" fill="#2f5fdc"/><rect x="3" y="12" width="1" height="1" fill="#2f5fdc"/><rect x="4" y="12" width="1" height="1" fill="#2f5fdc"/><rect x="5" y="12" width="1" height="1" fill="#2f5fdc"/><rect x="6" y="12" width="1" height="1" fill="#2f5fdc"/><rect x="7" y="12" width="1" height="1" fill="#2f5fdc"/><rect x="8" y="12" width="1" height="1" fill="#000"/><rect x="9" y="12" width="1" height="1" fill="#2f5fdc"/><rect x="10" y="12" width="1" height="1" fill="#2f5fdc"/><rect x="11" y="12" width="1" height="1" fill="#2f5fdc"/><rect x="12" y="12" width="1" height="1" fill="#2f5fdc"/><rect x="13" y="12" width="1" height="1" fill="#2f5fdc"/><rect x="14" y="12" width="1" height="1" fill="#2f5fdc"/><rect x="15" y="12" width="1" height="1" fill="#000"/><rect x="0" y="13" width="1" height="1" fill="#000"/><rect x="1" y="13" width="1" height="1" fill="#4f86f7"/><rect x="2" y="13" width="1" height="1" fill="#4f86f7"/><rect x="3" y="13" width="1" height="1" fill="#4f86f7"/><rect x="4" y="13" width="1" height="1" fill="#4f86f7"/><rect x="5" y="13" width="1" height="1" fill="#4f86f7"/><rect x="6" y="13" width="1" height="1" fill="#4f86f7"/><rect x="7" y="13" width="1" height="1" fill="#4f86f7"/><rect x="8" y="13" width="1" height="1" fill="#000"/><rect x="9" y="13" width="1" height="1" fill="#4f86f7"/><rect x="10" y="13" width="1" height="1" fill="#4f86f7"/><rect x="11" y="13" width="1" height="1" fill="#4f86f7"/><rect x="12" y="13" width="1" height="1" fill="#4f86f7"/><rect x="13" y="13" width="1" height="1" fill="#4f86f7"/><rect x="14" y="13" width="1" height="1" fill="#4f86f7"/><rect x="15" y="13" width="1" height="1" fill="#000"/><rect x="0" y="14" width="1" height="1" fill="#000"/><rect x="1" y="14" width="1" height="1" fill="#000"/><rect x="2" y="14" width="1" height="1" fill="#000"/><rect x="3" y="14" width="1" height="1" fill="#000"/><rect x="4" y="14" width="1" height="1" fill="#000"/><rect x="5" y="14" width="1" height="1" fill="#000"/><rect x="6" y="14" width="1" height="1" fill="#000"/><rect x="7" y="14" width="1" height="1" fill="#000"/><rect x="8" y="14" width="1" height="1" fill="#000"/><rect x="9" y="14" width="1" height="1" fill="#000"/><rect x="10" y="14" width="1" height="1" fill="#000"/><rect x="11" y="14" width="1" height="1" fill="#000"/><rect x="12" y="14" width="1" height="1" fill="#000"/><rect x="13" y="14" width="1" height="1" fill="#000"/><rect x="14" y="14" width="1" height="1" fill="#000"/><rect x="15" y="14" width="1" height="1" fill="#000"/></svg>
<div class="tt" style="left:85.09px;top:541px;transform:scaleX(0.9051);transform-origin:0 0;">INKOOP STOLP DEUREN 40</div>
<div class="bx" style="left:49px;top:565px"><i class="bh"></i><i class="bv"></i></div>
<svg class="ic" style="left:64px;top:560px" width="16" height="15" viewBox="0 0 16 15" shape-rendering="crispEdges"><rect x="0" y="0" width="1" height="1" fill="#000"/><rect x="1" y="0" width="1" height="1" fill="#000"/><rect x="2" y="0" width="1" height="1" fill="#000"/><rect x="3" y="0" width="1" height="1" fill="#000"/><rect x="4" y="0" width="1" height="1" fill="#000"/><rect x="5" y="0" width="1" height="1" fill="#000"/><rect x="6" y="0" width="1" height="1" fill="#000"/><rect x="7" y="0" width="1" height="1" fill="#000"/><rect x="8" y="0" width="1" height="1" fill="#000"/><rect x="9" y="0" width="1" height="1" fill="#000"/><rect x="10" y="0" width="1" height="1" fill="#000"/><rect x="11" y="0" width="1" height="1" fill="#000"/><rect x="12" y="0" width="1" height="1" fill="#000"/><rect x="13" y="0" width="1" height="1" fill="#000"/><rect x="14" y="0" width="1" height="1" fill="#000"/><rect x="15" y="0" width="1" height="1" fill="#000"/><rect x="0" y="1" width="1" height="1" fill="#000"/><rect x="1" y="1" width="1" height="1" fill="#4f86f7"/><rect x="2" y="1" width="1" height="1" fill="#4f86f7"/><rect x="3" y="1" width="1" height="1" fill="#4f86f7"/><rect x="4" y="1" width="1" height="1" fill="#4f86f7"/><rect x="5" y="1" width="1" height="1" fill="#4f86f7"/><rect x="6" y="1" width="1" height="1" fill="#4f86f7"/><rect x="7" y="1" width="1" height="1" fill="#4f86f7"/><rect x="8" y="1" width="1" height="1" fill="#000"/><rect x="9" y="1" width="1" height="1" fill="#4f86f7"/><rect x="10" y="1" width="1" height="1" fill="#4f86f7"/><rect x="11" y="1" width="1" height="1" fill="#4f86f7"/><rect x="12" y="1" width="1" height="1" fill="#4f86f7"/><rect x="13" y="1" width="1" height="1" fill="#4f86f7"/><rect x="14" y="1" width="1" height="1" fill="#4f86f7"/><rect x="15" y="1" width="1" height="1" fill="#000"/><rect x="0" y="2" width="1" height="1" fill="#000"/><rect x="1" y="2" width="1" height="1" fill="#4f86f7"/><rect x="2" y="2" width="1" height="1" fill="#000"/><rect x="3" y="2" width="1" height="1" fill="#000"/><rect x="4" y="2" width="1" height="1" fill="#000"/><rect x="5" y="2" width="1" height="1" fill="#000"/><rect x="6" y="2" width="1" height="1" fill="#000"/><rect x="7" y="2" width="1" height="1" fill="#4f86f7"/><rect x="8" y="2" width="1" height="1" fill="#000"/><rect x="9" y="2" width="1" height="1" fill="#000"/><rect x="10" y="2" width="1" height="1" fill="#000"/><rect x="11" y="2" width="1" height="1" fill="#000"/><rect x="12" y="2" width="1" height="1" fill="#000"/><rect x="13" y="2" width="1" height="1" fill="#000"/><rect x="14" y="2" width="1" height="1" fill="#4f86f7"/><rect x="15" y="2" width="1" height="1" fill="#000"/><rect x="0" y="3" width="1" height="1" fill="#000"/><rect x="1" y="3" width="1" height="1" fill="#4f86f7"/><rect x="2" y="3" width="1" height="1" fill="#000"/><rect x="3" y="3" width="1" height="1" fill="#fff"/><rect x="4" y="3" width="1" height="1" fill="#fff"/><rect x="5" y="3" width="1" height="1" fill="#fff"/><rect x="6" y="3" width="1" height="1" fill="#000"/><rect x="7" y="3" width="1" height="1" fill="#4f86f7"/><rect x="8" y="3" width="1" height="1" fill="#000"/><rect x="9" y="3" width="1" height="1" fill="#000"/><rect x="10" y="3" width="1" height="1" fill="#fff"/><rect x="11" y="3" width="1" height="1" fill="#fff"/><rect x="12" y="3" width="1" height="1" fill="#fff"/><rect x="13" y="3" width="1" height="1" fill="#000"/><rect x="14" y="3" width="1" height="1" fill="#4f86f7"/><rect x="15" y="3" width="1" height="1" fill="#000"/><rect x="0" y="4" width="1" height="1" fill="#000"/><rect x="1" y="4" width="1" height="1" fill="#4f86f7"/><rect x="2" y="4" width="1" height="1" fill="#000"/><rect x="3" y="4" width="1" height="1" fill="#fff"/><rect x="4" y="4" width="1" height="1" fill="#fff"/><rect x="5" y="4" width="1" height="1" fill="#fff"/><rect x="6" y="4" width="1" height="1" fill="#000"/><rect x="7" y="4" width="1" height="1" fill="#4f86f7"/><rect x="8" y="4" width="1" height="1" fill="#000"/><rect x="9" y="4" width="1" height="1" fill="#000"/><rect x="10" y="4" width="1" height="1" fill="#fff"/><rect x="11" y="4" width="1" height="1" fill="#fff"/><rect x="12" y="4" width="1" height="1" fill="#fff"/><rect x="13" y="4" width="1" height="1" fill="#000"/><rect x="14" y="4" width="1" height="1" fill="#4f86f7"/><rect x="15" y="4" width="1" height="1" fill="#000"/><rect x="0" y="5" width="1" height="1" fill="#000"/><rect x="1" y="5" width="1" height="1" fill="#4f86f7"/><rect x="2" y="5" width="1" height="1" fill="#000"/><rect x="3" y="5" width="1" height="1" fill="#fff"/><rect x="4" y="5" width="1" height="1" fill="#fff"/><rect x="5" y="5" width="1" height="1" fill="#fff"/><rect x="6" y="5" width="1" height="1" fill="#000"/><rect x="7" y="5" width="1" height="1" fill="#4f86f7"/><rect x="8" y="5" width="1" height="1" fill="#000"/><rect x="9" y="5" width="1" height="1" fill="#000"/><rect x="10" y="5" width="1" height="1" fill="#fff"/><rect x="11" y="5" width="1" height="1" fill="#fff"/><rect x="12" y="5" width="1" height="1" fill="#fff"/><rect x="13" y="5" width="1" height="1" fill="#000"/><rect x="14" y="5" width="1" height="1" fill="#4f86f7"/><rect x="15" y="5" width="1" height="1" fill="#000"/><rect x="0" y="6" width="1" height="1" fill="#000"/><rect x="1" y="6" width="1" height="1" fill="#4f86f7"/><rect x="2" y="6" width="1" height="1" fill="#000"/><rect x="3" y="6" width="1" height="1" fill="#fff"/><rect x="4" y="6" width="1" height="1" fill="#fff"/><rect x="5" y="6" width="1" height="1" fill="#fff"/><rect x="6" y="6" width="1" height="1" fill="#000"/><rect x="7" y="6" width="1" height="1" fill="#4f86f7"/><rect x="8" y="6" width="1" height="1" fill="#000"/><rect x="9" y="6" width="1" height="1" fill="#000"/><rect x="10" y="6" width="1" height="1" fill="#fff"/><rect x="11" y="6" width="1" height="1" fill="#fff"/><rect x="12" y="6" width="1" height="1" fill="#fff"/><rect x="13" y="6" width="1" height="1" fill="#000"/><rect x="14" y="6" width="1" height="1" fill="#4f86f7"/><rect x="15" y="6" width="1" height="1" fill="#000"/><rect x="0" y="7" width="1" height="1" fill="#000"/><rect x="1" y="7" width="1" height="1" fill="#4f86f7"/><rect x="2" y="7" width="1" height="1" fill="#000"/><rect x="3" y="7" width="1" height="1" fill="#fff"/><rect x="4" y="7" width="1" height="1" fill="#fff"/><rect x="5" y="7" width="1" height="1" fill="#fff"/><rect x="6" y="7" width="1" height="1" fill="#000"/><rect x="7" y="7" width="1" height="1" fill="#4f86f7"/><rect x="8" y="7" width="1" height="1" fill="#000"/><rect x="9" y="7" width="1" height="1" fill="#000"/><rect x="10" y="7" width="1" height="1" fill="#fff"/><rect x="11" y="7" width="1" height="1" fill="#fff"/><rect x="12" y="7" width="1" height="1" fill="#fff"/><rect x="13" y="7" width="1" height="1" fill="#000"/><rect x="14" y="7" width="1" height="1" fill="#4f86f7"/><rect x="15" y="7" width="1" height="1" fill="#000"/><rect x="0" y="8" width="1" height="1" fill="#000"/><rect x="1" y="8" width="1" height="1" fill="#4f86f7"/><rect x="2" y="8" width="1" height="1" fill="#000"/><rect x="3" y="8" width="1" height="1" fill="#000"/><rect x="4" y="8" width="1" height="1" fill="#000"/><rect x="5" y="8" width="1" height="1" fill="#000"/><rect x="6" y="8" width="1" height="1" fill="#000"/><rect x="7" y="8" width="1" height="1" fill="#4f86f7"/><rect x="8" y="8" width="1" height="1" fill="#000"/><rect x="9" y="8" width="1" height="1" fill="#000"/><rect x="10" y="8" width="1" height="1" fill="#000"/><rect x="11" y="8" width="1" height="1" fill="#000"/><rect x="12" y="8" width="1" height="1" fill="#000"/><rect x="13" y="8" width="1" height="1" fill="#000"/><rect x="14" y="8" width="1" height="1" fill="#4f86f7"/><rect x="15" y="8" width="1" height="1" fill="#000"/><rect x="0" y="9" width="1" height="1" fill="#000"/><rect x="1" y="9" width="1" height="1" fill="#4f86f7"/><rect x="2" y="9" width="1" height="1" fill="#4f86f7"/><rect x="3" y="9" width="1" height="1" fill="#4f86f7"/><rect x="4" y="9" width="1" height="1" fill="#4f86f7"/><rect x="5" y="9" width="1" height="1" fill="#4f86f7"/><rect x="6" y="9" width="1" height="1" fill="#4f86f7"/><rect x="7" y="9" width="1" height="1" fill="#4f86f7"/><rect x="8" y="9" width="1" height="1" fill="#000"/><rect x="9" y="9" width="1" height="1" fill="#4f86f7"/><rect x="10" y="9" width="1" height="1" fill="#4f86f7"/><rect x="11" y="9" width="1" height="1" fill="#4f86f7"/><rect x="12" y="9" width="1" height="1" fill="#4f86f7"/><rect x="13" y="9" width="1" height="1" fill="#4f86f7"/><rect x="14" y="9" width="1" height="1" fill="#4f86f7"/><rect x="15" y="9" width="1" height="1" fill="#000"/><rect x="0" y="10" width="1" height="1" fill="#000"/><rect x="1" y="10" width="1" height="1" fill="#2f5fdc"/><rect x="2" y="10" width="1" height="1" fill="#2f5fdc"/><rect x="3" y="10" width="1" height="1" fill="#2f5fdc"/><rect x="4" y="10" width="1" height="1" fill="#2f5fdc"/><rect x="5" y="10" width="1" height="1" fill="#2f5fdc"/><rect x="6" y="10" width="1" height="1" fill="#2f5fdc"/><rect x="7" y="10" width="1" height="1" fill="#2f5fdc"/><rect x="8" y="10" width="1" height="1" fill="#000"/><rect x="9" y="10" width="1" height="1" fill="#2f5fdc"/><rect x="10" y="10" width="1" height="1" fill="#2f5fdc"/><rect x="11" y="10" width="1" height="1" fill="#2f5fdc"/><rect x="12" y="10" width="1" height="1" fill="#2f5fdc"/><rect x="13" y="10" width="1" height="1" fill="#2f5fdc"/><rect x="14" y="10" width="1" height="1" fill="#2f5fdc"/><rect x="15" y="10" width="1" height="1" fill="#000"/><rect x="0" y="11" width="1" height="1" fill="#000"/><rect x="1" y="11" width="1" height="1" fill="#4f86f7"/><rect x="2" y="11" width="1" height="1" fill="#4f86f7"/><rect x="3" y="11" width="1" height="1" fill="#4f86f7"/><rect x="4" y="11" width="1" height="1" fill="#4f86f7"/><rect x="5" y="11" width="1" height="1" fill="#4f86f7"/><rect x="6" y="11" width="1" height="1" fill="#4f86f7"/><rect x="7" y="11" width="1" height="1" fill="#4f86f7"/><rect x="8" y="11" width="1" height="1" fill="#000"/><rect x="9" y="11" width="1" height="1" fill="#4f86f7"/><rect x="10" y="11" width="1" height="1" fill="#4f86f7"/><rect x="11" y="11" width="1" height="1" fill="#4f86f7"/><rect x="12" y="11" width="1" height="1" fill="#4f86f7"/><rect x="13" y="11" width="1" height="1" fill="#4f86f7"/><rect x="14" y="11" width="1" height="1" fill="#4f86f7"/><rect x="15" y="11" width="1" height="1" fill="#000"/><rect x="0" y="12" width="1" height="1" fill="#000"/><rect x="1" y="12" width="1" height="1" fill="#2f5fdc"/><rect x="2" y="12" width="1" height="1" fill="#2f5fdc"/><rect x="3" y="12" width="1" height="1" fill="#2f5fdc"/><rect x="4" y="12" width="1" height="1" fill="#2f5fdc"/><rect x="5" y="12" width="1" height="1" fill="#2f5fdc"/><rect x="6" y="12" width="1" height="1" fill="#2f5fdc"/><rect x="7" y="12" width="1" height="1" fill="#2f5fdc"/><rect x="8" y="12" width="1" height="1" fill="#000"/><rect x="9" y="12" width="1" height="1" fill="#2f5fdc"/><rect x="10" y="12" width="1" height="1" fill="#2f5fdc"/><rect x="11" y="12" width="1" height="1" fill="#2f5fdc"/><rect x="12" y="12" width="1" height="1" fill="#2f5fdc"/><rect x="13" y="12" width="1" height="1" fill="#2f5fdc"/><rect x="14" y="12" width="1" height="1" fill="#2f5fdc"/><rect x="15" y="12" width="1" height="1" fill="#000"/><rect x="0" y="13" width="1" height="1" fill="#000"/><rect x="1" y="13" width="1" height="1" fill="#4f86f7"/><rect x="2" y="13" width="1" height="1" fill="#4f86f7"/><rect x="3" y="13" width="1" height="1" fill="#4f86f7"/><rect x="4" y="13" width="1" height="1" fill="#4f86f7"/><rect x="5" y="13" width="1" height="1" fill="#4f86f7"/><rect x="6" y="13" width="1" height="1" fill="#4f86f7"/><rect x="7" y="13" width="1" height="1" fill="#4f86f7"/><rect x="8" y="13" width="1" height="1" fill="#000"/><rect x="9" y="13" width="1" height="1" fill="#4f86f7"/><rect x="10" y="13" width="1" height="1" fill="#4f86f7"/><rect x="11" y="13" width="1" height="1" fill="#4f86f7"/><rect x="12" y="13" width="1" height="1" fill="#4f86f7"/><rect x="13" y="13" width="1" height="1" fill="#4f86f7"/><rect x="14" y="13" width="1" height="1" fill="#4f86f7"/><rect x="15" y="13" width="1" height="1" fill="#000"/><rect x="0" y="14" width="1" height="1" fill="#000"/><rect x="1" y="14" width="1" height="1" fill="#000"/><rect x="2" y="14" width="1" height="1" fill="#000"/><rect x="3" y="14" width="1" height="1" fill="#000"/><rect x="4" y="14" width="1" height="1" fill="#000"/><rect x="5" y="14" width="1" height="1" fill="#000"/><rect x="6" y="14" width="1" height="1" fill="#000"/><rect x="7" y="14" width="1" height="1" fill="#000"/><rect x="8" y="14" width="1" height="1" fill="#000"/><rect x="9" y="14" width="1" height="1" fill="#000"/><rect x="10" y="14" width="1" height="1" fill="#000"/><rect x="11" y="14" width="1" height="1" fill="#000"/><rect x="12" y="14" width="1" height="1" fill="#000"/><rect x="13" y="14" width="1" height="1" fill="#000"/><rect x="14" y="14" width="1" height="1" fill="#000"/><rect x="15" y="14" width="1" height="1" fill="#000"/></svg>
<div class="tt" style="left:85.09px;top:559px;transform:scaleX(0.9051);transform-origin:0 0;">INKOOP STOLP DEUREN 56</div>
<div class="bx" style="left:49px;top:583px"><i class="bh"></i><i class="bv"></i></div>
<svg class="ic" style="left:64px;top:578px" width="16" height="15" viewBox="0 0 16 15" shape-rendering="crispEdges"><rect x="0" y="0" width="1" height="1" fill="#000"/><rect x="1" y="0" width="1" height="1" fill="#000"/><rect x="2" y="0" width="1" height="1" fill="#000"/><rect x="3" y="0" width="1" height="1" fill="#000"/><rect x="4" y="0" width="1" height="1" fill="#000"/><rect x="5" y="0" width="1" height="1" fill="#000"/><rect x="6" y="0" width="1" height="1" fill="#000"/><rect x="7" y="0" width="1" height="1" fill="#000"/><rect x="8" y="0" width="1" height="1" fill="#000"/><rect x="9" y="0" width="1" height="1" fill="#000"/><rect x="10" y="0" width="1" height="1" fill="#000"/><rect x="11" y="0" width="1" height="1" fill="#000"/><rect x="12" y="0" width="1" height="1" fill="#000"/><rect x="13" y="0" width="1" height="1" fill="#000"/><rect x="14" y="0" width="1" height="1" fill="#000"/><rect x="15" y="0" width="1" height="1" fill="#000"/><rect x="0" y="1" width="1" height="1" fill="#000"/><rect x="1" y="1" width="1" height="1" fill="#4f86f7"/><rect x="2" y="1" width="1" height="1" fill="#4f86f7"/><rect x="3" y="1" width="1" height="1" fill="#4f86f7"/><rect x="4" y="1" width="1" height="1" fill="#4f86f7"/><rect x="5" y="1" width="1" height="1" fill="#4f86f7"/><rect x="6" y="1" width="1" height="1" fill="#4f86f7"/><rect x="7" y="1" width="1" height="1" fill="#4f86f7"/><rect x="8" y="1" width="1" height="1" fill="#000"/><rect x="9" y="1" width="1" height="1" fill="#4f86f7"/><rect x="10" y="1" width="1" height="1" fill="#4f86f7"/><rect x="11" y="1" width="1" height="1" fill="#4f86f7"/><rect x="12" y="1" width="1" height="1" fill="#4f86f7"/><rect x="13" y="1" width="1" height="1" fill="#4f86f7"/><rect x="14" y="1" width="1" height="1" fill="#4f86f7"/><rect x="15" y="1" width="1" height="1" fill="#000"/><rect x="0" y="2" width="1" height="1" fill="#000"/><rect x="1" y="2" width="1" height="1" fill="#4f86f7"/><rect x="2" y="2" width="1" height="1" fill="#000"/><rect x="3" y="2" width="1" height="1" fill="#000"/><rect x="4" y="2" width="1" height="1" fill="#000"/><rect x="5" y="2" width="1" height="1" fill="#000"/><rect x="6" y="2" width="1" height="1" fill="#000"/><rect x="7" y="2" width="1" height="1" fill="#4f86f7"/><rect x="8" y="2" width="1" height="1" fill="#000"/><rect x="9" y="2" width="1" height="1" fill="#000"/><rect x="10" y="2" width="1" height="1" fill="#000"/><rect x="11" y="2" width="1" height="1" fill="#000"/><rect x="12" y="2" width="1" height="1" fill="#000"/><rect x="13" y="2" width="1" height="1" fill="#000"/><rect x="14" y="2" width="1" height="1" fill="#4f86f7"/><rect x="15" y="2" width="1" height="1" fill="#000"/><rect x="0" y="3" width="1" height="1" fill="#000"/><rect x="1" y="3" width="1" height="1" fill="#4f86f7"/><rect x="2" y="3" width="1" height="1" fill="#000"/><rect x="3" y="3" width="1" height="1" fill="#fff"/><rect x="4" y="3" width="1" height="1" fill="#fff"/><rect x="5" y="3" width="1" height="1" fill="#fff"/><rect x="6" y="3" width="1" height="1" fill="#000"/><rect x="7" y="3" width="1" height="1" fill="#4f86f7"/><rect x="8" y="3" width="1" height="1" fill="#000"/><rect x="9" y="3" width="1" height="1" fill="#000"/><rect x="10" y="3" width="1" height="1" fill="#fff"/><rect x="11" y="3" width="1" height="1" fill="#fff"/><rect x="12" y="3" width="1" height="1" fill="#fff"/><rect x="13" y="3" width="1" height="1" fill="#000"/><rect x="14" y="3" width="1" height="1" fill="#4f86f7"/><rect x="15" y="3" width="1" height="1" fill="#000"/><rect x="0" y="4" width="1" height="1" fill="#000"/><rect x="1" y="4" width="1" height="1" fill="#4f86f7"/><rect x="2" y="4" width="1" height="1" fill="#000"/><rect x="3" y="4" width="1" height="1" fill="#fff"/><rect x="4" y="4" width="1" height="1" fill="#fff"/><rect x="5" y="4" width="1" height="1" fill="#fff"/><rect x="6" y="4" width="1" height="1" fill="#000"/><rect x="7" y="4" width="1" height="1" fill="#4f86f7"/><rect x="8" y="4" width="1" height="1" fill="#000"/><rect x="9" y="4" width="1" height="1" fill="#000"/><rect x="10" y="4" width="1" height="1" fill="#fff"/><rect x="11" y="4" width="1" height="1" fill="#fff"/><rect x="12" y="4" width="1" height="1" fill="#fff"/><rect x="13" y="4" width="1" height="1" fill="#000"/><rect x="14" y="4" width="1" height="1" fill="#4f86f7"/><rect x="15" y="4" width="1" height="1" fill="#000"/><rect x="0" y="5" width="1" height="1" fill="#000"/><rect x="1" y="5" width="1" height="1" fill="#4f86f7"/><rect x="2" y="5" width="1" height="1" fill="#000"/><rect x="3" y="5" width="1" height="1" fill="#fff"/><rect x="4" y="5" width="1" height="1" fill="#fff"/><rect x="5" y="5" width="1" height="1" fill="#fff"/><rect x="6" y="5" width="1" height="1" fill="#000"/><rect x="7" y="5" width="1" height="1" fill="#4f86f7"/><rect x="8" y="5" width="1" height="1" fill="#000"/><rect x="9" y="5" width="1" height="1" fill="#000"/><rect x="10" y="5" width="1" height="1" fill="#fff"/><rect x="11" y="5" width="1" height="1" fill="#fff"/><rect x="12" y="5" width="1" height="1" fill="#fff"/><rect x="13" y="5" width="1" height="1" fill="#000"/><rect x="14" y="5" width="1" height="1" fill="#4f86f7"/><rect x="15" y="5" width="1" height="1" fill="#000"/><rect x="0" y="6" width="1" height="1" fill="#000"/><rect x="1" y="6" width="1" height="1" fill="#4f86f7"/><rect x="2" y="6" width="1" height="1" fill="#000"/><rect x="3" y="6" width="1" height="1" fill="#fff"/><rect x="4" y="6" width="1" height="1" fill="#fff"/><rect x="5" y="6" width="1" height="1" fill="#fff"/><rect x="6" y="6" width="1" height="1" fill="#000"/><rect x="7" y="6" width="1" height="1" fill="#4f86f7"/><rect x="8" y="6" width="1" height="1" fill="#000"/><rect x="9" y="6" width="1" height="1" fill="#000"/><rect x="10" y="6" width="1" height="1" fill="#fff"/><rect x="11" y="6" width="1" height="1" fill="#fff"/><rect x="12" y="6" width="1" height="1" fill="#fff"/><rect x="13" y="6" width="1" height="1" fill="#000"/><rect x="14" y="6" width="1" height="1" fill="#4f86f7"/><rect x="15" y="6" width="1" height="1" fill="#000"/><rect x="0" y="7" width="1" height="1" fill="#000"/><rect x="1" y="7" width="1" height="1" fill="#4f86f7"/><rect x="2" y="7" width="1" height="1" fill="#000"/><rect x="3" y="7" width="1" height="1" fill="#fff"/><rect x="4" y="7" width="1" height="1" fill="#fff"/><rect x="5" y="7" width="1" height="1" fill="#fff"/><rect x="6" y="7" width="1" height="1" fill="#000"/><rect x="7" y="7" width="1" height="1" fill="#4f86f7"/><rect x="8" y="7" width="1" height="1" fill="#000"/><rect x="9" y="7" width="1" height="1" fill="#000"/><rect x="10" y="7" width="1" height="1" fill="#fff"/><rect x="11" y="7" width="1" height="1" fill="#fff"/><rect x="12" y="7" width="1" height="1" fill="#fff"/><rect x="13" y="7" width="1" height="1" fill="#000"/><rect x="14" y="7" width="1" height="1" fill="#4f86f7"/><rect x="15" y="7" width="1" height="1" fill="#000"/><rect x="0" y="8" width="1" height="1" fill="#000"/><rect x="1" y="8" width="1" height="1" fill="#4f86f7"/><rect x="2" y="8" width="1" height="1" fill="#000"/><rect x="3" y="8" width="1" height="1" fill="#000"/><rect x="4" y="8" width="1" height="1" fill="#000"/><rect x="5" y="8" width="1" height="1" fill="#000"/><rect x="6" y="8" width="1" height="1" fill="#000"/><rect x="7" y="8" width="1" height="1" fill="#4f86f7"/><rect x="8" y="8" width="1" height="1" fill="#000"/><rect x="9" y="8" width="1" height="1" fill="#000"/><rect x="10" y="8" width="1" height="1" fill="#000"/><rect x="11" y="8" width="1" height="1" fill="#000"/><rect x="12" y="8" width="1" height="1" fill="#000"/><rect x="13" y="8" width="1" height="1" fill="#000"/><rect x="14" y="8" width="1" height="1" fill="#4f86f7"/><rect x="15" y="8" width="1" height="1" fill="#000"/><rect x="0" y="9" width="1" height="1" fill="#000"/><rect x="1" y="9" width="1" height="1" fill="#4f86f7"/><rect x="2" y="9" width="1" height="1" fill="#4f86f7"/><rect x="3" y="9" width="1" height="1" fill="#4f86f7"/><rect x="4" y="9" width="1" height="1" fill="#4f86f7"/><rect x="5" y="9" width="1" height="1" fill="#4f86f7"/><rect x="6" y="9" width="1" height="1" fill="#4f86f7"/><rect x="7" y="9" width="1" height="1" fill="#4f86f7"/><rect x="8" y="9" width="1" height="1" fill="#000"/><rect x="9" y="9" width="1" height="1" fill="#4f86f7"/><rect x="10" y="9" width="1" height="1" fill="#4f86f7"/><rect x="11" y="9" width="1" height="1" fill="#4f86f7"/><rect x="12" y="9" width="1" height="1" fill="#4f86f7"/><rect x="13" y="9" width="1" height="1" fill="#4f86f7"/><rect x="14" y="9" width="1" height="1" fill="#4f86f7"/><rect x="15" y="9" width="1" height="1" fill="#000"/><rect x="0" y="10" width="1" height="1" fill="#000"/><rect x="1" y="10" width="1" height="1" fill="#2f5fdc"/><rect x="2" y="10" width="1" height="1" fill="#2f5fdc"/><rect x="3" y="10" width="1" height="1" fill="#2f5fdc"/><rect x="4" y="10" width="1" height="1" fill="#2f5fdc"/><rect x="5" y="10" width="1" height="1" fill="#2f5fdc"/><rect x="6" y="10" width="1" height="1" fill="#2f5fdc"/><rect x="7" y="10" width="1" height="1" fill="#2f5fdc"/><rect x="8" y="10" width="1" height="1" fill="#000"/><rect x="9" y="10" width="1" height="1" fill="#2f5fdc"/><rect x="10" y="10" width="1" height="1" fill="#2f5fdc"/><rect x="11" y="10" width="1" height="1" fill="#2f5fdc"/><rect x="12" y="10" width="1" height="1" fill="#2f5fdc"/><rect x="13" y="10" width="1" height="1" fill="#2f5fdc"/><rect x="14" y="10" width="1" height="1" fill="#2f5fdc"/><rect x="15" y="10" width="1" height="1" fill="#000"/><rect x="0" y="11" width="1" height="1" fill="#000"/><rect x="1" y="11" width="1" height="1" fill="#4f86f7"/><rect x="2" y="11" width="1" height="1" fill="#4f86f7"/><rect x="3" y="11" width="1" height="1" fill="#4f86f7"/><rect x="4" y="11" width="1" height="1" fill="#4f86f7"/><rect x="5" y="11" width="1" height="1" fill="#4f86f7"/><rect x="6" y="11" width="1" height="1" fill="#4f86f7"/><rect x="7" y="11" width="1" height="1" fill="#4f86f7"/><rect x="8" y="11" width="1" height="1" fill="#000"/><rect x="9" y="11" width="1" height="1" fill="#4f86f7"/><rect x="10" y="11" width="1" height="1" fill="#4f86f7"/><rect x="11" y="11" width="1" height="1" fill="#4f86f7"/><rect x="12" y="11" width="1" height="1" fill="#4f86f7"/><rect x="13" y="11" width="1" height="1" fill="#4f86f7"/><rect x="14" y="11" width="1" height="1" fill="#4f86f7"/><rect x="15" y="11" width="1" height="1" fill="#000"/><rect x="0" y="12" width="1" height="1" fill="#000"/><rect x="1" y="12" width="1" height="1" fill="#2f5fdc"/><rect x="2" y="12" width="1" height="1" fill="#2f5fdc"/><rect x="3" y="12" width="1" height="1" fill="#2f5fdc"/><rect x="4" y="12" width="1" height="1" fill="#2f5fdc"/><rect x="5" y="12" width="1" height="1" fill="#2f5fdc"/><rect x="6" y="12" width="1" height="1" fill="#2f5fdc"/><rect x="7" y="12" width="1" height="1" fill="#2f5fdc"/><rect x="8" y="12" width="1" height="1" fill="#000"/><rect x="9" y="12" width="1" height="1" fill="#2f5fdc"/><rect x="10" y="12" width="1" height="1" fill="#2f5fdc"/><rect x="11" y="12" width="1" height="1" fill="#2f5fdc"/><rect x="12" y="12" width="1" height="1" fill="#2f5fdc"/><rect x="13" y="12" width="1" height="1" fill="#2f5fdc"/><rect x="14" y="12" width="1" height="1" fill="#2f5fdc"/><rect x="15" y="12" width="1" height="1" fill="#000"/><rect x="0" y="13" width="1" height="1" fill="#000"/><rect x="1" y="13" width="1" height="1" fill="#4f86f7"/><rect x="2" y="13" width="1" height="1" fill="#4f86f7"/><rect x="3" y="13" width="1" height="1" fill="#4f86f7"/><rect x="4" y="13" width="1" height="1" fill="#4f86f7"/><rect x="5" y="13" width="1" height="1" fill="#4f86f7"/><rect x="6" y="13" width="1" height="1" fill="#4f86f7"/><rect x="7" y="13" width="1" height="1" fill="#4f86f7"/><rect x="8" y="13" width="1" height="1" fill="#000"/><rect x="9" y="13" width="1" height="1" fill="#4f86f7"/><rect x="10" y="13" width="1" height="1" fill="#4f86f7"/><rect x="11" y="13" width="1" height="1" fill="#4f86f7"/><rect x="12" y="13" width="1" height="1" fill="#4f86f7"/><rect x="13" y="13" width="1" height="1" fill="#4f86f7"/><rect x="14" y="13" width="1" height="1" fill="#4f86f7"/><rect x="15" y="13" width="1" height="1" fill="#000"/><rect x="0" y="14" width="1" height="1" fill="#000"/><rect x="1" y="14" width="1" height="1" fill="#000"/><rect x="2" y="14" width="1" height="1" fill="#000"/><rect x="3" y="14" width="1" height="1" fill="#000"/><rect x="4" y="14" width="1" height="1" fill="#000"/><rect x="5" y="14" width="1" height="1" fill="#000"/><rect x="6" y="14" width="1" height="1" fill="#000"/><rect x="7" y="14" width="1" height="1" fill="#000"/><rect x="8" y="14" width="1" height="1" fill="#000"/><rect x="9" y="14" width="1" height="1" fill="#000"/><rect x="10" y="14" width="1" height="1" fill="#000"/><rect x="11" y="14" width="1" height="1" fill="#000"/><rect x="12" y="14" width="1" height="1" fill="#000"/><rect x="13" y="14" width="1" height="1" fill="#000"/><rect x="14" y="14" width="1" height="1" fill="#000"/><rect x="15" y="14" width="1" height="1" fill="#000"/></svg>
<div class="tt" style="left:85.09px;top:577px;transform:scaleX(0.9051);transform-origin:0 0;">INKOOP STOLP DEUREN 67</div>
<div class="bx" style="left:49px;top:601px"><i class="bh"></i><i class="bv"></i></div>
<svg class="ic" style="left:64px;top:596px" width="16" height="15" viewBox="0 0 16 15" shape-rendering="crispEdges"><rect x="0" y="0" width="16" height="15" fill="#000"/><rect x="1" y="1" width="14" height="1" fill="#4f86f7"/><rect x="1" y="1" width="1" height="14" fill="#4f86f7"/><rect x="7" y="1" width="1" height="14" fill="#4f86f7"/><rect x="14" y="1" width="1" height="14" fill="#4f86f7"/><rect x="3" y="3" width="3" height="12" fill="#fff"/><rect x="9" y="3" width="5" height="12" fill="#fff"/></svg>
<div class="tt" style="left:85.11px;top:595px;transform:scaleX(0.8889);transform-origin:0 0;">HEFSCHUIF</div></div></div>
<div style="left:314px;top:73px;width:16px;height:533px;background:#f0f0f0;"></div>
<div style="left:314px;top:90px;width:15px;height:390px;background:#cdcdcd;"></div>
<svg style="left:318px;top:78px" width="8" height="7" viewBox="0 0 8 7"><path d="M1 6.2L4 2.2L7 6.2" fill="none" stroke="#5a5a5a" stroke-width="2"/></svg>
<svg style="left:318px;top:593px" width="8" height="7" viewBox="0 0 8 7"><path d="M1 1.8L4 5.8L7 1.8" fill="none" stroke="#5a5a5a" stroke-width="2"/></svg>
<div style="left:22px;top:606px;width:309px;height:17px;background:#f0f0f0;"></div>
<div style="left:40px;top:606px;width:220px;height:15px;background:#cdcdcd;"></div>
<div style="left:314px;top:606px;width:17px;height:17px;background:#f0f0f0;"></div>
<svg style="left:28px;top:610px" width="7" height="8" viewBox="0 0 7 8"><path d="M5.5 1L1.5 4L5.5 7" fill="none" stroke="#5a5a5a" stroke-width="2"/></svg>
<svg style="left:302px;top:610px" width="7" height="8" viewBox="0 0 7 8"><path d="M1.5 1L5.5 4L1.5 7" fill="none" stroke="#5a5a5a" stroke-width="2"/></svg>
<div style="left:339px;top:43px;width:1px;height:586px;background:#ffffff;"></div>
<div style="left:339px;top:43px;width:5px;height:1px;background:#ffffff;"></div>
<div style="left:344px;top:43px;width:1px;height:587px;background:#a0a0a0;"></div>
<div style="left:339px;top:628px;width:5px;height:1px;background:#ffffff;"></div>
<div style="left:339px;top:629px;width:6px;height:1px;background:#a0a0a0;"></div>
<div style="left:340px;top:286px;width:4px;height:1px;background:#ffffff;"></div>
<div style="left:339px;top:385px;width:5px;height:1px;background:#a0a0a0;"></div>
<svg style="left:340px;top:295px" width="4" height="7" viewBox="0 0 4 7"><path d="M0 0L4 3.5L0 7Z" fill="#000"/></svg>
<svg style="left:338px;top:370px" width="5" height="8" viewBox="0 0 5 8"><path d="M5 0.5L1 4L5 7.5Z" fill="#000"/></svg>
<div style="left:360px;top:63px;width:723px;height:564px;background:#ffffff;border:1px solid #d9d9d9"></div>
<div class="tab" style="left:422px;top:45px;width:43px;height:19px"></div>
<div class="t" style="left:426.90px;top:48px;font-size:12px;line-height:14px;height:14px;transform:scaleX(0.8971);transform-origin:0 0;">Details</div>
<div class="tab" style="left:464px;top:45px;width:100px;height:19px"></div>
<div class="t" style="left:470.50px;top:48px;font-size:12px;line-height:14px;height:14px;transform:scaleX(0.8979);transform-origin:0 0;">Hang en Sluitwerk</div>
<div class="tab" style="left:563px;top:45px;width:138px;height:19px"></div>
<div class="t" style="left:569.30px;top:48px;font-size:12px;line-height:14px;height:14px;transform:scaleX(0.8978);transform-origin:0 0;">Hang en Sluitwerk Keuzes</div>
<div class="tab" style="left:700px;top:45px;width:46px;height:19px"></div>
<div class="t" style="left:706.37px;top:48px;font-size:12px;line-height:14px;height:14px;transform:scaleX(0.9343);transform-origin:0 0;">Inhoud</div>
<div class="tab" style="left:745px;top:45px;width:54px;height:19px"></div>
<div class="t" style="left:752.00px;top:48px;font-size:12px;line-height:14px;height:14px;transform:scaleX(0.8913);transform-origin:0 0;">Artikelen</div>
<div class="tab" style="left:798px;top:45px;width:65px;height:19px"></div>
<div class="t" style="left:804.60px;top:48px;font-size:12px;line-height:14px;height:14px;transform:scaleX(0.9281);transform-origin:0 0;">Activiteiten</div>
<div class="tab" style="left:862px;top:45px;width:83px;height:19px"></div>
<div class="t" style="left:868.70px;top:48px;font-size:12px;line-height:14px;height:14px;transform:scaleX(0.8690);transform-origin:0 0;">Verwijs Combi's</div>
<div class="tab" style="left:360px;top:43px;width:63px;height:22px;background:#fff"></div>
<div class="t" style="left:368.00px;top:46px;font-size:12px;line-height:14px;height:14px;transform:scaleX(0.8925);transform-origin:0 0;">Algemeen</div>
<div style="left:365px;top:66px;width:715px;height:557px;background:#f0f0f0;"></div>
<div class="t" style="left:392.02px;top:77px;font-size:12px;line-height:14px;height:14px;transform:scaleX(0.8767);transform-origin:0 0;">Code:</div>
<div style="left:391px;top:92px;width:669px;height:20px;background:#fff;border:1px solid #7a7a7a"></div>
<div class="t" style="left:393.69px;top:95px;font-size:12px;line-height:14px;height:14px;transform:scaleX(0.9073);transform-origin:0 0;">STP BI 17x52.5</div>
<div class="t" style="left:392.13px;top:121px;font-size:12px;line-height:14px;height:14px;transform:scaleX(0.8662);transform-origin:0 0;">Omschrijving:</div>
<div style="left:391px;top:134px;width:669px;height:20px;background:#fff;border:1px solid #7a7a7a"></div>
<div class="t" style="left:393.72px;top:137px;font-size:12px;line-height:14px;height:14px;transform:scaleX(0.8776);transform-origin:0 0;">Stapeldorpel in Kozijn - BI 17x52.5</div>
<div class="t" style="left:393.10px;top:167px;font-size:12px;line-height:14px;height:14px;transform:scaleX(0.9071);transform-origin:0 0;">Type:</div>
<div class="t" style="left:390.89px;top:185px;font-size:12px;line-height:14px;height:14px;transform:scaleX(0.9079);transform-origin:0 0;">Deuren</div>
<div class="t" style="left:391.67px;top:212px;font-size:12px;line-height:14px;height:14px;transform:scaleX(0.9306);transform-origin:0 0;">Ufr Tabel:</div>
<div style="left:391px;top:232px;width:207px;height:21px;background:#e1e1e1;border:1px solid #adadad"></div>
<div class="t" style="left:394.80px;top:236px;font-size:12px;line-height:14px;height:14px;transform:scaleX(0.8981);transform-origin:0 0;">Standaard</div>
<svg style="left:584px;top:239px" width="10" height="7" viewBox="0 0 10 7"><path d="M1 1.5L5 5.5L9 1.5" fill="none" stroke="#404040" stroke-width="1.0"/></svg>
<div style="left:376px;top:282px;width:284px;height:240px;background:transparent;border:1px solid #dcdcdc"></div>
<div style="left:383px;top:276px;width:66px;height:15px;background:#f0f0f0;"></div>
<div class="t" style="left:384.90px;top:276px;font-size:12px;line-height:14px;height:14px;transform:scaleX(0.8955);transform-origin:0 0;">Psi waarden:</div>
<div style="left:386px;top:297px;width:266px;height:215px;background:#f0f0f0;border-top:1px solid #a0a0a0;border-left:1px solid #a0a0a0;border-right:1px solid #ffffff;border-bottom:1px solid #ffffff"></div>
<div style="left:387px;top:298px;width:264px;height:1px;background:#696969;"></div>
<div style="left:387px;top:298px;width:1px;height:213px;background:#696969;"></div>
<div style="left:650px;top:298px;width:1px;height:213px;background:#e3e3e3;"></div>
<div style="left:387px;top:510px;width:264px;height:1px;background:#e3e3e3;"></div>
<div style="left:388px;top:299px;width:20px;height:19px;background:#f0f0f0;"></div><div style="left:388px;top:299px;width:19px;height:1px;background:#fff;"></div><div style="left:388px;top:299px;width:1px;height:18px;background:#fff;"></div><div style="left:407px;top:299px;width:1px;height:19px;background:#000;"></div><div style="left:388px;top:317px;width:20px;height:1px;background:#000;"></div>
<div style="left:408px;top:299px;width:40px;height:19px;background:#f0f0f0;"></div><div style="left:408px;top:299px;width:39px;height:1px;background:#fff;"></div><div style="left:408px;top:299px;width:1px;height:18px;background:#fff;"></div><div style="left:447px;top:299px;width:1px;height:19px;background:#000;"></div><div style="left:408px;top:317px;width:40px;height:1px;background:#000;"></div>
<div class="t" style="left:412px;top:302px;color:#0a0a3a">Positie</div>
<div style="left:448px;top:299px;width:62px;height:19px;background:#f0f0f0;"></div><div style="left:448px;top:299px;width:61px;height:1px;background:#fff;"></div><div style="left:448px;top:299px;width:1px;height:18px;background:#fff;"></div><div style="left:509px;top:299px;width:1px;height:19px;background:#000;"></div><div style="left:448px;top:317px;width:62px;height:1px;background:#000;"></div>
<div class="t" style="left:452px;top:302px;color:#0a0a3a">Psi (W/mK)</div>
<div style="left:388px;top:318px;width:20px;height:16px;background:#f0f0f0;"></div><div style="left:388px;top:318px;width:19px;height:1px;background:#fff;"></div><div style="left:388px;top:318px;width:1px;height:15px;background:#fff;"></div><div style="left:407px;top:318px;width:1px;height:16px;background:#000;"></div><div style="left:388px;top:333px;width:20px;height:1px;background:#000;"></div>
<div style="left:408px;top:318px;width:40px;height:16px;background:#e2dfb6;"></div>
<div class="hd" style="left:408px;top:333px;width:40px;background:repeating-linear-gradient(to right,transparent 0 1px,#5a5a5a 1px 2px)"></div>
<div class="t" style="left:410px;top:319px;color:#0a0a2a">Links</div>
<div style="left:448px;top:318px;width:62px;height:16px;background:#ffffff;"></div>
<div class="hd" style="left:448px;top:333px;width:62px;background:repeating-linear-gradient(to right,transparent 0 1px,#5a5a5a 1px 2px)"></div>
<div class="t" style="left:450px;top:319px;color:#0a0a2a">0.000</div>
<div class="vd" style="left:447px;top:318px;height:16px;background:repeating-linear-gradient(to bottom,transparent 0 1px,#5a5a5a 1px 2px)"></div>
<div class="vd" style="left:509px;top:318px;height:16px;background:repeating-linear-gradient(to bottom,transparent 0 1px,#5a5a5a 1px 2px)"></div>
<div style="left:388px;top:334px;width:20px;height:16px;background:#f0f0f0;"></div><div style="left:388px;top:334px;width:19px;height:1px;background:#fff;"></div><div style="left:388px;top:334px;width:1px;height:15px;background:#fff;"></div><div style="left:407px;top:334px;width:1px;height:16px;background:#000;"></div><div style="left:388px;top:349px;width:20px;height:1px;background:#000;"></div>
<div style="left:408px;top:334px;width:40px;height:16px;background:#e2dfb6;"></div>
<div class="hd" style="left:408px;top:349px;width:40px;background:repeating-linear-gradient(to right,transparent 0 1px,#5a5a5a 1px 2px)"></div>
<div class="t" style="left:410px;top:335px;color:#0a0a2a">Boven</div>
<div style="left:448px;top:334px;width:62px;height:16px;background:#ffffff;"></div>
<div class="hd" style="left:448px;top:349px;width:62px;background:repeating-linear-gradient(to right,transparent 0 1px,#5a5a5a 1px 2px)"></div>
<div class="t" style="left:450px;top:335px;color:#0a0a2a">0.000</div>
<div class="vd" style="left:447px;top:334px;height:16px;background:repeating-linear-gradient(to bottom,transparent 0 1px,#5a5a5a 1px 2px)"></div>
<div class="vd" style="left:509px;top:334px;height:16px;background:repeating-linear-gradient(to bottom,transparent 0 1px,#5a5a5a 1px 2px)"></div>
<div style="left:388px;top:350px;width:20px;height:16px;background:#f0f0f0;"></div><div style="left:388px;top:350px;width:19px;height:1px;background:#fff;"></div><div style="left:388px;top:350px;width:1px;height:15px;background:#fff;"></div><div style="left:407px;top:350px;width:1px;height:16px;background:#000;"></div><div style="left:388px;top:365px;width:20px;height:1px;background:#000;"></div>
<div style="left:408px;top:350px;width:40px;height:16px;background:#e2dfb6;"></div>
<div class="hd" style="left:408px;top:365px;width:40px;background:repeating-linear-gradient(to right,transparent 0 1px,#5a5a5a 1px 2px)"></div>
<div class="t" style="left:410px;top:351px;color:#0a0a2a">Rechts</div>
<div style="left:448px;top:350px;width:62px;height:16px;background:#ffffff;"></div>
<div class="hd" style="left:448px;top:365px;width:62px;background:repeating-linear-gradient(to right,transparent 0 1px,#5a5a5a 1px 2px)"></div>
<div class="t" style="left:450px;top:351px;color:#0a0a2a">0.000</div>
<div class="vd" style="left:447px;top:350px;height:16px;background:repeating-linear-gradient(to bottom,transparent 0 1px,#5a5a5a 1px 2px)"></div>
<div class="vd" style="left:509px;top:350px;height:16px;background:repeating-linear-gradient(to bottom,transparent 0 1px,#5a5a5a 1px 2px)"></div>
<div style="left:388px;top:366px;width:20px;height:16px;background:#f0f0f0;"></div><div style="left:388px;top:366px;width:19px;height:1px;background:#fff;"></div><div style="left:388px;top:366px;width:1px;height:15px;background:#fff;"></div><div style="left:407px;top:366px;width:1px;height:16px;background:#000;"></div><div style="left:388px;top:381px;width:20px;height:1px;background:#000;"></div>
<div style="left:408px;top:366px;width:40px;height:16px;background:#e2dfb6;"></div>
<div class="hd" style="left:408px;top:381px;width:40px;background:repeating-linear-gradient(to right,transparent 0 1px,#5a5a5a 1px 2px)"></div>
<div class="t" style="left:410px;top:367px;color:#0a0a2a">Onder</div>
<div style="left:448px;top:366px;width:62px;height:16px;background:#ffffff;"></div>
<div class="hd" style="left:448px;top:381px;width:62px;background:repeating-linear-gradient(to right,transparent 0 1px,#5a5a5a 1px 2px)"></div>
<div class="t" style="left:450px;top:367px;color:#0a0a2a">0.000</div>
<div class="vd" style="left:447px;top:366px;height:16px;background:repeating-linear-gradient(to bottom,transparent 0 1px,#5a5a5a 1px 2px)"></div>
<div class="vd" style="left:509px;top:366px;height:16px;background:repeating-linear-gradient(to bottom,transparent 0 1px,#5a5a5a 1px 2px)"></div>
<div style="left:683px;top:282px;width:299px;height:240px;background:transparent;border:1px solid #dcdcdc"></div>
<div style="left:690px;top:276px;width:62px;height:15px;background:#f0f0f0;"></div>
<div class="t" style="left:691.80px;top:276px;font-size:12px;line-height:14px;height:14px;transform:scaleX(0.9034);transform-origin:0 0;">U waarden:</div>
<div style="left:694px;top:297px;width:265px;height:215px;background:#f0f0f0;border-top:1px solid #a0a0a0;border-left:1px solid #a0a0a0;border-right:1px solid #ffffff;border-bottom:1px solid #ffffff"></div>
<div style="left:695px;top:298px;width:263px;height:1px;background:#696969;"></div>
<div style="left:695px;top:298px;width:1px;height:213px;background:#696969;"></div>
<div style="left:957px;top:298px;width:1px;height:213px;background:#e3e3e3;"></div>
<div style="left:695px;top:510px;width:263px;height:1px;background:#e3e3e3;"></div>
<div style="left:696px;top:299px;width:20px;height:19px;background:#f0f0f0;"></div><div style="left:696px;top:299px;width:19px;height:1px;background:#fff;"></div><div style="left:696px;top:299px;width:1px;height:18px;background:#fff;"></div><div style="left:715px;top:299px;width:1px;height:19px;background:#000;"></div><div style="left:696px;top:317px;width:20px;height:1px;background:#000;"></div>
<div style="left:716px;top:299px;width:40px;height:19px;background:#f0f0f0;"></div><div style="left:716px;top:299px;width:39px;height:1px;background:#fff;"></div><div style="left:716px;top:299px;width:1px;height:18px;background:#fff;"></div><div style="left:755px;top:299px;width:1px;height:19px;background:#000;"></div><div style="left:716px;top:317px;width:40px;height:1px;background:#000;"></div>
<div class="t" style="left:720px;top:302px;color:#0a0a3a">Positie</div>
<div style="left:756px;top:299px;width:70px;height:19px;background:#f0f0f0;"></div><div style="left:756px;top:299px;width:69px;height:1px;background:#fff;"></div><div style="left:756px;top:299px;width:1px;height:18px;background:#fff;"></div><div style="left:825px;top:299px;width:1px;height:19px;background:#000;"></div><div style="left:756px;top:317px;width:70px;height:1px;background:#000;"></div>
<div class="t" style="left:760px;top:302px;color:#0a0a3a">Hoogte (mm)</div>
<div style="left:826px;top:299px;width:61px;height:19px;background:#f0f0f0;"></div><div style="left:826px;top:299px;width:60px;height:1px;background:#fff;"></div><div style="left:826px;top:299px;width:1px;height:18px;background:#fff;"></div><div style="left:886px;top:299px;width:1px;height:19px;background:#000;"></div><div style="left:826px;top:317px;width:61px;height:1px;background:#000;"></div>
<div class="t" style="left:830px;top:302px;color:#0a0a3a">U (W/m2K)</div>
<div style="left:696px;top:318px;width:20px;height:16px;background:#f0f0f0;"></div><div style="left:696px;top:318px;width:19px;height:1px;background:#fff;"></div><div style="left:696px;top:318px;width:1px;height:15px;background:#fff;"></div><div style="left:715px;top:318px;width:1px;height:16px;background:#000;"></div><div style="left:696px;top:333px;width:20px;height:1px;background:#000;"></div>
<div style="left:716px;top:318px;width:40px;height:16px;background:#e2dfb6;"></div>
<div class="hd" style="left:716px;top:333px;width:40px;background:repeating-linear-gradient(to right,transparent 0 1px,#5a5a5a 1px 2px)"></div>
<div class="t" style="left:718px;top:319px;color:#0a0a2a">Links</div>
<div style="left:756px;top:318px;width:70px;height:16px;background:#ffffff;"></div>
<div class="hd" style="left:756px;top:333px;width:70px;background:repeating-linear-gradient(to right,transparent 0 1px,#5a5a5a 1px 2px)"></div>
<div class="t" style="left:758px;top:319px;color:#0a0a2a">0.0</div>
<div style="left:826px;top:318px;width:61px;height:16px;background:#ffffff;"></div>
<div class="hd" style="left:826px;top:333px;width:61px;background:repeating-linear-gradient(to right,transparent 0 1px,#5a5a5a 1px 2px)"></div>
<div class="t" style="left:828px;top:319px;color:#0a0a2a">0.000</div>
<div class="vd" style="left:755px;top:318px;height:16px;background:repeating-linear-gradient(to bottom,transparent 0 1px,#5a5a5a 1px 2px)"></div>
<div class="vd" style="left:825px;top:318px;height:16px;background:repeating-linear-gradient(to bottom,transparent 0 1px,#5a5a5a 1px 2px)"></div>
<div class="vd" style="left:886px;top:318px;height:16px;background:repeating-linear-gradient(to bottom,transparent 0 1px,#5a5a5a 1px 2px)"></div>
<div style="left:696px;top:334px;width:20px;height:16px;background:#f0f0f0;"></div><div style="left:696px;top:334px;width:19px;height:1px;background:#fff;"></div><div style="left:696px;top:334px;width:1px;height:15px;background:#fff;"></div><div style="left:715px;top:334px;width:1px;height:16px;background:#000;"></div><div style="left:696px;top:349px;width:20px;height:1px;background:#000;"></div>
<div style="left:716px;top:334px;width:40px;height:16px;background:#e2dfb6;"></div>
<div class="hd" style="left:716px;top:349px;width:40px;background:repeating-linear-gradient(to right,transparent 0 1px,#5a5a5a 1px 2px)"></div>
<div class="t" style="left:718px;top:335px;color:#0a0a2a">Boven</div>
<div style="left:756px;top:334px;width:70px;height:16px;background:#ffffff;"></div>
<div class="hd" style="left:756px;top:349px;width:70px;background:repeating-linear-gradient(to right,transparent 0 1px,#5a5a5a 1px 2px)"></div>
<div class="t" style="left:758px;top:335px;color:#0a0a2a">0.0</div>
<div style="left:826px;top:334px;width:61px;height:16px;background:#ffffff;"></div>
<div class="hd" style="left:826px;top:349px;width:61px;background:repeating-linear-gradient(to right,transparent 0 1px,#5a5a5a 1px 2px)"></div>
<div class="t" style="left:828px;top:335px;color:#0a0a2a">0.000</div>
<div class="vd" style="left:755px;top:334px;height:16px;background:repeating-linear-gradient(to bottom,transparent 0 1px,#5a5a5a 1px 2px)"></div>
<div class="vd" style="left:825px;top:334px;height:16px;background:repeating-linear-gradient(to bottom,transparent 0 1px,#5a5a5a 1px 2px)"></div>
<div class="vd" style="left:886px;top:334px;height:16px;background:repeating-linear-gradient(to bottom,transparent 0 1px,#5a5a5a 1px 2px)"></div>
<div style="left:696px;top:350px;width:20px;height:16px;background:#f0f0f0;"></div><div style="left:696px;top:350px;width:19px;height:1px;background:#fff;"></div><div style="left:696px;top:350px;width:1px;height:15px;background:#fff;"></div><div style="left:715px;top:350px;width:1px;height:16px;background:#000;"></div><div style="left:696px;top:365px;width:20px;height:1px;background:#000;"></div>
<div style="left:716px;top:350px;width:40px;height:16px;background:#e2dfb6;"></div>
<div class="hd" style="left:716px;top:365px;width:40px;background:repeating-linear-gradient(to right,transparent 0 1px,#5a5a5a 1px 2px)"></div>
<div class="t" style="left:718px;top:351px;color:#0a0a2a">Rechts</div>
<div style="left:756px;top:350px;width:70px;height:16px;background:#ffffff;"></div>
<div class="hd" style="left:756px;top:365px;width:70px;background:repeating-linear-gradient(to right,transparent 0 1px,#5a5a5a 1px 2px)"></div>
<div class="t" style="left:758px;top:351px;color:#0a0a2a">0.0</div>
<div style="left:826px;top:350px;width:61px;height:16px;background:#ffffff;"></div>
<div class="hd" style="left:826px;top:365px;width:61px;background:repeating-linear-gradient(to right,transparent 0 1px,#5a5a5a 1px 2px)"></div>
<div class="t" style="left:828px;top:351px;color:#0a0a2a">0.000</div>
<div class="vd" style="left:755px;top:350px;height:16px;background:repeating-linear-gradient(to bottom,transparent 0 1px,#5a5a5a 1px 2px)"></div>
<div class="vd" style="left:825px;top:350px;height:16px;background:repeating-linear-gradient(to bottom,transparent 0 1px,#5a5a5a 1px 2px)"></div>
<div class="vd" style="left:886px;top:350px;height:16px;background:repeating-linear-gradient(to bottom,transparent 0 1px,#5a5a5a 1px 2px)"></div>
<div style="left:696px;top:366px;width:20px;height:16px;background:#f0f0f0;"></div><div style="left:696px;top:366px;width:19px;height:1px;background:#fff;"></div><div style="left:696px;top:366px;width:1px;height:15px;background:#fff;"></div><div style="left:715px;top:366px;width:1px;height:16px;background:#000;"></div><div style="left:696px;top:381px;width:20px;height:1px;background:#000;"></div>
<div style="left:716px;top:366px;width:40px;height:16px;background:#e2dfb6;"></div>
<div class="hd" style="left:716px;top:381px;width:40px;background:repeating-linear-gradient(to right,transparent 0 1px,#5a5a5a 1px 2px)"></div>
<div class="t" style="left:718px;top:367px;color:#0a0a2a">Onder</div>
<div style="left:756px;top:366px;width:70px;height:16px;background:#ffffff;"></div>
<div class="hd" style="left:756px;top:381px;width:70px;background:repeating-linear-gradient(to right,transparent 0 1px,#5a5a5a 1px 2px)"></div>
<div class="t" style="left:758px;top:367px;color:#0a0a2a">0.0</div>
<div style="left:826px;top:366px;width:61px;height:16px;background:#ffffff;"></div>
<div class="hd" style="left:826px;top:381px;width:61px;background:repeating-linear-gradient(to right,transparent 0 1px,#5a5a5a 1px 2px)"></div>
<div class="t" style="left:828px;top:367px;color:#0a0a2a">0.000</div>
<div class="vd" style="left:755px;top:366px;height:16px;background:repeating-linear-gradient(to bottom,transparent 0 1px,#5a5a5a 1px 2px)"></div>
<div class="vd" style="left:825px;top:366px;height:16px;background:repeating-linear-gradient(to bottom,transparent 0 1px,#5a5a5a 1px 2px)"></div>
<div class="vd" style="left:886px;top:366px;height:16px;background:repeating-linear-gradient(to bottom,transparent 0 1px,#5a5a5a 1px 2px)"></div>
<div class="btn" style="left:13px;top:636px;width:90px;border:2px solid #0078d7;box-shadow:inset 0 0 0 1px #f7ede2"></div>
<div class="t" style="left:42.68px;top:640px;font-size:12px;line-height:14px;height:14px;transform:scaleX(0.9219);transform-origin:0 0;">Nieuw</div>
<div class="dis" style="left:113px;top:636px;width:73px"></div>
<div class="t" style="left:127.28px;top:640px;font-size:12px;line-height:14px;height:14px;transform:scaleX(0.9152);transform-origin:0 0;color:#838383">Kopiëren</div>
<div class="dis" style="left:197px;top:636px;width:73px"></div>
<div class="t" style="left:211.90px;top:640px;font-size:12px;line-height:14px;height:14px;transform:scaleX(0.8796);transform-origin:0 0;color:#838383">Verwijder</div>
<div class="btn" style="left:325px;top:636px;width:73px"></div>
<div class="t" style="left:329.01px;top:640px;font-size:12px;line-height:14px;height:14px;transform:scaleX(0.8944);transform-origin:0 0;">&lt;&lt; (F8) Terug</div>
<div class="dis" style="left:407px;top:636px;width:73px"></div>
<div class="t" style="left:408.90px;top:640px;font-size:12px;line-height:14px;height:14px;transform:scaleX(0.8562);transform-origin:0 0;color:#838383">Vooruit (F9) &gt;&gt;</div>
<div class="btn" style="left:928px;top:636px;width:73px"></div>
<div class="t" style="left:956.91px;top:640px;font-size:12px;line-height:14px;height:14px;transform:scaleX(0.8875);transform-origin:0 0;">OK</div>
<div class="btn" style="left:1010px;top:636px;width:73px"></div>
<div class="t" style="left:1022.00px;top:640px;font-size:12px;line-height:14px;height:14px;transform:scaleX(0.8963);transform-origin:0 0;">Annuleren</div>
<svg style="left:602px;top:458px" width="16" height="22" viewBox="0 0 16 22"><path d="M1.5 1.5L1.5 17.5L5.5 13.5L8.5 20L11 19L8.2 12.6L13.5 12.6Z" fill="#fff" stroke="#111" stroke-width="1.1" stroke-linejoin="miter"/></svg>
<svg style="left:1082px;top:650px" width="13" height="13" shape-rendering="crispEdges"><rect x="12" y="1" width="1" height="1" fill="#ffffff"/><rect x="11" y="2" width="1" height="1" fill="#ffffff"/><rect x="12" y="2" width="1" height="1" fill="#a4a4a4"/><rect x="10" y="3" width="1" height="1" fill="#ffffff"/><rect x="11" y="3" width="1" height="1" fill="#a4a4a4"/><rect x="12" y="3" width="1" height="1" fill="#b4b4b4"/><rect x="9" y="4" width="1" height="1" fill="#ffffff"/><rect x="10" y="4" width="1" height="1" fill="#a4a4a4"/><rect x="11" y="4" width="1" height="1" fill="#b4b4b4"/><rect x="12" y="4" width="1" height="1" fill="#e8e8e8"/><rect x="8" y="5" width="1" height="1" fill="#ffffff"/><rect x="9" y="5" width="1" height="1" fill="#a4a4a4"/><rect x="10" y="5" width="1" height="1" fill="#b4b4b4"/><rect x="11" y="5" width="1" height="1" fill="#e8e8e8"/><rect x="12" y="5" width="1" height="1" fill="#ffffff"/><rect x="7" y="6" width="1" height="1" fill="#ffffff"/><rect x="8" y="6" width="1" height="1" fill="#a4a4a4"/><rect x="9" y="6" width="1" height="1" fill="#b4b4b4"/><rect x="10" y="6" width="1" height="1" fill="#e8e8e8"/><rect x="11" y="6" width="1" height="1" fill="#ffffff"/><rect x="12" y="6" width="1" height="1" fill="#a4a4a4"/><rect x="6" y="7" width="1" height="1" fill="#ffffff"/><rect x="7" y="7" width="1" height="1" fill="#a4a4a4"/><rect x="8" y="7" width="1" height="1" fill="#b4b4b4"/><rect x="9" y="7" width="1" height="1" fill="#e8e8e8"/><rect x="10" y="7" width="1" height="1" fill="#ffffff"/><rect x="11" y="7" width="1" height="1" fill="#a4a4a4"/><rect x="12" y="7" width="1" height="1" fill="#b4b4b4"/><rect x="5" y="8" width="1" height="1" fill="#ffffff"/><rect x="6" y="8" width="1" height="1" fill="#a4a4a4"/><rect x="7" y="8" width="1" height="1" fill="#b4b4b4"/><rect x="8" y="8" width="1" height="1" fill="#e8e8e8"/><rect x="9" y="8" width="1" height="1" fill="#ffffff"/><rect x="10" y="8" width="1" height="1" fill="#a4a4a4"/><rect x="11" y="8" width="1" height="1" fill="#b4b4b4"/><rect x="12" y="8" width="1" height="1" fill="#e8e8e8"/><rect x="4" y="9" width="1" height="1" fill="#ffffff"/><rect x="5" y="9" width="1" height="1" fill="#a4a4a4"/><rect x="6" y="9" width="1" height="1" fill="#b4b4b4"/><rect x="7" y="9" width="1" height="1" fill="#e8e8e8"/><rect x="8" y="9" width="1" height="1" fill="#ffffff"/><rect x="9" y="9" width="1" height="1" fill="#a4a4a4"/><rect x="10" y="9" width="1" height="1" fill="#b4b4b4"/><rect x="11" y="9" width="1" height="1" fill="#e8e8e8"/><rect x="12" y="9" width="1" height="1" fill="#ffffff"/><rect x="3" y="10" width="1" height="1" fill="#ffffff"/><rect x="4" y="10" width="1" height="1" fill="#a4a4a4"/><rect x="5" y="10" width="1" height="1" fill="#b4b4b4"/><rect x="6" y="10" width="1" height="1" fill="#e8e8e8"/><rect x="7" y="10" width="1" height="1" fill="#ffffff"/><rect x="8" y="10" width="1" height="1" fill="#a4a4a4"/><rect x="9" y="10" width="1" height="1" fill="#b4b4b4"/><rect x="10" y="10" width="1" height="1" fill="#e8e8e8"/><rect x="11" y="10" width="1" height="1" fill="#ffffff"/><rect x="12" y="10" width="1" height="1" fill="#a4a4a4"/><rect x="2" y="11" width="1" height="1" fill="#ffffff"/><rect x="3" y="11" width="1" height="1" fill="#a4a4a4"/><rect x="4" y="11" width="1" height="1" fill="#b4b4b4"/><rect x="5" y="11" width="1" height="1" fill="#e8e8e8"/><rect x="6" y="11" width="1" height="1" fill="#ffffff"/><rect x="7" y="11" width="1" height="1" fill="#a4a4a4"/><rect x="8" y="11" width="1" height="1" fill="#b4b4b4"/><rect x="9" y="11" width="1" height="1" fill="#e8e8e8"/><rect x="10" y="11" width="1" height="1" fill="#ffffff"/><rect x="11" y="11" width="1" height="1" fill="#a4a4a4"/><rect x="12" y="11" width="1" height="1" fill="#b4b4b4"/><rect x="1" y="12" width="1" height="1" fill="#ffffff"/><rect x="2" y="12" width="1" height="1" fill="#a4a4a4"/><rect x="3" y="12" width="1" height="1" fill="#b4b4b4"/><rect x="4" y="12" width="1" height="1" fill="#e8e8e8"/><rect x="5" y="12" width="1" height="1" fill="#ffffff"/><rect x="6" y="12" width="1" height="1" fill="#a4a4a4"/><rect x="7" y="12" width="1" height="1" fill="#b4b4b4"/><rect x="8" y="12" width="1" height="1" fill="#e8e8e8"/><rect x="9" y="12" width="1" height="1" fill="#ffffff"/><rect x="10" y="12" width="1" height="1" fill="#a4a4a4"/><rect x="11" y="12" width="1" height="1" fill="#b4b4b4"/><rect x="12" y="12" width="1" height="1" fill="#e8e8e8"/></svg>
</body></html>
